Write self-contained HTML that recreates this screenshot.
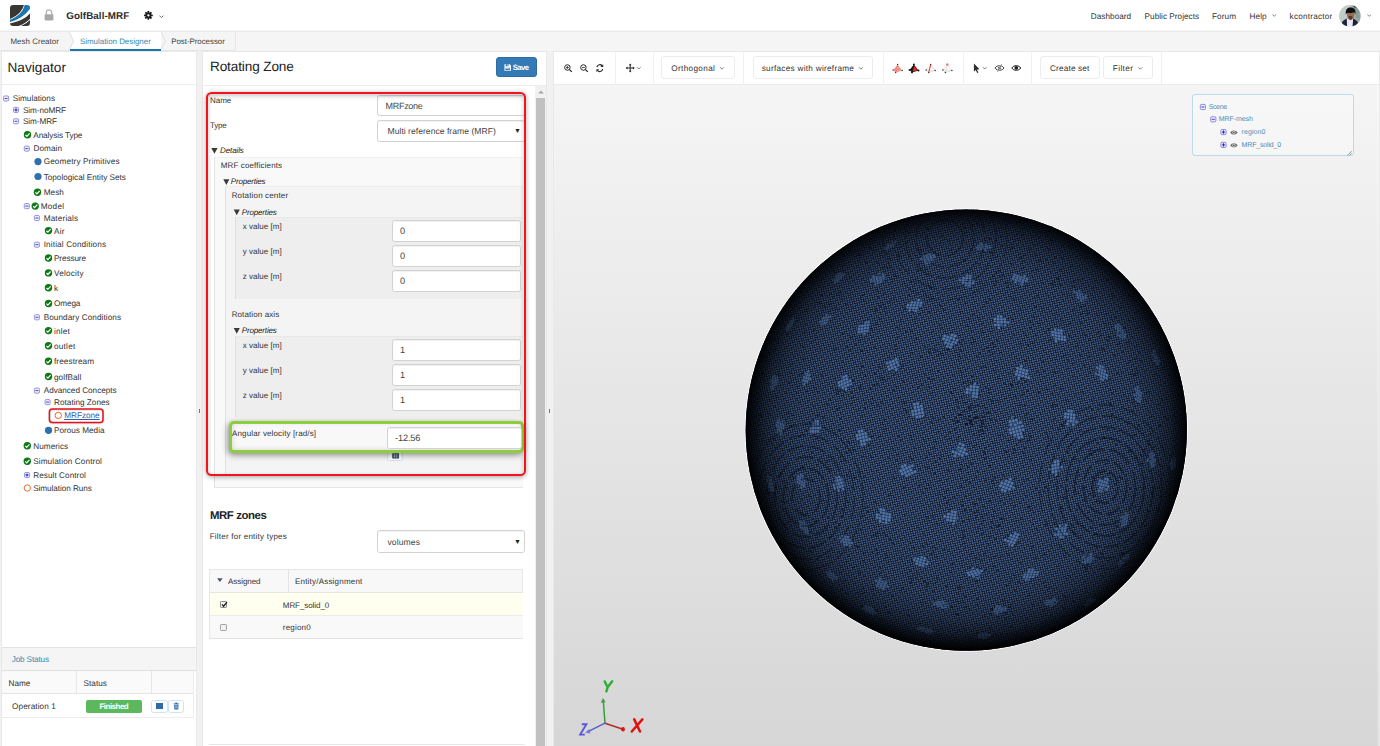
<!DOCTYPE html>
<html lang="en">
<head>
<meta charset="utf-8">
<title>GolfBall-MRF - Simulation Designer</title>
<style>
*{box-sizing:border-box;margin:0;padding:0}
html,body{width:1380px;height:746px;overflow:hidden;background:#f1f1f1;font-family:"Liberation Sans",sans-serif;color:#333}
#app{position:relative;width:1380px;height:746px;overflow:hidden}
.a{position:absolute}
.t{position:absolute;white-space:pre;line-height:1;font-size:8.2px;color:#333;text-rendering:geometricPrecision}
.gl{position:absolute;left:0;top:0;pointer-events:none}
.ic{position:absolute;overflow:visible}
/* header */
#hdr{left:0;top:0;width:1380px;height:32px;background:#fff;border-bottom:1px solid #e9e9e9;box-shadow:inset 0 -1px 0 #f6f6f6}
#tabs{left:0;top:32px;width:1380px;height:19px;background:#f5f5f5}
/* panels */
.panel{background:#fff;border:1px solid #e9e9e9}
.hr{background:#ececec;height:1px}
.inp{background:#fff;border:1px solid #d2d2d2;border-radius:2.5px;box-shadow:inset 0 1px 1px rgba(0,0,0,.06)}
.tb{background:#fff;border:1px solid #ececec;border-radius:3px}
.sep{background:#f0f0f0;width:1px;top:52px;height:33px}
</style>
</head>
<body>
<div id="app">

<!-- ================= HEADER ================= -->
<div id="hdr" class="a"></div>
<svg class="ic" style="left:10px;top:5px" width="20" height="21" viewBox="0 0 20 21">
  <defs><clipPath id="lg"><rect x="0" y="0" width="20" height="21" rx="3.2"/></clipPath></defs>
  <g clip-path="url(#lg)">
    <rect width="20" height="21" fill="#3a3633"/>
    <path d="M14.2 -1Q11.9 9.8 -1 14.4L-1 18.6Q14.6 15.8 21 7.4L21 -1Z" fill="#fff"/>
    <path d="M15 -1Q12.5 10.4 -1 15.1L-1 17.3Q14 13.6 21 2.2L21 -1Z" fill="#1b77ad"/>
    <path d="M21 12.6Q15.5 19.2 6.4 21.6L8.4 21.8Q16.2 19.8 21 13.9Z" fill="#fff"/>
  </g>
</svg>
<svg class="ic" style="left:44px;top:8.6px" width="10" height="12" viewBox="0 0 10 12">
  <path d="M2.3 5.6V3.6a2.7 2.7 0 0 1 5.4 0v2" fill="none" stroke="#b3b3b3" stroke-width="1.3"/>
  <rect x="0.6" y="5.2" width="8.8" height="6.2" rx="0.8" fill="#a9a9a9"/>
</svg>
<!-- gear -->
<svg class="ic" style="left:143.9px;top:11.2px" width="8.8" height="8.8" viewBox="0 0 16 16">
  <g fill="#1b1b1b">
    <circle cx="8" cy="8" r="5.2"/>
    <rect x="6.3" y="0" width="3.4" height="16" rx="0.8"/>
    <rect x="6.3" y="0" width="3.4" height="16" rx="0.8" transform="rotate(45 8 8)"/>
    <rect x="6.3" y="0" width="3.4" height="16" rx="0.8" transform="rotate(90 8 8)"/>
    <rect x="6.3" y="0" width="3.4" height="16" rx="0.8" transform="rotate(135 8 8)"/>
  </g>
  <circle cx="8" cy="8" r="2.1" fill="#fff"/>
</svg>
<svg class="ic" style="left:158.5px;top:14.8px" width="4.8" height="3.2" viewBox="0 0 4.8 3.2"><path d="M0.4 0.6L2.4 2.6L4.4 0.6" fill="none" stroke="#646464" stroke-width="0.95"/></svg>
<svg class="ic" style="left:1272.4px;top:14px" width="4.4" height="3" viewBox="0 0 4.4 3"><path d="M0.4 0.6L2.2 2.3L4 0.6" fill="none" stroke="#666" stroke-width="0.8"/></svg>
<svg class="ic" style="left:1366.7px;top:14px" width="4.4" height="3" viewBox="0 0 4.4 3"><path d="M0.4 0.6L2.2 2.3L4 0.6" fill="none" stroke="#666" stroke-width="0.8"/></svg>
<!-- avatar -->
<svg class="ic" style="left:1339px;top:4.6px" width="21.8" height="21.8" viewBox="0 0 22 22">
  <defs><clipPath id="av"><circle cx="11" cy="11" r="10.9"/></clipPath>
  <filter id="avb" x="-10%" y="-10%" width="120%" height="120%"><feGaussianBlur stdDeviation="0.45"/></filter></defs>
  <g clip-path="url(#av)"><g filter="url(#avb)">
    <rect x="-2" y="-2" width="26" height="26" fill="#c3cbc8"/>
    <path d="M12.5 -2H24V24H13Z" fill="#9aa9a2"/>
    <path d="M13.6 -1L16.4 -1L19.6 7.5L18 8Z" fill="#1f3a2d"/>
    <path d="M15.6 2L20 4L21 14L17.6 14Z" fill="#8b9c94"/>
    <path d="M1.2 23C1.6 17.5 4.6 15.2 8.4 13.4L11 17.4L13.8 13.4C17.4 15 20.4 17.4 20.8 23Z" fill="#1f2438"/>
    <path d="M7.9 13.8L11 12.6L14.2 13.8L13.6 23H8.2Z" fill="#e6e9f6"/>
    <path d="M7.9 8.2C7.9 6 9 5.4 11.6 5.4C14.4 5.4 15.4 6.2 15.4 8.4C15.4 12.4 13.8 15.4 11.6 15.4C9.4 15.4 7.9 12.2 7.9 8.2Z" fill="#9a6a50"/>
    <path d="M9.6 11.6C10.4 11 12.8 11 13.6 11.6C13.8 13.4 12.8 14.6 11.6 14.6C10.4 14.6 9.4 13.4 9.6 11.6Z" fill="#5a3a2c"/>
    <path d="M6.9 9.6C6.2 4.6 8.4 2.4 11.6 2.5C15.2 2.4 17.4 4.8 16.5 9.4C16 8.6 15.6 7.8 15.2 7.4C13.4 8.2 10.2 8.4 8.4 7.8C7.8 8.2 7.4 8.8 6.9 9.6Z" fill="#111012"/>
  </g></g>
</svg>

<!-- ================= TABS ================= -->
<div id="tabs" class="a"></div>
<div class="a" style="left:0;top:50px;width:235px;height:1px;background:#e6e6e6"></div>
<div class="a" style="left:67px;top:32px;width:93.7px;height:17px;background:#fff"></div>
<div class="a" style="left:70px;top:49px;width:91px;height:2px;background:#1a76ac"></div>
<div class="a" style="left:235px;top:32px;width:1px;height:19px;background:#e6e6e6"></div>
<svg class="ic" style="left:67px;top:32px" width="8" height="18" viewBox="0 0 8 19" preserveAspectRatio="none"><path d="M0 0H2.2L6.5 9.5L2.2 19H0Z" fill="#f5f5f5"/><path d="M2.2 0L6.5 9.5L2.2 19" fill="none" stroke="#dcdcdc" stroke-width="0.9"/></svg>
<svg class="ic" style="left:158.5px;top:32px" width="8" height="18" viewBox="0 0 8 19" preserveAspectRatio="none"><path d="M2.2 0L6.5 9.5L2.2 18H8V0Z" fill="#f5f5f5"/><path d="M2.2 0L6.5 9.5L2.2 18" fill="none" stroke="#dcdcdc" stroke-width="0.9"/></svg>

<!-- ================= NAVIGATOR PANEL ================= -->
<div class="a panel" style="left:1px;top:51px;width:196px;height:700px"></div>
<div class="a hr" style="left:2px;top:84px;width:194px"></div>
<!-- job status -->
<div class="a" style="left:2px;top:647px;width:194px;height:24px;background:#f5f5f5;border-top:1px solid #e2e2e2;border-bottom:1px solid #e0e0e0"></div>
<div class="a" style="left:2px;top:671px;width:192px;height:23px;background:#fafafa;border-bottom:1px solid #e4e4e4"></div>
<div class="a" style="left:76px;top:671px;width:1px;height:23px;background:#e6e6e6"></div>
<div class="a" style="left:151px;top:671px;width:1px;height:23px;background:#e6e6e6"></div>
<div class="a" style="left:193px;top:671px;width:1px;height:47px;background:#ececec"></div>
<div class="a" style="left:2px;top:717px;width:192px;height:1px;background:#ececec"></div>
<div class="a" style="left:86.3px;top:699.5px;width:55.6px;height:13px;background:#5cb85c;border-radius:2px"></div>
<div class="a" style="left:151.2px;top:699.5px;width:16.4px;height:13.4px;background:#fff;border:1px solid #cfe3f0;border-radius:2.5px"></div>
<div class="a" style="left:167.7px;top:699.5px;width:16.2px;height:13.4px;background:#fff;border:1px solid #cfe3f0;border-radius:2.5px"></div>
<div class="a" style="left:156.2px;top:702.9px;width:6.8px;height:6.6px;background:#2c6aa8"></div>
<svg class="ic" style="left:172.6px;top:702.2px" width="6.6" height="7.8" viewBox="0 0 14 16">
  <path d="M1 3H13V4.6H1ZM5 1H9V3H5Z" fill="#2c6aa8"/><path d="M2.2 5.4H11.8L11 15.4H3Z" fill="#2c6aa8"/>
  <path d="M5 7V13.4M7 7V13.4M9 7V13.4" stroke="#fff" stroke-width="0.9"/>
</svg>

<!-- tree icons -->
<svg class="gl" width="200" height="500" viewBox="0 0 200 500">
  <defs>
    <g id="mi"><rect x="-2.55" y="-2.55" width="5.1" height="5.1" rx="1.2" fill="#eeeeff" stroke="#7474d6" stroke-width="0.75"/><path d="M-1.5 0H1.5" stroke="#3030b0" stroke-width="0.85"/></g>
    <g id="pl"><rect x="-2.55" y="-2.55" width="5.1" height="5.1" rx="1.2" fill="#eeeeff" stroke="#7474d6" stroke-width="0.75"/><path d="M-1.6 0H1.6M0 -1.6V1.6" stroke="#2626c4" stroke-width="1.05"/></g>
    <g id="ck"><circle r="3.7" fill="#0b7a12"/><path d="M-2 0.1L-0.6 1.6L2.1 -1.4" fill="none" stroke="#fff" stroke-width="1.25"/></g>
    <g id="bd"><circle r="3.6" fill="#2f6fad"/></g>
    <g id="oc"><circle r="3.2" fill="#fff" stroke="#e0662a" stroke-width="0.95"/></g>
  </defs>
  <use href="#mi" x="6.1" y="98.5"/>
  <use href="#pl" x="16" y="109.9"/>
  <use href="#mi" x="16" y="121.3"/>
  <use href="#ck" x="27.5" y="134.8"/>
  <use href="#mi" x="26.8" y="148.6"/>
  <use href="#bd" x="38" y="161.6"/>
  <use href="#bd" x="38" y="176.5"/>
  <use href="#ck" x="37.5" y="192.3"/>
  <use href="#mi" x="26.8" y="206.1"/>
  <use href="#ck" x="35.2" y="206.1"/>
  <use href="#mi" x="36.9" y="218"/>
  <use href="#ck" x="48.5" y="230.6"/>
  <use href="#mi" x="36.9" y="244.7"/>
  <use href="#ck" x="48.5" y="258"/>
  <use href="#ck" x="48.5" y="272.9"/>
  <use href="#ck" x="48.5" y="287.8"/>
  <use href="#ck" x="48.5" y="303.5"/>
  <use href="#mi" x="36.9" y="317.3"/>
  <use href="#ck" x="48.5" y="330.6"/>
  <use href="#ck" x="48.5" y="345.8"/>
  <use href="#ck" x="48.5" y="361.3"/>
  <use href="#ck" x="48.5" y="376.5"/>
  <use href="#mi" x="36.9" y="390.6"/>
  <use href="#mi" x="47.6" y="402.1"/>
  <use href="#oc" x="58.3" y="415.4"/>
  <use href="#bd" x="48.5" y="430.3"/>
  <use href="#ck" x="27.3" y="445.8"/>
  <use href="#ck" x="27.3" y="461.3"/>
  <use href="#pl" x="27" y="475"/>
  <use href="#oc" x="27.3" y="488"/>
  <rect x="49.6" y="409.7" width="53.6" height="13.4" rx="3" fill="none" stroke="#000" stroke-opacity="0.13" stroke-width="2.2"/><rect x="49.4" y="409" width="53.6" height="13.4" rx="3" fill="none" stroke="#e8121a" stroke-width="1.5"/>
</svg>

<!-- gutter handles -->
<div class="a" style="left:198.5px;top:409px;width:1px;height:4px;background:#777"></div>
<div class="a" style="left:549px;top:409px;width:1px;height:4px;background:#777"></div>

<!-- ================= CENTRE PANEL ================= -->
<div class="a panel" style="left:202px;top:51px;width:345px;height:700px"></div>
<div class="a hr" style="left:203px;top:84.5px;width:343px"></div>
<div class="a" style="left:496.2px;top:57.2px;width:40.6px;height:20px;background:#337ab7;border:1px solid #2e6da4;border-radius:3px"></div>
<svg class="ic" style="left:504.1px;top:63.9px" width="7.4" height="7" viewBox="0 0 14 14">
  <path d="M0.5 0.5H10.8L13.5 3.2V13.5H0.5Z" fill="#fff"/><rect x="3" y="0.5" width="6" height="4" fill="#337ab7"/><rect x="6.6" y="1.1" width="1.6" height="2.6" fill="#fff"/><rect x="2.6" y="7.6" width="8.8" height="4.6" fill="#337ab7"/><rect x="3.6" y="8.6" width="6.8" height="1.2" fill="#fff"/>
</svg>
<!-- scrollbar -->
<div class="a" style="left:535px;top:85.5px;width:11px;height:661px;background:#f1f1f1"></div>
<div class="a" style="left:535.6px;top:98px;width:9.4px;height:650px;background:#c1c1c1"></div>
<svg class="ic" style="left:537.6px;top:89.6px" width="6" height="4" viewBox="0 0 6 4"><path d="M0.2 3.6L3 0.5L5.8 3.6Z" fill="#a3a3a3"/></svg>

<!-- nested blocks -->
<div class="a" style="left:214px;top:156.5px;width:309px;height:331px;background:#f9f9f9;border-left:1px solid #e2e2e2;border-bottom:1px solid #e4e4e4;border-top:1px solid #f0f0f0"></div>
<div class="a" style="left:224.5px;top:186.3px;width:298.5px;height:288px;background:#f4f4f4;border-left:1px solid #e0e0e0;border-top:1px solid #ededed"></div>
<div class="a" style="left:235px;top:217px;width:288px;height:81.8px;background:#eeeeee;border-left:1px solid #dedede;border-top:1px solid #e8e8e8"></div>
<div class="a" style="left:235px;top:335.8px;width:288px;height:81px;background:#eeeeee;border-left:1px solid #dedede;border-top:1px solid #e8e8e8"></div>
<!-- disclosure triangles -->
<svg class="gl" width="560" height="600" viewBox="0 0 560 600">
  <path d="M211.3 148H217.6L214.45 153.8Z" fill="#3a3a3a"/>
  <path d="M223.3 179.2H229.4L226.35 185Z" fill="#3a3a3a"/>
  <path d="M233.7 209.4H239.8L236.75 215.2Z" fill="#3a3a3a"/>
  <path d="M233.7 328H239.8L236.75 333.8Z" fill="#3a3a3a"/>
</svg>
<!-- inputs -->
<div class="a inp" style="left:377px;top:95.3px;width:148px;height:21.2px"></div>
<div class="a inp" style="left:377px;top:120.3px;width:148px;height:21.5px"></div>
<div class="a inp" style="left:392px;top:220px;width:128.6px;height:22px"></div>
<div class="a inp" style="left:392px;top:245.2px;width:128.6px;height:22px"></div>
<div class="a inp" style="left:392px;top:270.3px;width:128.6px;height:22px"></div>
<div class="a inp" style="left:392px;top:338.6px;width:128.6px;height:22px"></div>
<div class="a inp" style="left:392px;top:363.9px;width:128.6px;height:22px"></div>
<div class="a inp" style="left:392px;top:389.1px;width:128.6px;height:22px"></div>
<!-- small table button -->
<div class="a" style="left:387px;top:450px;width:16.4px;height:11px;background:#fdfdfd;border:1px solid #cfe3f0;border-radius:2.5px"></div>
<svg class="ic" style="left:391.7px;top:453.3px" width="7.2" height="5.6" viewBox="0 0 14.4 11.2"><rect x="0.4" y="0.4" width="13.6" height="10.4" rx="0.8" fill="#3d4763"/><path d="M5 1.8V9.6M9.4 1.8V9.6" stroke="#dfe3ee" stroke-width="1.3"/><path d="M1.6 4H12.8M1.6 7.2H12.8" stroke="#8790a8" stroke-width="0.8"/></svg>
<!-- green highlight -->
<div class="a" style="left:228.6px;top:421.4px;width:295.4px;height:31.6px;border:3px solid #8ccf3a;border-radius:5px;background:#f8f8f8;box-shadow:-1px 2px 6px rgba(0,0,0,.45), inset 1px -1px 4px rgba(0,0,0,.12)"></div>
<div class="a inp" style="left:387px;top:427.4px;width:134.6px;height:21.4px"></div>
<!-- red highlight -->
<div class="a" style="left:206.4px;top:92.4px;width:319.2px;height:383.6px;border:2px solid #f4131c;border-radius:5.5px;box-shadow:0 1px 5px rgba(0,0,0,.35), inset 0 2px 5px rgba(0,0,0,.22)"></div>

<!-- filter select + table -->
<div class="a inp" style="left:376.7px;top:530.3px;width:148px;height:22.3px"></div>
<div class="a" style="left:209.2px;top:568.8px;width:314px;height:24px;background:#f8f8f8;border:1px solid #e6e6e6"></div>
<div class="a" style="left:287.5px;top:569px;width:1px;height:23px;background:#e4e4e4"></div>
<div class="a" style="left:209.2px;top:592.6px;width:314px;height:23px;background:#fffff0;border-left:1px solid #e6e6e6;border-bottom:1px solid #ececec"></div>
<div class="a" style="left:209.2px;top:615.6px;width:314px;height:23px;background:#f9f9f9;border-left:1px solid #e6e6e6;border-bottom:1px solid #e2e2e2"></div>
<div class="a" style="left:219.9px;top:601.3px;width:6.8px;height:6.8px;background:#f3f3f3;border:1px solid #8a8a8a;border-radius:1.2px"></div>
<svg class="ic" style="left:220.6px;top:600.6px" width="6.6" height="6.6" viewBox="0 0 10 10"><path d="M1.6 5.4L4 7.8L9 1.6" fill="none" stroke="#1a1a1a" stroke-width="2"/></svg>
<div class="a" style="left:219.9px;top:624.1px;width:6.8px;height:6.8px;background:#f0f0f0;border:1px solid #a4a4a4;border-radius:1.2px"></div>
<svg class="ic" style="left:217px;top:578.2px" width="6" height="4.2" viewBox="0 0 6 4.2"><path d="M0.1 0.2H5.7L2.9 4Z" fill="#4b5560"/></svg>
<div class="a hr" style="left:209px;top:743.5px;width:316px;background:#e6e6e6"></div>

<!-- ================= RIGHT PANEL ================= -->
<div class="a" style="left:553px;top:51px;width:826.5px;height:700px;border:1px solid #e9e9e9;background:#f3f3f3"></div>
<div class="a" style="left:554px;top:85px;width:822.6px;height:661px;background:linear-gradient(#f5f5f5 0,#d6d6d6 100%)"></div>
<div class="a" style="left:1376.6px;top:85px;width:2px;height:661px;background:linear-gradient(#f8f8f8 0,#dedede 100%)"></div>
<div class="a" style="left:554px;top:52px;width:824.5px;height:33px;background:#fff;border-bottom:1px solid #ebebeb"></div>
<div class="a sep" style="left:614.5px"></div>
<div class="a sep" style="left:653px"></div>
<div class="a sep" style="left:743.3px"></div>
<div class="a sep" style="left:882.5px"></div>
<div class="a sep" style="left:962.5px"></div>
<div class="a sep" style="left:1031.3px"></div>
<div class="a sep" style="left:1161.3px"></div>
<div class="a tb" style="left:660.5px;top:56.3px;width:74.6px;height:22.5px"></div>
<div class="a tb" style="left:752.5px;top:56.3px;width:120.8px;height:22.5px"></div>
<div class="a tb" style="left:1039.5px;top:56.3px;width:60.8px;height:22.5px"></div>
<div class="a tb" style="left:1102.5px;top:56.3px;width:50.8px;height:22.5px"></div>
<!-- toolbar icons -->
<svg class="gl" width="1380" height="100" viewBox="0 0 1380 100">
  <g fill="none" stroke="#262626" stroke-width="1">
    <circle cx="567.4" cy="67.5" r="2.75"/><path d="M569.5 69.6L571.8 71.9" stroke-width="1.25"/><path d="M566 67.5H568.8M567.4 66.1V68.9" stroke-width="0.8"/>
    <circle cx="583.4" cy="67.5" r="2.75"/><path d="M585.5 69.6L587.8 71.9" stroke-width="1.25"/><path d="M582 67.5H584.8" stroke-width="0.8"/>
    <path d="M596.9 67A3 3 0 0 1 602.2 65.9" stroke-width="1.2"/><path d="M602.7 69.2A3 3 0 0 1 597.4 70.4" stroke-width="1.2"/>
  </g>
  <path d="M603.2 64.2V67H600.4Z M596.4 72V69.2H599.2Z" fill="#262626"/>
  <!-- move -->
  <g stroke="#262626" stroke-width="1" fill="#262626">
    <path d="M626.9 68H633.5M630.2 64.7V71.3" fill="none"/>
    <path d="M630.2 63.5L631.6 65.3H628.8Z M630.2 72.5L631.6 70.7H628.8Z M625.7 68L627.5 66.6V69.4Z M634.7 68L632.9 66.6V69.4Z" stroke="none"/>
  </g>
  <g fill="none" stroke="#5a5a5a" stroke-width="0.8">
    <path d="M637 67.2L638.8 69L640.6 67.2"/>
    <path d="M720.2 67.4L722 69.2L723.8 67.4"/>
    <path d="M859 67.4L860.8 69.2L862.6 67.4"/>
    <path d="M982.9 67.2L984.7 69L986.5 67.2"/>
    <path d="M1138.5 67.4L1140.3 69.2L1142.1 67.4"/>
  </g>
  <!-- tetra icons -->
  <g>
    <path d="M897.6 64.5L893.2 69.9L895.7 72.4L902.2 70.5Z" fill="#f1958b"/><path d="M897.6 64.5L895.7 72.4" stroke="#e9776c" stroke-width="0.5" fill="none"/><g fill="#3a3a3a"><circle cx="893.2" cy="69.9" r="0.75"/><circle cx="902.2" cy="70.5" r="0.75"/><circle cx="895.7" cy="72.4" r="0.75"/><circle cx="897.6" cy="64.5" r="0.75"/></g>
    <path d="M913.9 64.5L909.5 69.9L912.0 72.4L918.5 70.5Z" fill="#171717"/><path d="M914.2 66.1L912.6 71.5L917.3 70.3Z" fill="#ef2a1c"/><g fill="#111"><circle cx="909.5" cy="69.9" r="0.95"/><circle cx="918.5" cy="70.5" r="0.95"/><circle cx="912.0" cy="72.4" r="0.95"/><circle cx="913.9" cy="64.5" r="0.95"/></g>
    <path d="M930.6 64.5L926.2 69.9L928.7 72.4L935.2 70.5ZM926.2 69.9L935.2 70.5" fill="#fff" stroke="#c4c4c4" stroke-width="0.45"/><path d="M930.7 64.9L928.8 72.0" stroke="#f0392c" stroke-width="1.05"/><g fill="#3a3a3a"><circle cx="926.2" cy="69.9" r="0.75"/><circle cx="935.2" cy="70.5" r="0.75"/><circle cx="928.7" cy="72.4" r="0.75"/><circle cx="930.6" cy="64.5" r="0.75"/></g>
    <path d="M947.3 64.5L942.9 69.9L945.4 72.4L951.9 70.5ZM942.9 69.9L951.9 70.5M947.3 64.5L945.4 72.4" fill="#fff" stroke="#bdbdbd" stroke-width="0.45"/><g fill="#3a3a3a"><circle cx="942.9" cy="69.9" r="0.75"/><circle cx="951.9" cy="70.5" r="0.75"/><circle cx="945.4" cy="72.4" r="0.75"/></g><circle cx="947.3" cy="64.6" r="1.25" fill="#f6756a"/>
  </g>
  <!-- cursor -->
  <path d="M973.9 63.6V71.7L975.8 70L977.2 73L978.4 72.4L977 69.5L979.6 69.3Z" fill="#2e2e2e"/>
  <!-- eye-slash -->
  <path d="M995 68C997 64.9 1002 64.9 1004 68C1002 71.1 997 71.1 995 68Z" fill="none" stroke="#333" stroke-width="0.9"/><circle cx="999.5" cy="68" r="1.5" fill="#333"/><path d="M1001.9 64.2L997.3 71.8" stroke="#fff" stroke-width="1.6"/><path d="M1001.6 64.4L997.6 71.6" stroke="#333" stroke-width="0.8"/>
  <!-- eye -->
  <path d="M1011.8 68C1013.8 64.9 1018.8 64.9 1020.8 68C1018.8 71.1 1013.8 71.1 1011.8 68Z" fill="none" stroke="#222" stroke-width="1"/><circle cx="1016.3" cy="67.8" r="1.9" fill="#222"/>
</svg>

<!-- scene tree box -->
<div class="a" style="left:1192px;top:94.4px;width:161.6px;height:62px;background:rgba(255,255,255,.3);border:1px solid #bcdbea;border-radius:3px"></div>
<svg class="gl" width="1380" height="170" viewBox="0 0 1380 170">
  <defs>
    <g id="smi"><rect x="-2.6" y="-2.6" width="5.2" height="5.2" rx="1.2" fill="#ececff" stroke="#6a6ad4" stroke-width="0.75"/><path d="M-1.5 0H1.5" stroke="#2b2bb0" stroke-width="0.85"/></g>
    <g id="spl"><rect x="-2.6" y="-2.6" width="5.2" height="5.2" rx="1.2" fill="#ececff" stroke="#6a6ad4" stroke-width="0.75"/><path d="M-1.6 0H1.6M0 -1.6V1.6" stroke="#2222c8" stroke-width="1"/></g>
    <g id="sey"><path d="M-3.7 0C-2 -2.7 2 -2.7 3.7 0C2 2.7 -2 2.7 -3.7 0Z" fill="#6d6d6d"/><circle r="1.45" fill="#f4f4f4"/><circle r="0.9" fill="#555"/></g>
  </defs>
  <use href="#smi" x="1202.9" y="107"/>
  <use href="#smi" x="1213.3" y="119.3"/>
  <use href="#spl" x="1223.5" y="132.1"/>
  <use href="#sey" x="1233.9" y="132.4"/>
  <use href="#spl" x="1223.5" y="144.9"/>
  <use href="#sey" x="1233.9" y="145.2"/>
  <path d="M1351.6 151.2L1347.4 155.4M1351.6 153.4L1349.6 155.4" stroke="#555" stroke-width="0.6"/>
</svg>

<svg class="gl" width="1380" height="746" viewBox="0 0 1380 746">
<defs>
<radialGradient id="sg" cx="0.5" cy="0.5" r="0.5">
 <stop offset="0" stop-color="#4f6da0"/><stop offset="0.55" stop-color="#4b6899"/>
 <stop offset="0.8" stop-color="#425c88"/><stop offset="0.92" stop-color="#33486c"/><stop offset="1" stop-color="#18243a"/>
</radialGradient>
<radialGradient id="rim" cx="0.5" cy="0.492" r="0.5">
 <stop offset="0" stop-color="#000" stop-opacity="0"/><stop offset="0.74" stop-color="#000" stop-opacity="0"/>
 <stop offset="0.86" stop-color="#000" stop-opacity="0.13"/><stop offset="0.92" stop-color="#000" stop-opacity="0.36"/>
 <stop offset="0.96" stop-color="#000" stop-opacity="0.66"/><stop offset="0.985" stop-color="#000" stop-opacity="0.93"/>
 <stop offset="1" stop-color="#000" stop-opacity="1"/>
</radialGradient>
<pattern id="mesh" width="2.3" height="2.3" patternUnits="userSpaceOnUse" patternTransform="rotate(-12 966 430)">
 <path d="M0 0.35H2.3M0.35 0V2.3" stroke="#04080f" stroke-width="0.8" stroke-opacity="0.8" fill="none"/>
</pattern>
<pattern id="mesh2" width="2.3" height="2.3" patternUnits="userSpaceOnUse" patternTransform="rotate(28 966 430)">
 <path d="M0 0.35H2.3" stroke="#04080f" stroke-width="0.5" stroke-opacity="0.35" fill="none"/>
</pattern>
<clipPath id="sc"><circle cx="966.3" cy="430.1" r="220.6"/></clipPath>
</defs>
<circle cx="966.3" cy="430.1" r="221.6" fill="#fff" fill-opacity="0.95"/>
<circle cx="966.3" cy="430.1" r="220.6" fill="url(#sg)"/>
<g clip-path="url(#sc)">
<rect x="740" y="205" width="455" height="452" fill="url(#mesh)"/>
<rect x="740" y="205" width="455" height="452" fill="url(#mesh2)"/>
<g transform="translate(891.1 245.1) rotate(-112.1) scale(0.425 1) rotate(108.3)" opacity="0.54"><rect x="-8.55" y="1.35" width="3.9" height="3.9" fill="#22354f"/><rect x="-5.25" y="-5.25" width="3.9" height="3.9" fill="#22354f"/><rect x="-5.25" y="-1.95" width="3.9" height="3.9" fill="#22354f"/><rect x="-5.25" y="1.35" width="3.9" height="3.9" fill="#22354f"/><rect x="-5.25" y="4.65" width="3.9" height="3.9" fill="#22354f"/><rect x="-1.95" y="-8.55" width="3.9" height="3.9" fill="#22354f"/><rect x="-1.95" y="-5.25" width="3.9" height="3.9" fill="#22354f"/><rect x="-1.95" y="-1.95" width="3.9" height="3.9" fill="#22354f"/><rect x="-1.95" y="1.35" width="3.9" height="3.9" fill="#22354f"/><rect x="1.35" y="-8.55" width="3.9" height="3.9" fill="#22354f"/><rect x="1.35" y="-5.25" width="3.9" height="3.9" fill="#22354f"/><rect x="1.35" y="-1.95" width="3.9" height="3.9" fill="#22354f"/><rect x="1.35" y="1.35" width="3.9" height="3.9" fill="#22354f"/><rect x="-7.95" y="1.95" width="2.7" height="2.7" rx="0.5" fill="#5274a8"/><rect x="-4.65" y="-4.65" width="2.7" height="2.7" rx="0.5" fill="#5274a8"/><rect x="-4.65" y="-1.35" width="2.7" height="2.7" rx="0.5" fill="#5274a8"/><rect x="-4.65" y="1.95" width="2.7" height="2.7" rx="0.5" fill="#5274a8"/><rect x="-4.65" y="5.25" width="2.7" height="2.7" rx="0.5" fill="#5274a8"/><rect x="-1.35" y="-7.95" width="2.7" height="2.7" rx="0.5" fill="#5274a8"/><rect x="-1.35" y="-4.65" width="2.7" height="2.7" rx="0.5" fill="#5274a8"/><rect x="-1.35" y="-1.35" width="2.7" height="2.7" rx="0.5" fill="#5274a8"/><rect x="-1.35" y="1.95" width="2.7" height="2.7" rx="0.5" fill="#5274a8"/><rect x="1.95" y="-7.95" width="2.7" height="2.7" rx="0.5" fill="#5274a8"/><rect x="1.95" y="-4.65" width="2.7" height="2.7" rx="0.5" fill="#5274a8"/><rect x="1.95" y="-1.35" width="2.7" height="2.7" rx="0.5" fill="#5274a8"/><rect x="1.95" y="1.95" width="2.7" height="2.7" rx="0.5" fill="#5274a8"/></g>
<g transform="translate(928.1 259.0) rotate(-102.6) scale(0.607 1) rotate(83.5)" opacity="0.71"><rect x="-8.55" y="-5.25" width="3.9" height="3.9" fill="#22354f"/><rect x="-5.25" y="-8.55" width="3.9" height="3.9" fill="#22354f"/><rect x="-5.25" y="-5.25" width="3.9" height="3.9" fill="#22354f"/><rect x="-5.25" y="-1.95" width="3.9" height="3.9" fill="#22354f"/><rect x="-5.25" y="1.35" width="3.9" height="3.9" fill="#22354f"/><rect x="-5.25" y="4.65" width="3.9" height="3.9" fill="#22354f"/><rect x="-1.95" y="-8.55" width="3.9" height="3.9" fill="#22354f"/><rect x="-1.95" y="-5.25" width="3.9" height="3.9" fill="#22354f"/><rect x="-1.95" y="-1.95" width="3.9" height="3.9" fill="#22354f"/><rect x="-1.95" y="1.35" width="3.9" height="3.9" fill="#22354f"/><rect x="-1.95" y="4.65" width="3.9" height="3.9" fill="#22354f"/><rect x="1.35" y="-8.55" width="3.9" height="3.9" fill="#22354f"/><rect x="1.35" y="-5.25" width="3.9" height="3.9" fill="#22354f"/><rect x="1.35" y="-1.95" width="3.9" height="3.9" fill="#22354f"/><rect x="1.35" y="1.35" width="3.9" height="3.9" fill="#22354f"/><rect x="4.65" y="-5.25" width="3.9" height="3.9" fill="#22354f"/><rect x="4.65" y="-1.95" width="3.9" height="3.9" fill="#22354f"/><rect x="-7.95" y="-4.65" width="2.7" height="2.7" rx="0.5" fill="#5274a8"/><rect x="-4.65" y="-7.95" width="2.7" height="2.7" rx="0.5" fill="#5274a8"/><rect x="-4.65" y="-4.65" width="2.7" height="2.7" rx="0.5" fill="#5274a8"/><rect x="-4.65" y="-1.35" width="2.7" height="2.7" rx="0.5" fill="#5274a8"/><rect x="-4.65" y="1.95" width="2.7" height="2.7" rx="0.5" fill="#5274a8"/><rect x="-4.65" y="5.25" width="2.7" height="2.7" rx="0.5" fill="#5274a8"/><rect x="-1.35" y="-7.95" width="2.7" height="2.7" rx="0.5" fill="#5274a8"/><rect x="-1.35" y="-4.65" width="2.7" height="2.7" rx="0.5" fill="#5274a8"/><rect x="-1.35" y="-1.35" width="2.7" height="2.7" rx="0.5" fill="#5274a8"/><rect x="-1.35" y="1.95" width="2.7" height="2.7" rx="0.5" fill="#5274a8"/><rect x="-1.35" y="5.25" width="2.7" height="2.7" rx="0.5" fill="#5274a8"/><rect x="1.95" y="-7.95" width="2.7" height="2.7" rx="0.5" fill="#5274a8"/><rect x="1.95" y="-4.65" width="2.7" height="2.7" rx="0.5" fill="#5274a8"/><rect x="1.95" y="-1.35" width="2.7" height="2.7" rx="0.5" fill="#5274a8"/><rect x="1.95" y="1.95" width="2.7" height="2.7" rx="0.5" fill="#5274a8"/><rect x="5.25" y="-4.65" width="2.7" height="2.7" rx="0.5" fill="#5274a8"/><rect x="5.25" y="-1.35" width="2.7" height="2.7" rx="0.5" fill="#5274a8"/></g>
<g transform="translate(838.7 277.5) rotate(-129.9) scale(0.432 1) rotate(120.6)" opacity="0.55"><rect x="-8.55" y="-1.95" width="3.9" height="3.9" fill="#22354f"/><rect x="-5.25" y="-8.55" width="3.9" height="3.9" fill="#22354f"/><rect x="-5.25" y="-5.25" width="3.9" height="3.9" fill="#22354f"/><rect x="-5.25" y="-1.95" width="3.9" height="3.9" fill="#22354f"/><rect x="-5.25" y="1.35" width="3.9" height="3.9" fill="#22354f"/><rect x="-5.25" y="4.65" width="3.9" height="3.9" fill="#22354f"/><rect x="-1.95" y="-8.55" width="3.9" height="3.9" fill="#22354f"/><rect x="-1.95" y="-5.25" width="3.9" height="3.9" fill="#22354f"/><rect x="-1.95" y="-1.95" width="3.9" height="3.9" fill="#22354f"/><rect x="-1.95" y="1.35" width="3.9" height="3.9" fill="#22354f"/><rect x="-1.95" y="4.65" width="3.9" height="3.9" fill="#22354f"/><rect x="1.35" y="-5.25" width="3.9" height="3.9" fill="#22354f"/><rect x="1.35" y="-1.95" width="3.9" height="3.9" fill="#22354f"/><rect x="1.35" y="1.35" width="3.9" height="3.9" fill="#22354f"/><rect x="4.65" y="-1.95" width="3.9" height="3.9" fill="#22354f"/><rect x="-7.95" y="-1.35" width="2.7" height="2.7" rx="0.5" fill="#5274a8"/><rect x="-4.65" y="-7.95" width="2.7" height="2.7" rx="0.5" fill="#5274a8"/><rect x="-4.65" y="-4.65" width="2.7" height="2.7" rx="0.5" fill="#5274a8"/><rect x="-4.65" y="-1.35" width="2.7" height="2.7" rx="0.5" fill="#5274a8"/><rect x="-4.65" y="1.95" width="2.7" height="2.7" rx="0.5" fill="#5274a8"/><rect x="-4.65" y="5.25" width="2.7" height="2.7" rx="0.5" fill="#5274a8"/><rect x="-1.35" y="-7.95" width="2.7" height="2.7" rx="0.5" fill="#5274a8"/><rect x="-1.35" y="-4.65" width="2.7" height="2.7" rx="0.5" fill="#5274a8"/><rect x="-1.35" y="-1.35" width="2.7" height="2.7" rx="0.5" fill="#5274a8"/><rect x="-1.35" y="1.95" width="2.7" height="2.7" rx="0.5" fill="#5274a8"/><rect x="-1.35" y="5.25" width="2.7" height="2.7" rx="0.5" fill="#5274a8"/><rect x="1.95" y="-4.65" width="2.7" height="2.7" rx="0.5" fill="#5274a8"/><rect x="1.95" y="-1.35" width="2.7" height="2.7" rx="0.5" fill="#5274a8"/><rect x="1.95" y="1.95" width="2.7" height="2.7" rx="0.5" fill="#5274a8"/><rect x="5.25" y="-1.35" width="2.7" height="2.7" rx="0.5" fill="#5274a8"/></g>
<g transform="translate(877.2 279.0) rotate(-120.5) scale(0.606 1) rotate(101.4)" opacity="0.71"><rect x="-8.55" y="-5.25" width="3.9" height="3.9" fill="#22354f"/><rect x="-8.55" y="-1.95" width="3.9" height="3.9" fill="#22354f"/><rect x="-5.25" y="-8.55" width="3.9" height="3.9" fill="#22354f"/><rect x="-5.25" y="-5.25" width="3.9" height="3.9" fill="#22354f"/><rect x="-5.25" y="-1.95" width="3.9" height="3.9" fill="#22354f"/><rect x="-5.25" y="1.35" width="3.9" height="3.9" fill="#22354f"/><rect x="-5.25" y="4.65" width="3.9" height="3.9" fill="#22354f"/><rect x="-1.95" y="-5.25" width="3.9" height="3.9" fill="#22354f"/><rect x="-1.95" y="-1.95" width="3.9" height="3.9" fill="#22354f"/><rect x="-1.95" y="1.35" width="3.9" height="3.9" fill="#22354f"/><rect x="-1.95" y="4.65" width="3.9" height="3.9" fill="#22354f"/><rect x="1.35" y="-8.55" width="3.9" height="3.9" fill="#22354f"/><rect x="1.35" y="-5.25" width="3.9" height="3.9" fill="#22354f"/><rect x="1.35" y="-1.95" width="3.9" height="3.9" fill="#22354f"/><rect x="1.35" y="1.35" width="3.9" height="3.9" fill="#22354f"/><rect x="1.35" y="4.65" width="3.9" height="3.9" fill="#22354f"/><rect x="4.65" y="-5.25" width="3.9" height="3.9" fill="#22354f"/><rect x="4.65" y="-1.95" width="3.9" height="3.9" fill="#22354f"/><rect x="4.65" y="1.35" width="3.9" height="3.9" fill="#22354f"/><rect x="-7.95" y="-4.65" width="2.7" height="2.7" rx="0.5" fill="#5274a8"/><rect x="-7.95" y="-1.35" width="2.7" height="2.7" rx="0.5" fill="#5274a8"/><rect x="-4.65" y="-7.95" width="2.7" height="2.7" rx="0.5" fill="#5274a8"/><rect x="-4.65" y="-4.65" width="2.7" height="2.7" rx="0.5" fill="#5274a8"/><rect x="-4.65" y="-1.35" width="2.7" height="2.7" rx="0.5" fill="#5274a8"/><rect x="-4.65" y="1.95" width="2.7" height="2.7" rx="0.5" fill="#5274a8"/><rect x="-4.65" y="5.25" width="2.7" height="2.7" rx="0.5" fill="#5274a8"/><rect x="-1.35" y="-4.65" width="2.7" height="2.7" rx="0.5" fill="#5274a8"/><rect x="-1.35" y="-1.35" width="2.7" height="2.7" rx="0.5" fill="#5274a8"/><rect x="-1.35" y="1.95" width="2.7" height="2.7" rx="0.5" fill="#5274a8"/><rect x="-1.35" y="5.25" width="2.7" height="2.7" rx="0.5" fill="#5274a8"/><rect x="1.95" y="-7.95" width="2.7" height="2.7" rx="0.5" fill="#5274a8"/><rect x="1.95" y="-4.65" width="2.7" height="2.7" rx="0.5" fill="#5274a8"/><rect x="1.95" y="-1.35" width="2.7" height="2.7" rx="0.5" fill="#5274a8"/><rect x="1.95" y="1.95" width="2.7" height="2.7" rx="0.5" fill="#5274a8"/><rect x="1.95" y="5.25" width="2.7" height="2.7" rx="0.5" fill="#5274a8"/><rect x="5.25" y="-4.65" width="2.7" height="2.7" rx="0.5" fill="#5274a8"/><rect x="5.25" y="-1.35" width="2.7" height="2.7" rx="0.5" fill="#5274a8"/><rect x="5.25" y="1.95" width="2.7" height="2.7" rx="0.5" fill="#5274a8"/></g>
<g transform="translate(966.6 280.5) rotate(-89.9) scale(0.735 1) rotate(93.9)" opacity="0.88"><rect x="-8.55" y="-1.95" width="3.9" height="3.9" fill="#22354f"/><rect x="-5.25" y="-5.25" width="3.9" height="3.9" fill="#22354f"/><rect x="-5.25" y="-1.95" width="3.9" height="3.9" fill="#22354f"/><rect x="-5.25" y="1.35" width="3.9" height="3.9" fill="#22354f"/><rect x="-1.95" y="-8.55" width="3.9" height="3.9" fill="#22354f"/><rect x="-1.95" y="-5.25" width="3.9" height="3.9" fill="#22354f"/><rect x="-1.95" y="-1.95" width="3.9" height="3.9" fill="#22354f"/><rect x="-1.95" y="1.35" width="3.9" height="3.9" fill="#22354f"/><rect x="-1.95" y="4.65" width="3.9" height="3.9" fill="#22354f"/><rect x="1.35" y="-8.55" width="3.9" height="3.9" fill="#22354f"/><rect x="1.35" y="-5.25" width="3.9" height="3.9" fill="#22354f"/><rect x="1.35" y="-1.95" width="3.9" height="3.9" fill="#22354f"/><rect x="1.35" y="1.35" width="3.9" height="3.9" fill="#22354f"/><rect x="1.35" y="4.65" width="3.9" height="3.9" fill="#22354f"/><rect x="4.65" y="-1.95" width="3.9" height="3.9" fill="#22354f"/><rect x="4.65" y="1.35" width="3.9" height="3.9" fill="#22354f"/><rect x="-7.95" y="-1.35" width="2.7" height="2.7" rx="0.5" fill="#5274a8"/><rect x="-4.65" y="-4.65" width="2.7" height="2.7" rx="0.5" fill="#5274a8"/><rect x="-4.65" y="-1.35" width="2.7" height="2.7" rx="0.5" fill="#5274a8"/><rect x="-4.65" y="1.95" width="2.7" height="2.7" rx="0.5" fill="#5274a8"/><rect x="-1.35" y="-7.95" width="2.7" height="2.7" rx="0.5" fill="#5274a8"/><rect x="-1.35" y="-4.65" width="2.7" height="2.7" rx="0.5" fill="#5274a8"/><rect x="-1.35" y="-1.35" width="2.7" height="2.7" rx="0.5" fill="#5274a8"/><rect x="-1.35" y="1.95" width="2.7" height="2.7" rx="0.5" fill="#5274a8"/><rect x="-1.35" y="5.25" width="2.7" height="2.7" rx="0.5" fill="#5274a8"/><rect x="1.95" y="-7.95" width="2.7" height="2.7" rx="0.5" fill="#5274a8"/><rect x="1.95" y="-4.65" width="2.7" height="2.7" rx="0.5" fill="#5274a8"/><rect x="1.95" y="-1.35" width="2.7" height="2.7" rx="0.5" fill="#5274a8"/><rect x="1.95" y="1.95" width="2.7" height="2.7" rx="0.5" fill="#5274a8"/><rect x="1.95" y="5.25" width="2.7" height="2.7" rx="0.5" fill="#5274a8"/><rect x="5.25" y="-1.35" width="2.7" height="2.7" rx="0.5" fill="#5274a8"/><rect x="5.25" y="1.95" width="2.7" height="2.7" rx="0.5" fill="#5274a8"/></g>
<g transform="translate(914.2 305.2) rotate(-112.6) scale(0.790 1) rotate(121.1)" opacity="0.98"><rect x="-8.55" y="-1.95" width="3.9" height="3.9" fill="#22354f"/><rect x="-8.55" y="1.35" width="3.9" height="3.9" fill="#22354f"/><rect x="-5.25" y="-5.25" width="3.9" height="3.9" fill="#22354f"/><rect x="-5.25" y="-1.95" width="3.9" height="3.9" fill="#22354f"/><rect x="-5.25" y="1.35" width="3.9" height="3.9" fill="#22354f"/><rect x="-5.25" y="4.65" width="3.9" height="3.9" fill="#22354f"/><rect x="-1.95" y="-5.25" width="3.9" height="3.9" fill="#22354f"/><rect x="-1.95" y="-1.95" width="3.9" height="3.9" fill="#22354f"/><rect x="-1.95" y="1.35" width="3.9" height="3.9" fill="#22354f"/><rect x="-1.95" y="4.65" width="3.9" height="3.9" fill="#22354f"/><rect x="1.35" y="-8.55" width="3.9" height="3.9" fill="#22354f"/><rect x="1.35" y="-5.25" width="3.9" height="3.9" fill="#22354f"/><rect x="1.35" y="-1.95" width="3.9" height="3.9" fill="#22354f"/><rect x="1.35" y="1.35" width="3.9" height="3.9" fill="#22354f"/><rect x="1.35" y="4.65" width="3.9" height="3.9" fill="#22354f"/><rect x="4.65" y="-5.25" width="3.9" height="3.9" fill="#22354f"/><rect x="4.65" y="-1.95" width="3.9" height="3.9" fill="#22354f"/><rect x="-7.95" y="-1.35" width="2.7" height="2.7" rx="0.5" fill="#5274a8"/><rect x="-7.95" y="1.95" width="2.7" height="2.7" rx="0.5" fill="#5274a8"/><rect x="-4.65" y="-4.65" width="2.7" height="2.7" rx="0.5" fill="#5274a8"/><rect x="-4.65" y="-1.35" width="2.7" height="2.7" rx="0.5" fill="#5274a8"/><rect x="-4.65" y="1.95" width="2.7" height="2.7" rx="0.5" fill="#5274a8"/><rect x="-4.65" y="5.25" width="2.7" height="2.7" rx="0.5" fill="#5274a8"/><rect x="-1.35" y="-4.65" width="2.7" height="2.7" rx="0.5" fill="#5274a8"/><rect x="-1.35" y="-1.35" width="2.7" height="2.7" rx="0.5" fill="#5274a8"/><rect x="-1.35" y="1.95" width="2.7" height="2.7" rx="0.5" fill="#5274a8"/><rect x="-1.35" y="5.25" width="2.7" height="2.7" rx="0.5" fill="#5274a8"/><rect x="1.95" y="-7.95" width="2.7" height="2.7" rx="0.5" fill="#5274a8"/><rect x="1.95" y="-4.65" width="2.7" height="2.7" rx="0.5" fill="#5274a8"/><rect x="1.95" y="-1.35" width="2.7" height="2.7" rx="0.5" fill="#5274a8"/><rect x="1.95" y="1.95" width="2.7" height="2.7" rx="0.5" fill="#5274a8"/><rect x="1.95" y="5.25" width="2.7" height="2.7" rx="0.5" fill="#5274a8"/><rect x="5.25" y="-4.65" width="2.7" height="2.7" rx="0.5" fill="#5274a8"/><rect x="5.25" y="-1.35" width="2.7" height="2.7" rx="0.5" fill="#5274a8"/></g>
<g transform="translate(824.8 320.6) rotate(-142.3) scale(0.585 1) rotate(144.7)" opacity="0.68"><rect x="-8.55" y="-1.95" width="3.9" height="3.9" fill="#22354f"/><rect x="-5.25" y="-5.25" width="3.9" height="3.9" fill="#22354f"/><rect x="-5.25" y="-1.95" width="3.9" height="3.9" fill="#22354f"/><rect x="-5.25" y="1.35" width="3.9" height="3.9" fill="#22354f"/><rect x="-1.95" y="-8.55" width="3.9" height="3.9" fill="#22354f"/><rect x="-1.95" y="-5.25" width="3.9" height="3.9" fill="#22354f"/><rect x="-1.95" y="-1.95" width="3.9" height="3.9" fill="#22354f"/><rect x="-1.95" y="1.35" width="3.9" height="3.9" fill="#22354f"/><rect x="1.35" y="-5.25" width="3.9" height="3.9" fill="#22354f"/><rect x="1.35" y="-1.95" width="3.9" height="3.9" fill="#22354f"/><rect x="1.35" y="1.35" width="3.9" height="3.9" fill="#22354f"/><rect x="4.65" y="-5.25" width="3.9" height="3.9" fill="#22354f"/><rect x="-7.95" y="-1.35" width="2.7" height="2.7" rx="0.5" fill="#5274a8"/><rect x="-4.65" y="-4.65" width="2.7" height="2.7" rx="0.5" fill="#5274a8"/><rect x="-4.65" y="-1.35" width="2.7" height="2.7" rx="0.5" fill="#5274a8"/><rect x="-4.65" y="1.95" width="2.7" height="2.7" rx="0.5" fill="#5274a8"/><rect x="-1.35" y="-7.95" width="2.7" height="2.7" rx="0.5" fill="#5274a8"/><rect x="-1.35" y="-4.65" width="2.7" height="2.7" rx="0.5" fill="#5274a8"/><rect x="-1.35" y="-1.35" width="2.7" height="2.7" rx="0.5" fill="#5274a8"/><rect x="-1.35" y="1.95" width="2.7" height="2.7" rx="0.5" fill="#5274a8"/><rect x="1.95" y="-4.65" width="2.7" height="2.7" rx="0.5" fill="#5274a8"/><rect x="1.95" y="-1.35" width="2.7" height="2.7" rx="0.5" fill="#5274a8"/><rect x="1.95" y="1.95" width="2.7" height="2.7" rx="0.5" fill="#5274a8"/><rect x="5.25" y="-4.65" width="2.7" height="2.7" rx="0.5" fill="#5274a8"/></g>
<g transform="translate(864.9 328.3) rotate(-134.9) scale(0.759 1) rotate(134.1)" opacity="0.92"><rect x="-8.55" y="-5.25" width="3.9" height="3.9" fill="#22354f"/><rect x="-8.55" y="-1.95" width="3.9" height="3.9" fill="#22354f"/><rect x="-8.55" y="1.35" width="3.9" height="3.9" fill="#22354f"/><rect x="-5.25" y="-5.25" width="3.9" height="3.9" fill="#22354f"/><rect x="-5.25" y="-1.95" width="3.9" height="3.9" fill="#22354f"/><rect x="-5.25" y="1.35" width="3.9" height="3.9" fill="#22354f"/><rect x="-1.95" y="-8.55" width="3.9" height="3.9" fill="#22354f"/><rect x="-1.95" y="-5.25" width="3.9" height="3.9" fill="#22354f"/><rect x="-1.95" y="-1.95" width="3.9" height="3.9" fill="#22354f"/><rect x="-1.95" y="1.35" width="3.9" height="3.9" fill="#22354f"/><rect x="-1.95" y="4.65" width="3.9" height="3.9" fill="#22354f"/><rect x="1.35" y="-8.55" width="3.9" height="3.9" fill="#22354f"/><rect x="1.35" y="-5.25" width="3.9" height="3.9" fill="#22354f"/><rect x="1.35" y="-1.95" width="3.9" height="3.9" fill="#22354f"/><rect x="1.35" y="1.35" width="3.9" height="3.9" fill="#22354f"/><rect x="-7.95" y="-4.65" width="2.7" height="2.7" rx="0.5" fill="#5274a8"/><rect x="-7.95" y="-1.35" width="2.7" height="2.7" rx="0.5" fill="#5274a8"/><rect x="-7.95" y="1.95" width="2.7" height="2.7" rx="0.5" fill="#5274a8"/><rect x="-4.65" y="-4.65" width="2.7" height="2.7" rx="0.5" fill="#5274a8"/><rect x="-4.65" y="-1.35" width="2.7" height="2.7" rx="0.5" fill="#5274a8"/><rect x="-4.65" y="1.95" width="2.7" height="2.7" rx="0.5" fill="#5274a8"/><rect x="-1.35" y="-7.95" width="2.7" height="2.7" rx="0.5" fill="#5274a8"/><rect x="-1.35" y="-4.65" width="2.7" height="2.7" rx="0.5" fill="#5274a8"/><rect x="-1.35" y="-1.35" width="2.7" height="2.7" rx="0.5" fill="#5274a8"/><rect x="-1.35" y="1.95" width="2.7" height="2.7" rx="0.5" fill="#5274a8"/><rect x="-1.35" y="5.25" width="2.7" height="2.7" rx="0.5" fill="#5274a8"/><rect x="1.95" y="-7.95" width="2.7" height="2.7" rx="0.5" fill="#5274a8"/><rect x="1.95" y="-4.65" width="2.7" height="2.7" rx="0.5" fill="#5274a8"/><rect x="1.95" y="-1.35" width="2.7" height="2.7" rx="0.5" fill="#5274a8"/><rect x="1.95" y="1.95" width="2.7" height="2.7" rx="0.5" fill="#5274a8"/></g>
<g transform="translate(949.7 340.7) rotate(-100.5) scale(0.911 1) rotate(120.5)" opacity="1.00"><rect x="-8.55" y="-5.25" width="3.9" height="3.9" fill="#22354f"/><rect x="-8.55" y="-1.95" width="3.9" height="3.9" fill="#22354f"/><rect x="-5.25" y="-5.25" width="3.9" height="3.9" fill="#22354f"/><rect x="-5.25" y="-1.95" width="3.9" height="3.9" fill="#22354f"/><rect x="-5.25" y="1.35" width="3.9" height="3.9" fill="#22354f"/><rect x="-1.95" y="-8.55" width="3.9" height="3.9" fill="#22354f"/><rect x="-1.95" y="-5.25" width="3.9" height="3.9" fill="#22354f"/><rect x="-1.95" y="-1.95" width="3.9" height="3.9" fill="#22354f"/><rect x="-1.95" y="1.35" width="3.9" height="3.9" fill="#22354f"/><rect x="-1.95" y="4.65" width="3.9" height="3.9" fill="#22354f"/><rect x="1.35" y="-8.55" width="3.9" height="3.9" fill="#22354f"/><rect x="1.35" y="-5.25" width="3.9" height="3.9" fill="#22354f"/><rect x="1.35" y="-1.95" width="3.9" height="3.9" fill="#22354f"/><rect x="1.35" y="1.35" width="3.9" height="3.9" fill="#22354f"/><rect x="1.35" y="4.65" width="3.9" height="3.9" fill="#22354f"/><rect x="4.65" y="-5.25" width="3.9" height="3.9" fill="#22354f"/><rect x="4.65" y="-1.95" width="3.9" height="3.9" fill="#22354f"/><rect x="-7.95" y="-4.65" width="2.7" height="2.7" rx="0.5" fill="#5274a8"/><rect x="-7.95" y="-1.35" width="2.7" height="2.7" rx="0.5" fill="#5274a8"/><rect x="-4.65" y="-4.65" width="2.7" height="2.7" rx="0.5" fill="#5274a8"/><rect x="-4.65" y="-1.35" width="2.7" height="2.7" rx="0.5" fill="#5274a8"/><rect x="-4.65" y="1.95" width="2.7" height="2.7" rx="0.5" fill="#5274a8"/><rect x="-1.35" y="-7.95" width="2.7" height="2.7" rx="0.5" fill="#5274a8"/><rect x="-1.35" y="-4.65" width="2.7" height="2.7" rx="0.5" fill="#5274a8"/><rect x="-1.35" y="-1.35" width="2.7" height="2.7" rx="0.5" fill="#5274a8"/><rect x="-1.35" y="1.95" width="2.7" height="2.7" rx="0.5" fill="#5274a8"/><rect x="-1.35" y="5.25" width="2.7" height="2.7" rx="0.5" fill="#5274a8"/><rect x="1.95" y="-7.95" width="2.7" height="2.7" rx="0.5" fill="#5274a8"/><rect x="1.95" y="-4.65" width="2.7" height="2.7" rx="0.5" fill="#5274a8"/><rect x="1.95" y="-1.35" width="2.7" height="2.7" rx="0.5" fill="#5274a8"/><rect x="1.95" y="1.95" width="2.7" height="2.7" rx="0.5" fill="#5274a8"/><rect x="1.95" y="5.25" width="2.7" height="2.7" rx="0.5" fill="#5274a8"/><rect x="5.25" y="-4.65" width="2.7" height="2.7" rx="0.5" fill="#5274a8"/><rect x="5.25" y="-1.35" width="2.7" height="2.7" rx="0.5" fill="#5274a8"/></g>
<g transform="translate(894.2 363.8) rotate(-137.4) scale(0.896 1) rotate(115.0)" opacity="1.00"><rect x="-8.55" y="-5.25" width="3.9" height="3.9" fill="#22354f"/><rect x="-8.55" y="-1.95" width="3.9" height="3.9" fill="#22354f"/><rect x="-8.55" y="1.35" width="3.9" height="3.9" fill="#22354f"/><rect x="-5.25" y="-5.25" width="3.9" height="3.9" fill="#22354f"/><rect x="-5.25" y="-1.95" width="3.9" height="3.9" fill="#22354f"/><rect x="-5.25" y="1.35" width="3.9" height="3.9" fill="#22354f"/><rect x="-1.95" y="-5.25" width="3.9" height="3.9" fill="#22354f"/><rect x="-1.95" y="-1.95" width="3.9" height="3.9" fill="#22354f"/><rect x="-1.95" y="1.35" width="3.9" height="3.9" fill="#22354f"/><rect x="-1.95" y="4.65" width="3.9" height="3.9" fill="#22354f"/><rect x="1.35" y="-5.25" width="3.9" height="3.9" fill="#22354f"/><rect x="1.35" y="-1.95" width="3.9" height="3.9" fill="#22354f"/><rect x="1.35" y="1.35" width="3.9" height="3.9" fill="#22354f"/><rect x="-7.95" y="-4.65" width="2.7" height="2.7" rx="0.5" fill="#5274a8"/><rect x="-7.95" y="-1.35" width="2.7" height="2.7" rx="0.5" fill="#5274a8"/><rect x="-7.95" y="1.95" width="2.7" height="2.7" rx="0.5" fill="#5274a8"/><rect x="-4.65" y="-4.65" width="2.7" height="2.7" rx="0.5" fill="#5274a8"/><rect x="-4.65" y="-1.35" width="2.7" height="2.7" rx="0.5" fill="#5274a8"/><rect x="-4.65" y="1.95" width="2.7" height="2.7" rx="0.5" fill="#5274a8"/><rect x="-1.35" y="-4.65" width="2.7" height="2.7" rx="0.5" fill="#5274a8"/><rect x="-1.35" y="-1.35" width="2.7" height="2.7" rx="0.5" fill="#5274a8"/><rect x="-1.35" y="1.95" width="2.7" height="2.7" rx="0.5" fill="#5274a8"/><rect x="-1.35" y="5.25" width="2.7" height="2.7" rx="0.5" fill="#5274a8"/><rect x="1.95" y="-4.65" width="2.7" height="2.7" rx="0.5" fill="#5274a8"/><rect x="1.95" y="-1.35" width="2.7" height="2.7" rx="0.5" fill="#5274a8"/><rect x="1.95" y="1.95" width="2.7" height="2.7" rx="0.5" fill="#5274a8"/></g>
<g transform="translate(806.3 377.7) rotate(-161.9) scale(0.646 1) rotate(179.3)" opacity="0.76"><rect x="-5.25" y="-5.25" width="3.9" height="3.9" fill="#22354f"/><rect x="-5.25" y="-1.95" width="3.9" height="3.9" fill="#22354f"/><rect x="-5.25" y="1.35" width="3.9" height="3.9" fill="#22354f"/><rect x="-1.95" y="-8.55" width="3.9" height="3.9" fill="#22354f"/><rect x="-1.95" y="-5.25" width="3.9" height="3.9" fill="#22354f"/><rect x="-1.95" y="-1.95" width="3.9" height="3.9" fill="#22354f"/><rect x="-1.95" y="1.35" width="3.9" height="3.9" fill="#22354f"/><rect x="-1.95" y="4.65" width="3.9" height="3.9" fill="#22354f"/><rect x="1.35" y="-5.25" width="3.9" height="3.9" fill="#22354f"/><rect x="1.35" y="-1.95" width="3.9" height="3.9" fill="#22354f"/><rect x="1.35" y="1.35" width="3.9" height="3.9" fill="#22354f"/><rect x="4.65" y="-1.95" width="3.9" height="3.9" fill="#22354f"/><rect x="-4.65" y="-4.65" width="2.7" height="2.7" rx="0.5" fill="#5274a8"/><rect x="-4.65" y="-1.35" width="2.7" height="2.7" rx="0.5" fill="#5274a8"/><rect x="-4.65" y="1.95" width="2.7" height="2.7" rx="0.5" fill="#5274a8"/><rect x="-1.35" y="-7.95" width="2.7" height="2.7" rx="0.5" fill="#5274a8"/><rect x="-1.35" y="-4.65" width="2.7" height="2.7" rx="0.5" fill="#5274a8"/><rect x="-1.35" y="-1.35" width="2.7" height="2.7" rx="0.5" fill="#5274a8"/><rect x="-1.35" y="1.95" width="2.7" height="2.7" rx="0.5" fill="#5274a8"/><rect x="-1.35" y="5.25" width="2.7" height="2.7" rx="0.5" fill="#5274a8"/><rect x="1.95" y="-4.65" width="2.7" height="2.7" rx="0.5" fill="#5274a8"/><rect x="1.95" y="-1.35" width="2.7" height="2.7" rx="0.5" fill="#5274a8"/><rect x="1.95" y="1.95" width="2.7" height="2.7" rx="0.5" fill="#5274a8"/><rect x="5.25" y="-1.35" width="2.7" height="2.7" rx="0.5" fill="#5274a8"/></g>
<g transform="translate(844.8 383.2) rotate(-158.9) scale(0.807 1) rotate(141.2)" opacity="1.00"><rect x="-8.55" y="-5.25" width="3.9" height="3.9" fill="#22354f"/><rect x="-8.55" y="-1.95" width="3.9" height="3.9" fill="#22354f"/><rect x="-5.25" y="-5.25" width="3.9" height="3.9" fill="#22354f"/><rect x="-5.25" y="-1.95" width="3.9" height="3.9" fill="#22354f"/><rect x="-5.25" y="1.35" width="3.9" height="3.9" fill="#22354f"/><rect x="-1.95" y="-8.55" width="3.9" height="3.9" fill="#22354f"/><rect x="-1.95" y="-5.25" width="3.9" height="3.9" fill="#22354f"/><rect x="-1.95" y="-1.95" width="3.9" height="3.9" fill="#22354f"/><rect x="-1.95" y="1.35" width="3.9" height="3.9" fill="#22354f"/><rect x="-1.95" y="4.65" width="3.9" height="3.9" fill="#22354f"/><rect x="1.35" y="-8.55" width="3.9" height="3.9" fill="#22354f"/><rect x="1.35" y="-5.25" width="3.9" height="3.9" fill="#22354f"/><rect x="1.35" y="-1.95" width="3.9" height="3.9" fill="#22354f"/><rect x="1.35" y="1.35" width="3.9" height="3.9" fill="#22354f"/><rect x="4.65" y="-1.95" width="3.9" height="3.9" fill="#22354f"/><rect x="4.65" y="1.35" width="3.9" height="3.9" fill="#22354f"/><rect x="-7.95" y="-4.65" width="2.7" height="2.7" rx="0.5" fill="#5274a8"/><rect x="-7.95" y="-1.35" width="2.7" height="2.7" rx="0.5" fill="#5274a8"/><rect x="-4.65" y="-4.65" width="2.7" height="2.7" rx="0.5" fill="#5274a8"/><rect x="-4.65" y="-1.35" width="2.7" height="2.7" rx="0.5" fill="#5274a8"/><rect x="-4.65" y="1.95" width="2.7" height="2.7" rx="0.5" fill="#5274a8"/><rect x="-1.35" y="-7.95" width="2.7" height="2.7" rx="0.5" fill="#5274a8"/><rect x="-1.35" y="-4.65" width="2.7" height="2.7" rx="0.5" fill="#5274a8"/><rect x="-1.35" y="-1.35" width="2.7" height="2.7" rx="0.5" fill="#5274a8"/><rect x="-1.35" y="1.95" width="2.7" height="2.7" rx="0.5" fill="#5274a8"/><rect x="-1.35" y="5.25" width="2.7" height="2.7" rx="0.5" fill="#5274a8"/><rect x="1.95" y="-7.95" width="2.7" height="2.7" rx="0.5" fill="#5274a8"/><rect x="1.95" y="-4.65" width="2.7" height="2.7" rx="0.5" fill="#5274a8"/><rect x="1.95" y="-1.35" width="2.7" height="2.7" rx="0.5" fill="#5274a8"/><rect x="1.95" y="1.95" width="2.7" height="2.7" rx="0.5" fill="#5274a8"/><rect x="5.25" y="-1.35" width="2.7" height="2.7" rx="0.5" fill="#5274a8"/><rect x="5.25" y="1.95" width="2.7" height="2.7" rx="0.5" fill="#5274a8"/></g>
<g transform="translate(773.9 382.3) rotate(-166.0) scale(0.439 1) rotate(157.5)" opacity="0.55"><rect x="-8.55" y="-5.25" width="3.9" height="3.9" fill="#22354f"/><rect x="-8.55" y="1.35" width="3.9" height="3.9" fill="#22354f"/><rect x="-5.25" y="-8.55" width="3.9" height="3.9" fill="#22354f"/><rect x="-5.25" y="-5.25" width="3.9" height="3.9" fill="#22354f"/><rect x="-5.25" y="-1.95" width="3.9" height="3.9" fill="#22354f"/><rect x="-5.25" y="1.35" width="3.9" height="3.9" fill="#22354f"/><rect x="-5.25" y="4.65" width="3.9" height="3.9" fill="#22354f"/><rect x="-1.95" y="-8.55" width="3.9" height="3.9" fill="#22354f"/><rect x="-1.95" y="-5.25" width="3.9" height="3.9" fill="#22354f"/><rect x="-1.95" y="-1.95" width="3.9" height="3.9" fill="#22354f"/><rect x="-1.95" y="1.35" width="3.9" height="3.9" fill="#22354f"/><rect x="-1.95" y="4.65" width="3.9" height="3.9" fill="#22354f"/><rect x="1.35" y="-5.25" width="3.9" height="3.9" fill="#22354f"/><rect x="1.35" y="-1.95" width="3.9" height="3.9" fill="#22354f"/><rect x="1.35" y="1.35" width="3.9" height="3.9" fill="#22354f"/><rect x="4.65" y="-5.25" width="3.9" height="3.9" fill="#22354f"/><rect x="4.65" y="-1.95" width="3.9" height="3.9" fill="#22354f"/><rect x="4.65" y="1.35" width="3.9" height="3.9" fill="#22354f"/><rect x="-7.95" y="-4.65" width="2.7" height="2.7" rx="0.5" fill="#5274a8"/><rect x="-7.95" y="1.95" width="2.7" height="2.7" rx="0.5" fill="#5274a8"/><rect x="-4.65" y="-7.95" width="2.7" height="2.7" rx="0.5" fill="#5274a8"/><rect x="-4.65" y="-4.65" width="2.7" height="2.7" rx="0.5" fill="#5274a8"/><rect x="-4.65" y="-1.35" width="2.7" height="2.7" rx="0.5" fill="#5274a8"/><rect x="-4.65" y="1.95" width="2.7" height="2.7" rx="0.5" fill="#5274a8"/><rect x="-4.65" y="5.25" width="2.7" height="2.7" rx="0.5" fill="#5274a8"/><rect x="-1.35" y="-7.95" width="2.7" height="2.7" rx="0.5" fill="#5274a8"/><rect x="-1.35" y="-4.65" width="2.7" height="2.7" rx="0.5" fill="#5274a8"/><rect x="-1.35" y="-1.35" width="2.7" height="2.7" rx="0.5" fill="#5274a8"/><rect x="-1.35" y="1.95" width="2.7" height="2.7" rx="0.5" fill="#5274a8"/><rect x="-1.35" y="5.25" width="2.7" height="2.7" rx="0.5" fill="#5274a8"/><rect x="1.95" y="-4.65" width="2.7" height="2.7" rx="0.5" fill="#5274a8"/><rect x="1.95" y="-1.35" width="2.7" height="2.7" rx="0.5" fill="#5274a8"/><rect x="1.95" y="1.95" width="2.7" height="2.7" rx="0.5" fill="#5274a8"/><rect x="5.25" y="-4.65" width="2.7" height="2.7" rx="0.5" fill="#5274a8"/><rect x="5.25" y="-1.35" width="2.7" height="2.7" rx="0.5" fill="#5274a8"/><rect x="5.25" y="1.95" width="2.7" height="2.7" rx="0.5" fill="#5274a8"/></g>
<g transform="translate(918.8 410.0) rotate(-157.1) scale(0.972 1) rotate(146.0)" opacity="1.00"><rect x="-8.55" y="-1.95" width="3.9" height="3.9" fill="#22354f"/><rect x="-8.55" y="1.35" width="3.9" height="3.9" fill="#22354f"/><rect x="-5.25" y="-8.55" width="3.9" height="3.9" fill="#22354f"/><rect x="-5.25" y="-5.25" width="3.9" height="3.9" fill="#22354f"/><rect x="-5.25" y="-1.95" width="3.9" height="3.9" fill="#22354f"/><rect x="-5.25" y="1.35" width="3.9" height="3.9" fill="#22354f"/><rect x="-5.25" y="4.65" width="3.9" height="3.9" fill="#22354f"/><rect x="-1.95" y="-8.55" width="3.9" height="3.9" fill="#22354f"/><rect x="-1.95" y="-5.25" width="3.9" height="3.9" fill="#22354f"/><rect x="-1.95" y="-1.95" width="3.9" height="3.9" fill="#22354f"/><rect x="-1.95" y="1.35" width="3.9" height="3.9" fill="#22354f"/><rect x="-1.95" y="4.65" width="3.9" height="3.9" fill="#22354f"/><rect x="1.35" y="-5.25" width="3.9" height="3.9" fill="#22354f"/><rect x="1.35" y="-1.95" width="3.9" height="3.9" fill="#22354f"/><rect x="1.35" y="1.35" width="3.9" height="3.9" fill="#22354f"/><rect x="1.35" y="4.65" width="3.9" height="3.9" fill="#22354f"/><rect x="-7.95" y="-1.35" width="2.7" height="2.7" rx="0.5" fill="#5274a8"/><rect x="-7.95" y="1.95" width="2.7" height="2.7" rx="0.5" fill="#5274a8"/><rect x="-4.65" y="-7.95" width="2.7" height="2.7" rx="0.5" fill="#5274a8"/><rect x="-4.65" y="-4.65" width="2.7" height="2.7" rx="0.5" fill="#5274a8"/><rect x="-4.65" y="-1.35" width="2.7" height="2.7" rx="0.5" fill="#5274a8"/><rect x="-4.65" y="1.95" width="2.7" height="2.7" rx="0.5" fill="#5274a8"/><rect x="-4.65" y="5.25" width="2.7" height="2.7" rx="0.5" fill="#5274a8"/><rect x="-1.35" y="-7.95" width="2.7" height="2.7" rx="0.5" fill="#5274a8"/><rect x="-1.35" y="-4.65" width="2.7" height="2.7" rx="0.5" fill="#5274a8"/><rect x="-1.35" y="-1.35" width="2.7" height="2.7" rx="0.5" fill="#5274a8"/><rect x="-1.35" y="1.95" width="2.7" height="2.7" rx="0.5" fill="#5274a8"/><rect x="-1.35" y="5.25" width="2.7" height="2.7" rx="0.5" fill="#5274a8"/><rect x="1.95" y="-4.65" width="2.7" height="2.7" rx="0.5" fill="#5274a8"/><rect x="1.95" y="-1.35" width="2.7" height="2.7" rx="0.5" fill="#5274a8"/><rect x="1.95" y="1.95" width="2.7" height="2.7" rx="0.5" fill="#5274a8"/><rect x="1.95" y="5.25" width="2.7" height="2.7" rx="0.5" fill="#5274a8"/></g>
<g transform="translate(790.9 323.7) rotate(-148.8) scale(0.368 1) rotate(155.0)" opacity="0.51"><rect x="-8.55" y="-1.95" width="3.9" height="3.9" fill="#22354f"/><rect x="-8.55" y="1.35" width="3.9" height="3.9" fill="#22354f"/><rect x="-5.25" y="-5.25" width="3.9" height="3.9" fill="#22354f"/><rect x="-5.25" y="-1.95" width="3.9" height="3.9" fill="#22354f"/><rect x="-5.25" y="1.35" width="3.9" height="3.9" fill="#22354f"/><rect x="-5.25" y="4.65" width="3.9" height="3.9" fill="#22354f"/><rect x="-1.95" y="-8.55" width="3.9" height="3.9" fill="#22354f"/><rect x="-1.95" y="-5.25" width="3.9" height="3.9" fill="#22354f"/><rect x="-1.95" y="-1.95" width="3.9" height="3.9" fill="#22354f"/><rect x="-1.95" y="1.35" width="3.9" height="3.9" fill="#22354f"/><rect x="-1.95" y="4.65" width="3.9" height="3.9" fill="#22354f"/><rect x="1.35" y="-5.25" width="3.9" height="3.9" fill="#22354f"/><rect x="1.35" y="-1.95" width="3.9" height="3.9" fill="#22354f"/><rect x="1.35" y="1.35" width="3.9" height="3.9" fill="#22354f"/><rect x="-7.95" y="-1.35" width="2.7" height="2.7" rx="0.5" fill="#5274a8"/><rect x="-7.95" y="1.95" width="2.7" height="2.7" rx="0.5" fill="#5274a8"/><rect x="-4.65" y="-4.65" width="2.7" height="2.7" rx="0.5" fill="#5274a8"/><rect x="-4.65" y="-1.35" width="2.7" height="2.7" rx="0.5" fill="#5274a8"/><rect x="-4.65" y="1.95" width="2.7" height="2.7" rx="0.5" fill="#5274a8"/><rect x="-4.65" y="5.25" width="2.7" height="2.7" rx="0.5" fill="#5274a8"/><rect x="-1.35" y="-7.95" width="2.7" height="2.7" rx="0.5" fill="#5274a8"/><rect x="-1.35" y="-4.65" width="2.7" height="2.7" rx="0.5" fill="#5274a8"/><rect x="-1.35" y="-1.35" width="2.7" height="2.7" rx="0.5" fill="#5274a8"/><rect x="-1.35" y="1.95" width="2.7" height="2.7" rx="0.5" fill="#5274a8"/><rect x="-1.35" y="5.25" width="2.7" height="2.7" rx="0.5" fill="#5274a8"/><rect x="1.95" y="-4.65" width="2.7" height="2.7" rx="0.5" fill="#5274a8"/><rect x="1.95" y="-1.35" width="2.7" height="2.7" rx="0.5" fill="#5274a8"/><rect x="1.95" y="1.95" width="2.7" height="2.7" rx="0.5" fill="#5274a8"/></g>
<g transform="translate(780.0 427.0) rotate(-179.0) scale(0.535 1) rotate(193.5)" opacity="0.63"><rect x="-8.55" y="-5.25" width="3.9" height="3.9" fill="#22354f"/><rect x="-8.55" y="-1.95" width="3.9" height="3.9" fill="#22354f"/><rect x="-5.25" y="-8.55" width="3.9" height="3.9" fill="#22354f"/><rect x="-5.25" y="-5.25" width="3.9" height="3.9" fill="#22354f"/><rect x="-5.25" y="-1.95" width="3.9" height="3.9" fill="#22354f"/><rect x="-5.25" y="1.35" width="3.9" height="3.9" fill="#22354f"/><rect x="-5.25" y="4.65" width="3.9" height="3.9" fill="#22354f"/><rect x="-1.95" y="-5.25" width="3.9" height="3.9" fill="#22354f"/><rect x="-1.95" y="-1.95" width="3.9" height="3.9" fill="#22354f"/><rect x="-1.95" y="1.35" width="3.9" height="3.9" fill="#22354f"/><rect x="-1.95" y="4.65" width="3.9" height="3.9" fill="#22354f"/><rect x="1.35" y="-8.55" width="3.9" height="3.9" fill="#22354f"/><rect x="1.35" y="-5.25" width="3.9" height="3.9" fill="#22354f"/><rect x="1.35" y="-1.95" width="3.9" height="3.9" fill="#22354f"/><rect x="1.35" y="1.35" width="3.9" height="3.9" fill="#22354f"/><rect x="1.35" y="4.65" width="3.9" height="3.9" fill="#22354f"/><rect x="4.65" y="-5.25" width="3.9" height="3.9" fill="#22354f"/><rect x="4.65" y="-1.95" width="3.9" height="3.9" fill="#22354f"/><rect x="-7.95" y="-4.65" width="2.7" height="2.7" rx="0.5" fill="#5274a8"/><rect x="-7.95" y="-1.35" width="2.7" height="2.7" rx="0.5" fill="#5274a8"/><rect x="-4.65" y="-7.95" width="2.7" height="2.7" rx="0.5" fill="#5274a8"/><rect x="-4.65" y="-4.65" width="2.7" height="2.7" rx="0.5" fill="#5274a8"/><rect x="-4.65" y="-1.35" width="2.7" height="2.7" rx="0.5" fill="#5274a8"/><rect x="-4.65" y="1.95" width="2.7" height="2.7" rx="0.5" fill="#5274a8"/><rect x="-4.65" y="5.25" width="2.7" height="2.7" rx="0.5" fill="#5274a8"/><rect x="-1.35" y="-4.65" width="2.7" height="2.7" rx="0.5" fill="#5274a8"/><rect x="-1.35" y="-1.35" width="2.7" height="2.7" rx="0.5" fill="#5274a8"/><rect x="-1.35" y="1.95" width="2.7" height="2.7" rx="0.5" fill="#5274a8"/><rect x="-1.35" y="5.25" width="2.7" height="2.7" rx="0.5" fill="#5274a8"/><rect x="1.95" y="-7.95" width="2.7" height="2.7" rx="0.5" fill="#5274a8"/><rect x="1.95" y="-4.65" width="2.7" height="2.7" rx="0.5" fill="#5274a8"/><rect x="1.95" y="-1.35" width="2.7" height="2.7" rx="0.5" fill="#5274a8"/><rect x="1.95" y="1.95" width="2.7" height="2.7" rx="0.5" fill="#5274a8"/><rect x="1.95" y="5.25" width="2.7" height="2.7" rx="0.5" fill="#5274a8"/><rect x="5.25" y="-4.65" width="2.7" height="2.7" rx="0.5" fill="#5274a8"/><rect x="5.25" y="-1.35" width="2.7" height="2.7" rx="0.5" fill="#5274a8"/></g>
<g transform="translate(983.1 246.6) rotate(-84.8) scale(0.550 1) rotate(67.1)" opacity="0.65"><rect x="-8.55" y="-1.95" width="3.9" height="3.9" fill="#22354f"/><rect x="-8.55" y="1.35" width="3.9" height="3.9" fill="#22354f"/><rect x="-5.25" y="-5.25" width="3.9" height="3.9" fill="#22354f"/><rect x="-5.25" y="-1.95" width="3.9" height="3.9" fill="#22354f"/><rect x="-5.25" y="1.35" width="3.9" height="3.9" fill="#22354f"/><rect x="-1.95" y="-8.55" width="3.9" height="3.9" fill="#22354f"/><rect x="-1.95" y="-5.25" width="3.9" height="3.9" fill="#22354f"/><rect x="-1.95" y="-1.95" width="3.9" height="3.9" fill="#22354f"/><rect x="-1.95" y="1.35" width="3.9" height="3.9" fill="#22354f"/><rect x="-1.95" y="4.65" width="3.9" height="3.9" fill="#22354f"/><rect x="1.35" y="-5.25" width="3.9" height="3.9" fill="#22354f"/><rect x="1.35" y="-1.95" width="3.9" height="3.9" fill="#22354f"/><rect x="1.35" y="1.35" width="3.9" height="3.9" fill="#22354f"/><rect x="4.65" y="-1.95" width="3.9" height="3.9" fill="#22354f"/><rect x="4.65" y="1.35" width="3.9" height="3.9" fill="#22354f"/><rect x="-7.95" y="-1.35" width="2.7" height="2.7" rx="0.5" fill="#5274a8"/><rect x="-7.95" y="1.95" width="2.7" height="2.7" rx="0.5" fill="#5274a8"/><rect x="-4.65" y="-4.65" width="2.7" height="2.7" rx="0.5" fill="#5274a8"/><rect x="-4.65" y="-1.35" width="2.7" height="2.7" rx="0.5" fill="#5274a8"/><rect x="-4.65" y="1.95" width="2.7" height="2.7" rx="0.5" fill="#5274a8"/><rect x="-1.35" y="-7.95" width="2.7" height="2.7" rx="0.5" fill="#5274a8"/><rect x="-1.35" y="-4.65" width="2.7" height="2.7" rx="0.5" fill="#5274a8"/><rect x="-1.35" y="-1.35" width="2.7" height="2.7" rx="0.5" fill="#5274a8"/><rect x="-1.35" y="1.95" width="2.7" height="2.7" rx="0.5" fill="#5274a8"/><rect x="-1.35" y="5.25" width="2.7" height="2.7" rx="0.5" fill="#5274a8"/><rect x="1.95" y="-4.65" width="2.7" height="2.7" rx="0.5" fill="#5274a8"/><rect x="1.95" y="-1.35" width="2.7" height="2.7" rx="0.5" fill="#5274a8"/><rect x="1.95" y="1.95" width="2.7" height="2.7" rx="0.5" fill="#5274a8"/><rect x="5.25" y="-1.35" width="2.7" height="2.7" rx="0.5" fill="#5274a8"/><rect x="5.25" y="1.95" width="2.7" height="2.7" rx="0.5" fill="#5274a8"/></g>
<g transform="translate(1020.1 279.0) rotate(-70.4) scale(0.687 1) rotate(89.0)" opacity="0.81"><rect x="-8.55" y="-5.25" width="3.9" height="3.9" fill="#22354f"/><rect x="-8.55" y="-1.95" width="3.9" height="3.9" fill="#22354f"/><rect x="-8.55" y="1.35" width="3.9" height="3.9" fill="#22354f"/><rect x="-5.25" y="-5.25" width="3.9" height="3.9" fill="#22354f"/><rect x="-5.25" y="-1.95" width="3.9" height="3.9" fill="#22354f"/><rect x="-5.25" y="1.35" width="3.9" height="3.9" fill="#22354f"/><rect x="-5.25" y="4.65" width="3.9" height="3.9" fill="#22354f"/><rect x="-1.95" y="-5.25" width="3.9" height="3.9" fill="#22354f"/><rect x="-1.95" y="-1.95" width="3.9" height="3.9" fill="#22354f"/><rect x="-1.95" y="1.35" width="3.9" height="3.9" fill="#22354f"/><rect x="1.35" y="-8.55" width="3.9" height="3.9" fill="#22354f"/><rect x="1.35" y="-5.25" width="3.9" height="3.9" fill="#22354f"/><rect x="1.35" y="-1.95" width="3.9" height="3.9" fill="#22354f"/><rect x="1.35" y="1.35" width="3.9" height="3.9" fill="#22354f"/><rect x="1.35" y="4.65" width="3.9" height="3.9" fill="#22354f"/><rect x="4.65" y="-5.25" width="3.9" height="3.9" fill="#22354f"/><rect x="4.65" y="-1.95" width="3.9" height="3.9" fill="#22354f"/><rect x="-7.95" y="-4.65" width="2.7" height="2.7" rx="0.5" fill="#5274a8"/><rect x="-7.95" y="-1.35" width="2.7" height="2.7" rx="0.5" fill="#5274a8"/><rect x="-7.95" y="1.95" width="2.7" height="2.7" rx="0.5" fill="#5274a8"/><rect x="-4.65" y="-4.65" width="2.7" height="2.7" rx="0.5" fill="#5274a8"/><rect x="-4.65" y="-1.35" width="2.7" height="2.7" rx="0.5" fill="#5274a8"/><rect x="-4.65" y="1.95" width="2.7" height="2.7" rx="0.5" fill="#5274a8"/><rect x="-4.65" y="5.25" width="2.7" height="2.7" rx="0.5" fill="#5274a8"/><rect x="-1.35" y="-4.65" width="2.7" height="2.7" rx="0.5" fill="#5274a8"/><rect x="-1.35" y="-1.35" width="2.7" height="2.7" rx="0.5" fill="#5274a8"/><rect x="-1.35" y="1.95" width="2.7" height="2.7" rx="0.5" fill="#5274a8"/><rect x="1.95" y="-7.95" width="2.7" height="2.7" rx="0.5" fill="#5274a8"/><rect x="1.95" y="-4.65" width="2.7" height="2.7" rx="0.5" fill="#5274a8"/><rect x="1.95" y="-1.35" width="2.7" height="2.7" rx="0.5" fill="#5274a8"/><rect x="1.95" y="1.95" width="2.7" height="2.7" rx="0.5" fill="#5274a8"/><rect x="1.95" y="5.25" width="2.7" height="2.7" rx="0.5" fill="#5274a8"/><rect x="5.25" y="-4.65" width="2.7" height="2.7" rx="0.5" fill="#5274a8"/><rect x="5.25" y="-1.35" width="2.7" height="2.7" rx="0.5" fill="#5274a8"/></g>
<g transform="translate(1080.3 296.0) rotate(-49.6) scale(0.603 1) rotate(53.8)" opacity="0.70"><rect x="-8.55" y="-5.25" width="3.9" height="3.9" fill="#22354f"/><rect x="-5.25" y="-5.25" width="3.9" height="3.9" fill="#22354f"/><rect x="-5.25" y="-1.95" width="3.9" height="3.9" fill="#22354f"/><rect x="-5.25" y="1.35" width="3.9" height="3.9" fill="#22354f"/><rect x="-1.95" y="-8.55" width="3.9" height="3.9" fill="#22354f"/><rect x="-1.95" y="-5.25" width="3.9" height="3.9" fill="#22354f"/><rect x="-1.95" y="-1.95" width="3.9" height="3.9" fill="#22354f"/><rect x="-1.95" y="1.35" width="3.9" height="3.9" fill="#22354f"/><rect x="-1.95" y="4.65" width="3.9" height="3.9" fill="#22354f"/><rect x="1.35" y="-5.25" width="3.9" height="3.9" fill="#22354f"/><rect x="1.35" y="-1.95" width="3.9" height="3.9" fill="#22354f"/><rect x="1.35" y="1.35" width="3.9" height="3.9" fill="#22354f"/><rect x="4.65" y="-5.25" width="3.9" height="3.9" fill="#22354f"/><rect x="4.65" y="-1.95" width="3.9" height="3.9" fill="#22354f"/><rect x="-7.95" y="-4.65" width="2.7" height="2.7" rx="0.5" fill="#5274a8"/><rect x="-4.65" y="-4.65" width="2.7" height="2.7" rx="0.5" fill="#5274a8"/><rect x="-4.65" y="-1.35" width="2.7" height="2.7" rx="0.5" fill="#5274a8"/><rect x="-4.65" y="1.95" width="2.7" height="2.7" rx="0.5" fill="#5274a8"/><rect x="-1.35" y="-7.95" width="2.7" height="2.7" rx="0.5" fill="#5274a8"/><rect x="-1.35" y="-4.65" width="2.7" height="2.7" rx="0.5" fill="#5274a8"/><rect x="-1.35" y="-1.35" width="2.7" height="2.7" rx="0.5" fill="#5274a8"/><rect x="-1.35" y="1.95" width="2.7" height="2.7" rx="0.5" fill="#5274a8"/><rect x="-1.35" y="5.25" width="2.7" height="2.7" rx="0.5" fill="#5274a8"/><rect x="1.95" y="-4.65" width="2.7" height="2.7" rx="0.5" fill="#5274a8"/><rect x="1.95" y="-1.35" width="2.7" height="2.7" rx="0.5" fill="#5274a8"/><rect x="1.95" y="1.95" width="2.7" height="2.7" rx="0.5" fill="#5274a8"/><rect x="5.25" y="-4.65" width="2.7" height="2.7" rx="0.5" fill="#5274a8"/><rect x="5.25" y="-1.35" width="2.7" height="2.7" rx="0.5" fill="#5274a8"/></g>
<g transform="translate(1001.6 322.2) rotate(-71.9) scale(0.857 1) rotate(70.6)" opacity="1.00"><rect x="-8.55" y="-5.25" width="3.9" height="3.9" fill="#22354f"/><rect x="-8.55" y="-1.95" width="3.9" height="3.9" fill="#22354f"/><rect x="-8.55" y="1.35" width="3.9" height="3.9" fill="#22354f"/><rect x="-5.25" y="-8.55" width="3.9" height="3.9" fill="#22354f"/><rect x="-5.25" y="-5.25" width="3.9" height="3.9" fill="#22354f"/><rect x="-5.25" y="-1.95" width="3.9" height="3.9" fill="#22354f"/><rect x="-5.25" y="1.35" width="3.9" height="3.9" fill="#22354f"/><rect x="-5.25" y="4.65" width="3.9" height="3.9" fill="#22354f"/><rect x="-1.95" y="-8.55" width="3.9" height="3.9" fill="#22354f"/><rect x="-1.95" y="-5.25" width="3.9" height="3.9" fill="#22354f"/><rect x="-1.95" y="-1.95" width="3.9" height="3.9" fill="#22354f"/><rect x="-1.95" y="1.35" width="3.9" height="3.9" fill="#22354f"/><rect x="1.35" y="-5.25" width="3.9" height="3.9" fill="#22354f"/><rect x="1.35" y="-1.95" width="3.9" height="3.9" fill="#22354f"/><rect x="1.35" y="1.35" width="3.9" height="3.9" fill="#22354f"/><rect x="4.65" y="-1.95" width="3.9" height="3.9" fill="#22354f"/><rect x="-7.95" y="-4.65" width="2.7" height="2.7" rx="0.5" fill="#5274a8"/><rect x="-7.95" y="-1.35" width="2.7" height="2.7" rx="0.5" fill="#5274a8"/><rect x="-7.95" y="1.95" width="2.7" height="2.7" rx="0.5" fill="#5274a8"/><rect x="-4.65" y="-7.95" width="2.7" height="2.7" rx="0.5" fill="#5274a8"/><rect x="-4.65" y="-4.65" width="2.7" height="2.7" rx="0.5" fill="#5274a8"/><rect x="-4.65" y="-1.35" width="2.7" height="2.7" rx="0.5" fill="#5274a8"/><rect x="-4.65" y="1.95" width="2.7" height="2.7" rx="0.5" fill="#5274a8"/><rect x="-4.65" y="5.25" width="2.7" height="2.7" rx="0.5" fill="#5274a8"/><rect x="-1.35" y="-7.95" width="2.7" height="2.7" rx="0.5" fill="#5274a8"/><rect x="-1.35" y="-4.65" width="2.7" height="2.7" rx="0.5" fill="#5274a8"/><rect x="-1.35" y="-1.35" width="2.7" height="2.7" rx="0.5" fill="#5274a8"/><rect x="-1.35" y="1.95" width="2.7" height="2.7" rx="0.5" fill="#5274a8"/><rect x="1.95" y="-4.65" width="2.7" height="2.7" rx="0.5" fill="#5274a8"/><rect x="1.95" y="-1.35" width="2.7" height="2.7" rx="0.5" fill="#5274a8"/><rect x="1.95" y="1.95" width="2.7" height="2.7" rx="0.5" fill="#5274a8"/><rect x="5.25" y="-1.35" width="2.7" height="2.7" rx="0.5" fill="#5274a8"/></g>
<g transform="translate(1058.7 336.0) rotate(-45.5) scale(0.802 1) rotate(48.6)" opacity="1.00"><rect x="-8.55" y="-5.25" width="3.9" height="3.9" fill="#22354f"/><rect x="-8.55" y="-1.95" width="3.9" height="3.9" fill="#22354f"/><rect x="-5.25" y="-8.55" width="3.9" height="3.9" fill="#22354f"/><rect x="-5.25" y="-5.25" width="3.9" height="3.9" fill="#22354f"/><rect x="-5.25" y="-1.95" width="3.9" height="3.9" fill="#22354f"/><rect x="-5.25" y="1.35" width="3.9" height="3.9" fill="#22354f"/><rect x="-5.25" y="4.65" width="3.9" height="3.9" fill="#22354f"/><rect x="-1.95" y="-8.55" width="3.9" height="3.9" fill="#22354f"/><rect x="-1.95" y="-5.25" width="3.9" height="3.9" fill="#22354f"/><rect x="-1.95" y="-1.95" width="3.9" height="3.9" fill="#22354f"/><rect x="-1.95" y="1.35" width="3.9" height="3.9" fill="#22354f"/><rect x="1.35" y="-8.55" width="3.9" height="3.9" fill="#22354f"/><rect x="1.35" y="-5.25" width="3.9" height="3.9" fill="#22354f"/><rect x="1.35" y="-1.95" width="3.9" height="3.9" fill="#22354f"/><rect x="1.35" y="1.35" width="3.9" height="3.9" fill="#22354f"/><rect x="4.65" y="-1.95" width="3.9" height="3.9" fill="#22354f"/><rect x="4.65" y="1.35" width="3.9" height="3.9" fill="#22354f"/><rect x="-7.95" y="-4.65" width="2.7" height="2.7" rx="0.5" fill="#5274a8"/><rect x="-7.95" y="-1.35" width="2.7" height="2.7" rx="0.5" fill="#5274a8"/><rect x="-4.65" y="-7.95" width="2.7" height="2.7" rx="0.5" fill="#5274a8"/><rect x="-4.65" y="-4.65" width="2.7" height="2.7" rx="0.5" fill="#5274a8"/><rect x="-4.65" y="-1.35" width="2.7" height="2.7" rx="0.5" fill="#5274a8"/><rect x="-4.65" y="1.95" width="2.7" height="2.7" rx="0.5" fill="#5274a8"/><rect x="-4.65" y="5.25" width="2.7" height="2.7" rx="0.5" fill="#5274a8"/><rect x="-1.35" y="-7.95" width="2.7" height="2.7" rx="0.5" fill="#5274a8"/><rect x="-1.35" y="-4.65" width="2.7" height="2.7" rx="0.5" fill="#5274a8"/><rect x="-1.35" y="-1.35" width="2.7" height="2.7" rx="0.5" fill="#5274a8"/><rect x="-1.35" y="1.95" width="2.7" height="2.7" rx="0.5" fill="#5274a8"/><rect x="1.95" y="-7.95" width="2.7" height="2.7" rx="0.5" fill="#5274a8"/><rect x="1.95" y="-4.65" width="2.7" height="2.7" rx="0.5" fill="#5274a8"/><rect x="1.95" y="-1.35" width="2.7" height="2.7" rx="0.5" fill="#5274a8"/><rect x="1.95" y="1.95" width="2.7" height="2.7" rx="0.5" fill="#5274a8"/><rect x="5.25" y="-1.35" width="2.7" height="2.7" rx="0.5" fill="#5274a8"/><rect x="5.25" y="1.95" width="2.7" height="2.7" rx="0.5" fill="#5274a8"/></g>
<g transform="translate(1120.3 331.4) rotate(-32.7) scale(0.559 1) rotate(51.5)" opacity="0.66"><rect x="-8.55" y="-5.25" width="3.9" height="3.9" fill="#22354f"/><rect x="-8.55" y="-1.95" width="3.9" height="3.9" fill="#22354f"/><rect x="-5.25" y="-8.55" width="3.9" height="3.9" fill="#22354f"/><rect x="-5.25" y="-5.25" width="3.9" height="3.9" fill="#22354f"/><rect x="-5.25" y="-1.95" width="3.9" height="3.9" fill="#22354f"/><rect x="-5.25" y="1.35" width="3.9" height="3.9" fill="#22354f"/><rect x="-5.25" y="4.65" width="3.9" height="3.9" fill="#22354f"/><rect x="-1.95" y="-8.55" width="3.9" height="3.9" fill="#22354f"/><rect x="-1.95" y="-5.25" width="3.9" height="3.9" fill="#22354f"/><rect x="-1.95" y="-1.95" width="3.9" height="3.9" fill="#22354f"/><rect x="-1.95" y="1.35" width="3.9" height="3.9" fill="#22354f"/><rect x="-1.95" y="4.65" width="3.9" height="3.9" fill="#22354f"/><rect x="1.35" y="-5.25" width="3.9" height="3.9" fill="#22354f"/><rect x="1.35" y="-1.95" width="3.9" height="3.9" fill="#22354f"/><rect x="1.35" y="1.35" width="3.9" height="3.9" fill="#22354f"/><rect x="1.35" y="4.65" width="3.9" height="3.9" fill="#22354f"/><rect x="4.65" y="-1.95" width="3.9" height="3.9" fill="#22354f"/><rect x="4.65" y="1.35" width="3.9" height="3.9" fill="#22354f"/><rect x="-7.95" y="-4.65" width="2.7" height="2.7" rx="0.5" fill="#5274a8"/><rect x="-7.95" y="-1.35" width="2.7" height="2.7" rx="0.5" fill="#5274a8"/><rect x="-4.65" y="-7.95" width="2.7" height="2.7" rx="0.5" fill="#5274a8"/><rect x="-4.65" y="-4.65" width="2.7" height="2.7" rx="0.5" fill="#5274a8"/><rect x="-4.65" y="-1.35" width="2.7" height="2.7" rx="0.5" fill="#5274a8"/><rect x="-4.65" y="1.95" width="2.7" height="2.7" rx="0.5" fill="#5274a8"/><rect x="-4.65" y="5.25" width="2.7" height="2.7" rx="0.5" fill="#5274a8"/><rect x="-1.35" y="-7.95" width="2.7" height="2.7" rx="0.5" fill="#5274a8"/><rect x="-1.35" y="-4.65" width="2.7" height="2.7" rx="0.5" fill="#5274a8"/><rect x="-1.35" y="-1.35" width="2.7" height="2.7" rx="0.5" fill="#5274a8"/><rect x="-1.35" y="1.95" width="2.7" height="2.7" rx="0.5" fill="#5274a8"/><rect x="-1.35" y="5.25" width="2.7" height="2.7" rx="0.5" fill="#5274a8"/><rect x="1.95" y="-4.65" width="2.7" height="2.7" rx="0.5" fill="#5274a8"/><rect x="1.95" y="-1.35" width="2.7" height="2.7" rx="0.5" fill="#5274a8"/><rect x="1.95" y="1.95" width="2.7" height="2.7" rx="0.5" fill="#5274a8"/><rect x="1.95" y="5.25" width="2.7" height="2.7" rx="0.5" fill="#5274a8"/><rect x="5.25" y="-1.35" width="2.7" height="2.7" rx="0.5" fill="#5274a8"/><rect x="5.25" y="1.95" width="2.7" height="2.7" rx="0.5" fill="#5274a8"/></g>
<g transform="translate(1023.2 373.0) rotate(-45.1) scale(0.931 1) rotate(59.3)" opacity="1.00"><rect x="-8.55" y="-5.25" width="3.9" height="3.9" fill="#22354f"/><rect x="-8.55" y="-1.95" width="3.9" height="3.9" fill="#22354f"/><rect x="-8.55" y="1.35" width="3.9" height="3.9" fill="#22354f"/><rect x="-5.25" y="-8.55" width="3.9" height="3.9" fill="#22354f"/><rect x="-5.25" y="-5.25" width="3.9" height="3.9" fill="#22354f"/><rect x="-5.25" y="-1.95" width="3.9" height="3.9" fill="#22354f"/><rect x="-5.25" y="1.35" width="3.9" height="3.9" fill="#22354f"/><rect x="-5.25" y="4.65" width="3.9" height="3.9" fill="#22354f"/><rect x="-1.95" y="-5.25" width="3.9" height="3.9" fill="#22354f"/><rect x="-1.95" y="-1.95" width="3.9" height="3.9" fill="#22354f"/><rect x="-1.95" y="1.35" width="3.9" height="3.9" fill="#22354f"/><rect x="1.35" y="-5.25" width="3.9" height="3.9" fill="#22354f"/><rect x="1.35" y="-1.95" width="3.9" height="3.9" fill="#22354f"/><rect x="1.35" y="1.35" width="3.9" height="3.9" fill="#22354f"/><rect x="4.65" y="1.35" width="3.9" height="3.9" fill="#22354f"/><rect x="-7.95" y="-4.65" width="2.7" height="2.7" rx="0.5" fill="#5274a8"/><rect x="-7.95" y="-1.35" width="2.7" height="2.7" rx="0.5" fill="#5274a8"/><rect x="-7.95" y="1.95" width="2.7" height="2.7" rx="0.5" fill="#5274a8"/><rect x="-4.65" y="-7.95" width="2.7" height="2.7" rx="0.5" fill="#5274a8"/><rect x="-4.65" y="-4.65" width="2.7" height="2.7" rx="0.5" fill="#5274a8"/><rect x="-4.65" y="-1.35" width="2.7" height="2.7" rx="0.5" fill="#5274a8"/><rect x="-4.65" y="1.95" width="2.7" height="2.7" rx="0.5" fill="#5274a8"/><rect x="-4.65" y="5.25" width="2.7" height="2.7" rx="0.5" fill="#5274a8"/><rect x="-1.35" y="-4.65" width="2.7" height="2.7" rx="0.5" fill="#5274a8"/><rect x="-1.35" y="-1.35" width="2.7" height="2.7" rx="0.5" fill="#5274a8"/><rect x="-1.35" y="1.95" width="2.7" height="2.7" rx="0.5" fill="#5274a8"/><rect x="1.95" y="-4.65" width="2.7" height="2.7" rx="0.5" fill="#5274a8"/><rect x="1.95" y="-1.35" width="2.7" height="2.7" rx="0.5" fill="#5274a8"/><rect x="1.95" y="1.95" width="2.7" height="2.7" rx="0.5" fill="#5274a8"/><rect x="5.25" y="1.95" width="2.7" height="2.7" rx="0.5" fill="#5274a8"/></g>
<g transform="translate(1101.8 373.0) rotate(-22.9) scale(0.745 1) rotate(39.5)" opacity="0.90"><rect x="-8.55" y="-5.25" width="3.9" height="3.9" fill="#22354f"/><rect x="-8.55" y="1.35" width="3.9" height="3.9" fill="#22354f"/><rect x="-5.25" y="-8.55" width="3.9" height="3.9" fill="#22354f"/><rect x="-5.25" y="-5.25" width="3.9" height="3.9" fill="#22354f"/><rect x="-5.25" y="-1.95" width="3.9" height="3.9" fill="#22354f"/><rect x="-5.25" y="1.35" width="3.9" height="3.9" fill="#22354f"/><rect x="-1.95" y="-8.55" width="3.9" height="3.9" fill="#22354f"/><rect x="-1.95" y="-5.25" width="3.9" height="3.9" fill="#22354f"/><rect x="-1.95" y="-1.95" width="3.9" height="3.9" fill="#22354f"/><rect x="-1.95" y="1.35" width="3.9" height="3.9" fill="#22354f"/><rect x="-1.95" y="4.65" width="3.9" height="3.9" fill="#22354f"/><rect x="1.35" y="-5.25" width="3.9" height="3.9" fill="#22354f"/><rect x="1.35" y="-1.95" width="3.9" height="3.9" fill="#22354f"/><rect x="1.35" y="1.35" width="3.9" height="3.9" fill="#22354f"/><rect x="1.35" y="4.65" width="3.9" height="3.9" fill="#22354f"/><rect x="4.65" y="-1.95" width="3.9" height="3.9" fill="#22354f"/><rect x="4.65" y="1.35" width="3.9" height="3.9" fill="#22354f"/><rect x="-7.95" y="-4.65" width="2.7" height="2.7" rx="0.5" fill="#5274a8"/><rect x="-7.95" y="1.95" width="2.7" height="2.7" rx="0.5" fill="#5274a8"/><rect x="-4.65" y="-7.95" width="2.7" height="2.7" rx="0.5" fill="#5274a8"/><rect x="-4.65" y="-4.65" width="2.7" height="2.7" rx="0.5" fill="#5274a8"/><rect x="-4.65" y="-1.35" width="2.7" height="2.7" rx="0.5" fill="#5274a8"/><rect x="-4.65" y="1.95" width="2.7" height="2.7" rx="0.5" fill="#5274a8"/><rect x="-1.35" y="-7.95" width="2.7" height="2.7" rx="0.5" fill="#5274a8"/><rect x="-1.35" y="-4.65" width="2.7" height="2.7" rx="0.5" fill="#5274a8"/><rect x="-1.35" y="-1.35" width="2.7" height="2.7" rx="0.5" fill="#5274a8"/><rect x="-1.35" y="1.95" width="2.7" height="2.7" rx="0.5" fill="#5274a8"/><rect x="-1.35" y="5.25" width="2.7" height="2.7" rx="0.5" fill="#5274a8"/><rect x="1.95" y="-4.65" width="2.7" height="2.7" rx="0.5" fill="#5274a8"/><rect x="1.95" y="-1.35" width="2.7" height="2.7" rx="0.5" fill="#5274a8"/><rect x="1.95" y="1.95" width="2.7" height="2.7" rx="0.5" fill="#5274a8"/><rect x="1.95" y="5.25" width="2.7" height="2.7" rx="0.5" fill="#5274a8"/><rect x="5.25" y="-1.35" width="2.7" height="2.7" rx="0.5" fill="#5274a8"/><rect x="5.25" y="1.95" width="2.7" height="2.7" rx="0.5" fill="#5274a8"/></g>
<g transform="translate(973.9 390.0) rotate(-79.3) scale(0.983 1) rotate(85.5)" opacity="1.00"><rect x="-8.55" y="-1.95" width="3.9" height="3.9" fill="#22354f"/><rect x="-8.55" y="1.35" width="3.9" height="3.9" fill="#22354f"/><rect x="-5.25" y="-5.25" width="3.9" height="3.9" fill="#22354f"/><rect x="-5.25" y="-1.95" width="3.9" height="3.9" fill="#22354f"/><rect x="-5.25" y="1.35" width="3.9" height="3.9" fill="#22354f"/><rect x="-1.95" y="-8.55" width="3.9" height="3.9" fill="#22354f"/><rect x="-1.95" y="-5.25" width="3.9" height="3.9" fill="#22354f"/><rect x="-1.95" y="-1.95" width="3.9" height="3.9" fill="#22354f"/><rect x="-1.95" y="1.35" width="3.9" height="3.9" fill="#22354f"/><rect x="-1.95" y="4.65" width="3.9" height="3.9" fill="#22354f"/><rect x="1.35" y="-5.25" width="3.9" height="3.9" fill="#22354f"/><rect x="1.35" y="-1.95" width="3.9" height="3.9" fill="#22354f"/><rect x="1.35" y="1.35" width="3.9" height="3.9" fill="#22354f"/><rect x="1.35" y="4.65" width="3.9" height="3.9" fill="#22354f"/><rect x="-7.95" y="-1.35" width="2.7" height="2.7" rx="0.5" fill="#5274a8"/><rect x="-7.95" y="1.95" width="2.7" height="2.7" rx="0.5" fill="#5274a8"/><rect x="-4.65" y="-4.65" width="2.7" height="2.7" rx="0.5" fill="#5274a8"/><rect x="-4.65" y="-1.35" width="2.7" height="2.7" rx="0.5" fill="#5274a8"/><rect x="-4.65" y="1.95" width="2.7" height="2.7" rx="0.5" fill="#5274a8"/><rect x="-1.35" y="-7.95" width="2.7" height="2.7" rx="0.5" fill="#5274a8"/><rect x="-1.35" y="-4.65" width="2.7" height="2.7" rx="0.5" fill="#5274a8"/><rect x="-1.35" y="-1.35" width="2.7" height="2.7" rx="0.5" fill="#5274a8"/><rect x="-1.35" y="1.95" width="2.7" height="2.7" rx="0.5" fill="#5274a8"/><rect x="-1.35" y="5.25" width="2.7" height="2.7" rx="0.5" fill="#5274a8"/><rect x="1.95" y="-4.65" width="2.7" height="2.7" rx="0.5" fill="#5274a8"/><rect x="1.95" y="-1.35" width="2.7" height="2.7" rx="0.5" fill="#5274a8"/><rect x="1.95" y="1.95" width="2.7" height="2.7" rx="0.5" fill="#5274a8"/><rect x="1.95" y="5.25" width="2.7" height="2.7" rx="0.5" fill="#5274a8"/></g>
<g transform="translate(1138.8 394.6) rotate(-11.6) scale(0.602 1) rotate(32.2)" opacity="0.70"><rect x="-8.55" y="-5.25" width="3.9" height="3.9" fill="#22354f"/><rect x="-8.55" y="1.35" width="3.9" height="3.9" fill="#22354f"/><rect x="-5.25" y="-8.55" width="3.9" height="3.9" fill="#22354f"/><rect x="-5.25" y="-5.25" width="3.9" height="3.9" fill="#22354f"/><rect x="-5.25" y="-1.95" width="3.9" height="3.9" fill="#22354f"/><rect x="-5.25" y="1.35" width="3.9" height="3.9" fill="#22354f"/><rect x="-5.25" y="4.65" width="3.9" height="3.9" fill="#22354f"/><rect x="-1.95" y="-5.25" width="3.9" height="3.9" fill="#22354f"/><rect x="-1.95" y="-1.95" width="3.9" height="3.9" fill="#22354f"/><rect x="-1.95" y="1.35" width="3.9" height="3.9" fill="#22354f"/><rect x="-1.95" y="4.65" width="3.9" height="3.9" fill="#22354f"/><rect x="1.35" y="-5.25" width="3.9" height="3.9" fill="#22354f"/><rect x="1.35" y="-1.95" width="3.9" height="3.9" fill="#22354f"/><rect x="1.35" y="1.35" width="3.9" height="3.9" fill="#22354f"/><rect x="1.35" y="4.65" width="3.9" height="3.9" fill="#22354f"/><rect x="-7.95" y="-4.65" width="2.7" height="2.7" rx="0.5" fill="#5274a8"/><rect x="-7.95" y="1.95" width="2.7" height="2.7" rx="0.5" fill="#5274a8"/><rect x="-4.65" y="-7.95" width="2.7" height="2.7" rx="0.5" fill="#5274a8"/><rect x="-4.65" y="-4.65" width="2.7" height="2.7" rx="0.5" fill="#5274a8"/><rect x="-4.65" y="-1.35" width="2.7" height="2.7" rx="0.5" fill="#5274a8"/><rect x="-4.65" y="1.95" width="2.7" height="2.7" rx="0.5" fill="#5274a8"/><rect x="-4.65" y="5.25" width="2.7" height="2.7" rx="0.5" fill="#5274a8"/><rect x="-1.35" y="-4.65" width="2.7" height="2.7" rx="0.5" fill="#5274a8"/><rect x="-1.35" y="-1.35" width="2.7" height="2.7" rx="0.5" fill="#5274a8"/><rect x="-1.35" y="1.95" width="2.7" height="2.7" rx="0.5" fill="#5274a8"/><rect x="-1.35" y="5.25" width="2.7" height="2.7" rx="0.5" fill="#5274a8"/><rect x="1.95" y="-4.65" width="2.7" height="2.7" rx="0.5" fill="#5274a8"/><rect x="1.95" y="-1.35" width="2.7" height="2.7" rx="0.5" fill="#5274a8"/><rect x="1.95" y="1.95" width="2.7" height="2.7" rx="0.5" fill="#5274a8"/><rect x="1.95" y="5.25" width="2.7" height="2.7" rx="0.5" fill="#5274a8"/></g>
<g transform="translate(1071.0 417.8) rotate(-6.7) scale(0.878 1) rotate(13.4)" opacity="1.00"><rect x="-8.55" y="-5.25" width="3.9" height="3.9" fill="#22354f"/><rect x="-8.55" y="-1.95" width="3.9" height="3.9" fill="#22354f"/><rect x="-5.25" y="-8.55" width="3.9" height="3.9" fill="#22354f"/><rect x="-5.25" y="-5.25" width="3.9" height="3.9" fill="#22354f"/><rect x="-5.25" y="-1.95" width="3.9" height="3.9" fill="#22354f"/><rect x="-5.25" y="1.35" width="3.9" height="3.9" fill="#22354f"/><rect x="-5.25" y="4.65" width="3.9" height="3.9" fill="#22354f"/><rect x="-1.95" y="-8.55" width="3.9" height="3.9" fill="#22354f"/><rect x="-1.95" y="-5.25" width="3.9" height="3.9" fill="#22354f"/><rect x="-1.95" y="-1.95" width="3.9" height="3.9" fill="#22354f"/><rect x="-1.95" y="1.35" width="3.9" height="3.9" fill="#22354f"/><rect x="1.35" y="-5.25" width="3.9" height="3.9" fill="#22354f"/><rect x="1.35" y="-1.95" width="3.9" height="3.9" fill="#22354f"/><rect x="1.35" y="1.35" width="3.9" height="3.9" fill="#22354f"/><rect x="1.35" y="4.65" width="3.9" height="3.9" fill="#22354f"/><rect x="4.65" y="1.35" width="3.9" height="3.9" fill="#22354f"/><rect x="-7.95" y="-4.65" width="2.7" height="2.7" rx="0.5" fill="#5274a8"/><rect x="-7.95" y="-1.35" width="2.7" height="2.7" rx="0.5" fill="#5274a8"/><rect x="-4.65" y="-7.95" width="2.7" height="2.7" rx="0.5" fill="#5274a8"/><rect x="-4.65" y="-4.65" width="2.7" height="2.7" rx="0.5" fill="#5274a8"/><rect x="-4.65" y="-1.35" width="2.7" height="2.7" rx="0.5" fill="#5274a8"/><rect x="-4.65" y="1.95" width="2.7" height="2.7" rx="0.5" fill="#5274a8"/><rect x="-4.65" y="5.25" width="2.7" height="2.7" rx="0.5" fill="#5274a8"/><rect x="-1.35" y="-7.95" width="2.7" height="2.7" rx="0.5" fill="#5274a8"/><rect x="-1.35" y="-4.65" width="2.7" height="2.7" rx="0.5" fill="#5274a8"/><rect x="-1.35" y="-1.35" width="2.7" height="2.7" rx="0.5" fill="#5274a8"/><rect x="-1.35" y="1.95" width="2.7" height="2.7" rx="0.5" fill="#5274a8"/><rect x="1.95" y="-4.65" width="2.7" height="2.7" rx="0.5" fill="#5274a8"/><rect x="1.95" y="-1.35" width="2.7" height="2.7" rx="0.5" fill="#5274a8"/><rect x="1.95" y="1.95" width="2.7" height="2.7" rx="0.5" fill="#5274a8"/><rect x="1.95" y="5.25" width="2.7" height="2.7" rx="0.5" fill="#5274a8"/><rect x="5.25" y="1.95" width="2.7" height="2.7" rx="0.5" fill="#5274a8"/></g>
<g transform="translate(1155.8 357.6) rotate(-20.9) scale(0.393 1) rotate(7.9)" opacity="0.52"><rect x="-8.55" y="-5.25" width="3.9" height="3.9" fill="#22354f"/><rect x="-8.55" y="1.35" width="3.9" height="3.9" fill="#22354f"/><rect x="-5.25" y="-5.25" width="3.9" height="3.9" fill="#22354f"/><rect x="-5.25" y="-1.95" width="3.9" height="3.9" fill="#22354f"/><rect x="-5.25" y="1.35" width="3.9" height="3.9" fill="#22354f"/><rect x="-5.25" y="4.65" width="3.9" height="3.9" fill="#22354f"/><rect x="-1.95" y="-8.55" width="3.9" height="3.9" fill="#22354f"/><rect x="-1.95" y="-5.25" width="3.9" height="3.9" fill="#22354f"/><rect x="-1.95" y="-1.95" width="3.9" height="3.9" fill="#22354f"/><rect x="-1.95" y="1.35" width="3.9" height="3.9" fill="#22354f"/><rect x="-1.95" y="4.65" width="3.9" height="3.9" fill="#22354f"/><rect x="1.35" y="-8.55" width="3.9" height="3.9" fill="#22354f"/><rect x="1.35" y="-5.25" width="3.9" height="3.9" fill="#22354f"/><rect x="1.35" y="-1.95" width="3.9" height="3.9" fill="#22354f"/><rect x="1.35" y="1.35" width="3.9" height="3.9" fill="#22354f"/><rect x="1.35" y="4.65" width="3.9" height="3.9" fill="#22354f"/><rect x="4.65" y="1.35" width="3.9" height="3.9" fill="#22354f"/><rect x="-7.95" y="-4.65" width="2.7" height="2.7" rx="0.5" fill="#5274a8"/><rect x="-7.95" y="1.95" width="2.7" height="2.7" rx="0.5" fill="#5274a8"/><rect x="-4.65" y="-4.65" width="2.7" height="2.7" rx="0.5" fill="#5274a8"/><rect x="-4.65" y="-1.35" width="2.7" height="2.7" rx="0.5" fill="#5274a8"/><rect x="-4.65" y="1.95" width="2.7" height="2.7" rx="0.5" fill="#5274a8"/><rect x="-4.65" y="5.25" width="2.7" height="2.7" rx="0.5" fill="#5274a8"/><rect x="-1.35" y="-7.95" width="2.7" height="2.7" rx="0.5" fill="#5274a8"/><rect x="-1.35" y="-4.65" width="2.7" height="2.7" rx="0.5" fill="#5274a8"/><rect x="-1.35" y="-1.35" width="2.7" height="2.7" rx="0.5" fill="#5274a8"/><rect x="-1.35" y="1.95" width="2.7" height="2.7" rx="0.5" fill="#5274a8"/><rect x="-1.35" y="5.25" width="2.7" height="2.7" rx="0.5" fill="#5274a8"/><rect x="1.95" y="-7.95" width="2.7" height="2.7" rx="0.5" fill="#5274a8"/><rect x="1.95" y="-4.65" width="2.7" height="2.7" rx="0.5" fill="#5274a8"/><rect x="1.95" y="-1.35" width="2.7" height="2.7" rx="0.5" fill="#5274a8"/><rect x="1.95" y="1.95" width="2.7" height="2.7" rx="0.5" fill="#5274a8"/><rect x="1.95" y="5.25" width="2.7" height="2.7" rx="0.5" fill="#5274a8"/><rect x="5.25" y="1.95" width="2.7" height="2.7" rx="0.5" fill="#5274a8"/></g>
<g transform="translate(1014.0 424.0) rotate(-7.3) scale(0.976 1) rotate(-5.2)" opacity="1.00"><rect x="-5.25" y="-5.25" width="3.9" height="3.9" fill="#22354f"/><rect x="-5.25" y="-1.95" width="3.9" height="3.9" fill="#22354f"/><rect x="-5.25" y="1.35" width="3.9" height="3.9" fill="#22354f"/><rect x="-1.95" y="-8.55" width="3.9" height="3.9" fill="#22354f"/><rect x="-1.95" y="-5.25" width="3.9" height="3.9" fill="#22354f"/><rect x="-1.95" y="-1.95" width="3.9" height="3.9" fill="#22354f"/><rect x="-1.95" y="1.35" width="3.9" height="3.9" fill="#22354f"/><rect x="-1.95" y="4.65" width="3.9" height="3.9" fill="#22354f"/><rect x="1.35" y="-5.25" width="3.9" height="3.9" fill="#22354f"/><rect x="1.35" y="-1.95" width="3.9" height="3.9" fill="#22354f"/><rect x="1.35" y="1.35" width="3.9" height="3.9" fill="#22354f"/><rect x="1.35" y="4.65" width="3.9" height="3.9" fill="#22354f"/><rect x="4.65" y="-1.95" width="3.9" height="3.9" fill="#22354f"/><rect x="-4.65" y="-4.65" width="2.7" height="2.7" rx="0.5" fill="#5274a8"/><rect x="-4.65" y="-1.35" width="2.7" height="2.7" rx="0.5" fill="#5274a8"/><rect x="-4.65" y="1.95" width="2.7" height="2.7" rx="0.5" fill="#5274a8"/><rect x="-1.35" y="-7.95" width="2.7" height="2.7" rx="0.5" fill="#5274a8"/><rect x="-1.35" y="-4.65" width="2.7" height="2.7" rx="0.5" fill="#5274a8"/><rect x="-1.35" y="-1.35" width="2.7" height="2.7" rx="0.5" fill="#5274a8"/><rect x="-1.35" y="1.95" width="2.7" height="2.7" rx="0.5" fill="#5274a8"/><rect x="-1.35" y="5.25" width="2.7" height="2.7" rx="0.5" fill="#5274a8"/><rect x="1.95" y="-4.65" width="2.7" height="2.7" rx="0.5" fill="#5274a8"/><rect x="1.95" y="-1.35" width="2.7" height="2.7" rx="0.5" fill="#5274a8"/><rect x="1.95" y="1.95" width="2.7" height="2.7" rx="0.5" fill="#5274a8"/><rect x="1.95" y="5.25" width="2.7" height="2.7" rx="0.5" fill="#5274a8"/><rect x="5.25" y="-1.35" width="2.7" height="2.7" rx="0.5" fill="#5274a8"/></g>
<g transform="translate(815.5 428.0) rotate(-179.2) scale(0.730 1) rotate(179.5)" opacity="0.87"><rect x="-8.55" y="-1.95" width="3.9" height="3.9" fill="#22354f"/><rect x="-8.55" y="1.35" width="3.9" height="3.9" fill="#22354f"/><rect x="-5.25" y="-5.25" width="3.9" height="3.9" fill="#22354f"/><rect x="-5.25" y="-1.95" width="3.9" height="3.9" fill="#22354f"/><rect x="-5.25" y="1.35" width="3.9" height="3.9" fill="#22354f"/><rect x="-1.95" y="-8.55" width="3.9" height="3.9" fill="#22354f"/><rect x="-1.95" y="-5.25" width="3.9" height="3.9" fill="#22354f"/><rect x="-1.95" y="-1.95" width="3.9" height="3.9" fill="#22354f"/><rect x="-1.95" y="1.35" width="3.9" height="3.9" fill="#22354f"/><rect x="1.35" y="-8.55" width="3.9" height="3.9" fill="#22354f"/><rect x="1.35" y="-5.25" width="3.9" height="3.9" fill="#22354f"/><rect x="1.35" y="-1.95" width="3.9" height="3.9" fill="#22354f"/><rect x="1.35" y="1.35" width="3.9" height="3.9" fill="#22354f"/><rect x="4.65" y="-1.95" width="3.9" height="3.9" fill="#22354f"/><rect x="-7.95" y="-1.35" width="2.7" height="2.7" rx="0.5" fill="#5274a8"/><rect x="-7.95" y="1.95" width="2.7" height="2.7" rx="0.5" fill="#5274a8"/><rect x="-4.65" y="-4.65" width="2.7" height="2.7" rx="0.5" fill="#5274a8"/><rect x="-4.65" y="-1.35" width="2.7" height="2.7" rx="0.5" fill="#5274a8"/><rect x="-4.65" y="1.95" width="2.7" height="2.7" rx="0.5" fill="#5274a8"/><rect x="-1.35" y="-7.95" width="2.7" height="2.7" rx="0.5" fill="#5274a8"/><rect x="-1.35" y="-4.65" width="2.7" height="2.7" rx="0.5" fill="#5274a8"/><rect x="-1.35" y="-1.35" width="2.7" height="2.7" rx="0.5" fill="#5274a8"/><rect x="-1.35" y="1.95" width="2.7" height="2.7" rx="0.5" fill="#5274a8"/><rect x="1.95" y="-7.95" width="2.7" height="2.7" rx="0.5" fill="#5274a8"/><rect x="1.95" y="-4.65" width="2.7" height="2.7" rx="0.5" fill="#5274a8"/><rect x="1.95" y="-1.35" width="2.7" height="2.7" rx="0.5" fill="#5274a8"/><rect x="1.95" y="1.95" width="2.7" height="2.7" rx="0.5" fill="#5274a8"/><rect x="5.25" y="-1.35" width="2.7" height="2.7" rx="0.5" fill="#5274a8"/></g>
<g transform="translate(863.3 437.3) rotate(176.0) scale(0.884 1) rotate(-188.2)" opacity="1.00"><rect x="-8.55" y="-5.25" width="3.9" height="3.9" fill="#22354f"/><rect x="-8.55" y="-1.95" width="3.9" height="3.9" fill="#22354f"/><rect x="-5.25" y="-8.55" width="3.9" height="3.9" fill="#22354f"/><rect x="-5.25" y="-5.25" width="3.9" height="3.9" fill="#22354f"/><rect x="-5.25" y="-1.95" width="3.9" height="3.9" fill="#22354f"/><rect x="-5.25" y="1.35" width="3.9" height="3.9" fill="#22354f"/><rect x="-5.25" y="4.65" width="3.9" height="3.9" fill="#22354f"/><rect x="-1.95" y="-8.55" width="3.9" height="3.9" fill="#22354f"/><rect x="-1.95" y="-5.25" width="3.9" height="3.9" fill="#22354f"/><rect x="-1.95" y="-1.95" width="3.9" height="3.9" fill="#22354f"/><rect x="-1.95" y="1.35" width="3.9" height="3.9" fill="#22354f"/><rect x="-1.95" y="4.65" width="3.9" height="3.9" fill="#22354f"/><rect x="1.35" y="-5.25" width="3.9" height="3.9" fill="#22354f"/><rect x="1.35" y="-1.95" width="3.9" height="3.9" fill="#22354f"/><rect x="1.35" y="1.35" width="3.9" height="3.9" fill="#22354f"/><rect x="4.65" y="1.35" width="3.9" height="3.9" fill="#22354f"/><rect x="-7.95" y="-4.65" width="2.7" height="2.7" rx="0.5" fill="#5274a8"/><rect x="-7.95" y="-1.35" width="2.7" height="2.7" rx="0.5" fill="#5274a8"/><rect x="-4.65" y="-7.95" width="2.7" height="2.7" rx="0.5" fill="#5274a8"/><rect x="-4.65" y="-4.65" width="2.7" height="2.7" rx="0.5" fill="#5274a8"/><rect x="-4.65" y="-1.35" width="2.7" height="2.7" rx="0.5" fill="#5274a8"/><rect x="-4.65" y="1.95" width="2.7" height="2.7" rx="0.5" fill="#5274a8"/><rect x="-4.65" y="5.25" width="2.7" height="2.7" rx="0.5" fill="#5274a8"/><rect x="-1.35" y="-7.95" width="2.7" height="2.7" rx="0.5" fill="#5274a8"/><rect x="-1.35" y="-4.65" width="2.7" height="2.7" rx="0.5" fill="#5274a8"/><rect x="-1.35" y="-1.35" width="2.7" height="2.7" rx="0.5" fill="#5274a8"/><rect x="-1.35" y="1.95" width="2.7" height="2.7" rx="0.5" fill="#5274a8"/><rect x="-1.35" y="5.25" width="2.7" height="2.7" rx="0.5" fill="#5274a8"/><rect x="1.95" y="-4.65" width="2.7" height="2.7" rx="0.5" fill="#5274a8"/><rect x="1.95" y="-1.35" width="2.7" height="2.7" rx="0.5" fill="#5274a8"/><rect x="1.95" y="1.95" width="2.7" height="2.7" rx="0.5" fill="#5274a8"/><rect x="5.25" y="1.95" width="2.7" height="2.7" rx="0.5" fill="#5274a8"/></g>
<g transform="translate(960.5 451.2) rotate(105.4) scale(0.995 1) rotate(-82.3)" opacity="1.00"><rect x="-8.55" y="1.35" width="3.9" height="3.9" fill="#22354f"/><rect x="-5.25" y="-8.55" width="3.9" height="3.9" fill="#22354f"/><rect x="-5.25" y="-5.25" width="3.9" height="3.9" fill="#22354f"/><rect x="-5.25" y="-1.95" width="3.9" height="3.9" fill="#22354f"/><rect x="-5.25" y="1.35" width="3.9" height="3.9" fill="#22354f"/><rect x="-5.25" y="4.65" width="3.9" height="3.9" fill="#22354f"/><rect x="-1.95" y="-8.55" width="3.9" height="3.9" fill="#22354f"/><rect x="-1.95" y="-5.25" width="3.9" height="3.9" fill="#22354f"/><rect x="-1.95" y="-1.95" width="3.9" height="3.9" fill="#22354f"/><rect x="-1.95" y="1.35" width="3.9" height="3.9" fill="#22354f"/><rect x="1.35" y="-5.25" width="3.9" height="3.9" fill="#22354f"/><rect x="1.35" y="-1.95" width="3.9" height="3.9" fill="#22354f"/><rect x="1.35" y="1.35" width="3.9" height="3.9" fill="#22354f"/><rect x="4.65" y="-1.95" width="3.9" height="3.9" fill="#22354f"/><rect x="-7.95" y="1.95" width="2.7" height="2.7" rx="0.5" fill="#5274a8"/><rect x="-4.65" y="-7.95" width="2.7" height="2.7" rx="0.5" fill="#5274a8"/><rect x="-4.65" y="-4.65" width="2.7" height="2.7" rx="0.5" fill="#5274a8"/><rect x="-4.65" y="-1.35" width="2.7" height="2.7" rx="0.5" fill="#5274a8"/><rect x="-4.65" y="1.95" width="2.7" height="2.7" rx="0.5" fill="#5274a8"/><rect x="-4.65" y="5.25" width="2.7" height="2.7" rx="0.5" fill="#5274a8"/><rect x="-1.35" y="-7.95" width="2.7" height="2.7" rx="0.5" fill="#5274a8"/><rect x="-1.35" y="-4.65" width="2.7" height="2.7" rx="0.5" fill="#5274a8"/><rect x="-1.35" y="-1.35" width="2.7" height="2.7" rx="0.5" fill="#5274a8"/><rect x="-1.35" y="1.95" width="2.7" height="2.7" rx="0.5" fill="#5274a8"/><rect x="1.95" y="-4.65" width="2.7" height="2.7" rx="0.5" fill="#5274a8"/><rect x="1.95" y="-1.35" width="2.7" height="2.7" rx="0.5" fill="#5274a8"/><rect x="1.95" y="1.95" width="2.7" height="2.7" rx="0.5" fill="#5274a8"/><rect x="5.25" y="-1.35" width="2.7" height="2.7" rx="0.5" fill="#5274a8"/></g>
<g transform="translate(908.0 471.3) rotate(144.8) scale(0.946 1) rotate(-169.5)" opacity="1.00"><rect x="-8.55" y="-5.25" width="3.9" height="3.9" fill="#22354f"/><rect x="-8.55" y="-1.95" width="3.9" height="3.9" fill="#22354f"/><rect x="-5.25" y="-8.55" width="3.9" height="3.9" fill="#22354f"/><rect x="-5.25" y="-5.25" width="3.9" height="3.9" fill="#22354f"/><rect x="-5.25" y="-1.95" width="3.9" height="3.9" fill="#22354f"/><rect x="-5.25" y="1.35" width="3.9" height="3.9" fill="#22354f"/><rect x="-1.95" y="-8.55" width="3.9" height="3.9" fill="#22354f"/><rect x="-1.95" y="-5.25" width="3.9" height="3.9" fill="#22354f"/><rect x="-1.95" y="-1.95" width="3.9" height="3.9" fill="#22354f"/><rect x="-1.95" y="1.35" width="3.9" height="3.9" fill="#22354f"/><rect x="1.35" y="-5.25" width="3.9" height="3.9" fill="#22354f"/><rect x="1.35" y="-1.95" width="3.9" height="3.9" fill="#22354f"/><rect x="1.35" y="1.35" width="3.9" height="3.9" fill="#22354f"/><rect x="4.65" y="-5.25" width="3.9" height="3.9" fill="#22354f"/><rect x="4.65" y="1.35" width="3.9" height="3.9" fill="#22354f"/><rect x="-7.95" y="-4.65" width="2.7" height="2.7" rx="0.5" fill="#5274a8"/><rect x="-7.95" y="-1.35" width="2.7" height="2.7" rx="0.5" fill="#5274a8"/><rect x="-4.65" y="-7.95" width="2.7" height="2.7" rx="0.5" fill="#5274a8"/><rect x="-4.65" y="-4.65" width="2.7" height="2.7" rx="0.5" fill="#5274a8"/><rect x="-4.65" y="-1.35" width="2.7" height="2.7" rx="0.5" fill="#5274a8"/><rect x="-4.65" y="1.95" width="2.7" height="2.7" rx="0.5" fill="#5274a8"/><rect x="-1.35" y="-7.95" width="2.7" height="2.7" rx="0.5" fill="#5274a8"/><rect x="-1.35" y="-4.65" width="2.7" height="2.7" rx="0.5" fill="#5274a8"/><rect x="-1.35" y="-1.35" width="2.7" height="2.7" rx="0.5" fill="#5274a8"/><rect x="-1.35" y="1.95" width="2.7" height="2.7" rx="0.5" fill="#5274a8"/><rect x="1.95" y="-4.65" width="2.7" height="2.7" rx="0.5" fill="#5274a8"/><rect x="1.95" y="-1.35" width="2.7" height="2.7" rx="0.5" fill="#5274a8"/><rect x="1.95" y="1.95" width="2.7" height="2.7" rx="0.5" fill="#5274a8"/><rect x="5.25" y="-4.65" width="2.7" height="2.7" rx="0.5" fill="#5274a8"/><rect x="5.25" y="1.95" width="2.7" height="2.7" rx="0.5" fill="#5274a8"/></g>
<g transform="translate(800.0 480.5) rotate(163.1) scale(0.616 1) rotate(-144.2)" opacity="0.72"><rect x="-5.25" y="-5.25" width="3.9" height="3.9" fill="#22354f"/><rect x="-5.25" y="-1.95" width="3.9" height="3.9" fill="#22354f"/><rect x="-5.25" y="1.35" width="3.9" height="3.9" fill="#22354f"/><rect x="-1.95" y="-8.55" width="3.9" height="3.9" fill="#22354f"/><rect x="-1.95" y="-5.25" width="3.9" height="3.9" fill="#22354f"/><rect x="-1.95" y="-1.95" width="3.9" height="3.9" fill="#22354f"/><rect x="-1.95" y="1.35" width="3.9" height="3.9" fill="#22354f"/><rect x="1.35" y="-8.55" width="3.9" height="3.9" fill="#22354f"/><rect x="1.35" y="-5.25" width="3.9" height="3.9" fill="#22354f"/><rect x="1.35" y="-1.95" width="3.9" height="3.9" fill="#22354f"/><rect x="1.35" y="1.35" width="3.9" height="3.9" fill="#22354f"/><rect x="1.35" y="4.65" width="3.9" height="3.9" fill="#22354f"/><rect x="4.65" y="-5.25" width="3.9" height="3.9" fill="#22354f"/><rect x="4.65" y="-1.95" width="3.9" height="3.9" fill="#22354f"/><rect x="4.65" y="1.35" width="3.9" height="3.9" fill="#22354f"/><rect x="-4.65" y="-4.65" width="2.7" height="2.7" rx="0.5" fill="#5274a8"/><rect x="-4.65" y="-1.35" width="2.7" height="2.7" rx="0.5" fill="#5274a8"/><rect x="-4.65" y="1.95" width="2.7" height="2.7" rx="0.5" fill="#5274a8"/><rect x="-1.35" y="-7.95" width="2.7" height="2.7" rx="0.5" fill="#5274a8"/><rect x="-1.35" y="-4.65" width="2.7" height="2.7" rx="0.5" fill="#5274a8"/><rect x="-1.35" y="-1.35" width="2.7" height="2.7" rx="0.5" fill="#5274a8"/><rect x="-1.35" y="1.95" width="2.7" height="2.7" rx="0.5" fill="#5274a8"/><rect x="1.95" y="-7.95" width="2.7" height="2.7" rx="0.5" fill="#5274a8"/><rect x="1.95" y="-4.65" width="2.7" height="2.7" rx="0.5" fill="#5274a8"/><rect x="1.95" y="-1.35" width="2.7" height="2.7" rx="0.5" fill="#5274a8"/><rect x="1.95" y="1.95" width="2.7" height="2.7" rx="0.5" fill="#5274a8"/><rect x="1.95" y="5.25" width="2.7" height="2.7" rx="0.5" fill="#5274a8"/><rect x="5.25" y="-4.65" width="2.7" height="2.7" rx="0.5" fill="#5274a8"/><rect x="5.25" y="-1.35" width="2.7" height="2.7" rx="0.5" fill="#5274a8"/><rect x="5.25" y="1.95" width="2.7" height="2.7" rx="0.5" fill="#5274a8"/></g>
<g transform="translate(838.7 483.6) rotate(157.3) scale(0.779 1) rotate(-175.3)" opacity="0.96"><rect x="-8.55" y="-1.95" width="3.9" height="3.9" fill="#22354f"/><rect x="-8.55" y="1.35" width="3.9" height="3.9" fill="#22354f"/><rect x="-5.25" y="-5.25" width="3.9" height="3.9" fill="#22354f"/><rect x="-5.25" y="-1.95" width="3.9" height="3.9" fill="#22354f"/><rect x="-5.25" y="1.35" width="3.9" height="3.9" fill="#22354f"/><rect x="-5.25" y="4.65" width="3.9" height="3.9" fill="#22354f"/><rect x="-1.95" y="-8.55" width="3.9" height="3.9" fill="#22354f"/><rect x="-1.95" y="-5.25" width="3.9" height="3.9" fill="#22354f"/><rect x="-1.95" y="-1.95" width="3.9" height="3.9" fill="#22354f"/><rect x="-1.95" y="1.35" width="3.9" height="3.9" fill="#22354f"/><rect x="1.35" y="-8.55" width="3.9" height="3.9" fill="#22354f"/><rect x="1.35" y="-5.25" width="3.9" height="3.9" fill="#22354f"/><rect x="1.35" y="-1.95" width="3.9" height="3.9" fill="#22354f"/><rect x="1.35" y="1.35" width="3.9" height="3.9" fill="#22354f"/><rect x="1.35" y="4.65" width="3.9" height="3.9" fill="#22354f"/><rect x="4.65" y="-5.25" width="3.9" height="3.9" fill="#22354f"/><rect x="4.65" y="-1.95" width="3.9" height="3.9" fill="#22354f"/><rect x="4.65" y="1.35" width="3.9" height="3.9" fill="#22354f"/><rect x="-7.95" y="-1.35" width="2.7" height="2.7" rx="0.5" fill="#5274a8"/><rect x="-7.95" y="1.95" width="2.7" height="2.7" rx="0.5" fill="#5274a8"/><rect x="-4.65" y="-4.65" width="2.7" height="2.7" rx="0.5" fill="#5274a8"/><rect x="-4.65" y="-1.35" width="2.7" height="2.7" rx="0.5" fill="#5274a8"/><rect x="-4.65" y="1.95" width="2.7" height="2.7" rx="0.5" fill="#5274a8"/><rect x="-4.65" y="5.25" width="2.7" height="2.7" rx="0.5" fill="#5274a8"/><rect x="-1.35" y="-7.95" width="2.7" height="2.7" rx="0.5" fill="#5274a8"/><rect x="-1.35" y="-4.65" width="2.7" height="2.7" rx="0.5" fill="#5274a8"/><rect x="-1.35" y="-1.35" width="2.7" height="2.7" rx="0.5" fill="#5274a8"/><rect x="-1.35" y="1.95" width="2.7" height="2.7" rx="0.5" fill="#5274a8"/><rect x="1.95" y="-7.95" width="2.7" height="2.7" rx="0.5" fill="#5274a8"/><rect x="1.95" y="-4.65" width="2.7" height="2.7" rx="0.5" fill="#5274a8"/><rect x="1.95" y="-1.35" width="2.7" height="2.7" rx="0.5" fill="#5274a8"/><rect x="1.95" y="1.95" width="2.7" height="2.7" rx="0.5" fill="#5274a8"/><rect x="1.95" y="5.25" width="2.7" height="2.7" rx="0.5" fill="#5274a8"/><rect x="5.25" y="-4.65" width="2.7" height="2.7" rx="0.5" fill="#5274a8"/><rect x="5.25" y="-1.35" width="2.7" height="2.7" rx="0.5" fill="#5274a8"/><rect x="5.25" y="1.95" width="2.7" height="2.7" rx="0.5" fill="#5274a8"/></g>
<g transform="translate(770.8 483.6) rotate(164.7) scale(0.395 1) rotate(-171.7)" opacity="0.52"><rect x="-8.55" y="-5.25" width="3.9" height="3.9" fill="#22354f"/><rect x="-8.55" y="-1.95" width="3.9" height="3.9" fill="#22354f"/><rect x="-8.55" y="1.35" width="3.9" height="3.9" fill="#22354f"/><rect x="-5.25" y="-8.55" width="3.9" height="3.9" fill="#22354f"/><rect x="-5.25" y="-5.25" width="3.9" height="3.9" fill="#22354f"/><rect x="-5.25" y="-1.95" width="3.9" height="3.9" fill="#22354f"/><rect x="-5.25" y="1.35" width="3.9" height="3.9" fill="#22354f"/><rect x="-5.25" y="4.65" width="3.9" height="3.9" fill="#22354f"/><rect x="-1.95" y="-8.55" width="3.9" height="3.9" fill="#22354f"/><rect x="-1.95" y="-5.25" width="3.9" height="3.9" fill="#22354f"/><rect x="-1.95" y="-1.95" width="3.9" height="3.9" fill="#22354f"/><rect x="-1.95" y="1.35" width="3.9" height="3.9" fill="#22354f"/><rect x="-1.95" y="4.65" width="3.9" height="3.9" fill="#22354f"/><rect x="1.35" y="-8.55" width="3.9" height="3.9" fill="#22354f"/><rect x="1.35" y="-5.25" width="3.9" height="3.9" fill="#22354f"/><rect x="1.35" y="-1.95" width="3.9" height="3.9" fill="#22354f"/><rect x="1.35" y="1.35" width="3.9" height="3.9" fill="#22354f"/><rect x="1.35" y="4.65" width="3.9" height="3.9" fill="#22354f"/><rect x="-7.95" y="-4.65" width="2.7" height="2.7" rx="0.5" fill="#5274a8"/><rect x="-7.95" y="-1.35" width="2.7" height="2.7" rx="0.5" fill="#5274a8"/><rect x="-7.95" y="1.95" width="2.7" height="2.7" rx="0.5" fill="#5274a8"/><rect x="-4.65" y="-7.95" width="2.7" height="2.7" rx="0.5" fill="#5274a8"/><rect x="-4.65" y="-4.65" width="2.7" height="2.7" rx="0.5" fill="#5274a8"/><rect x="-4.65" y="-1.35" width="2.7" height="2.7" rx="0.5" fill="#5274a8"/><rect x="-4.65" y="1.95" width="2.7" height="2.7" rx="0.5" fill="#5274a8"/><rect x="-4.65" y="5.25" width="2.7" height="2.7" rx="0.5" fill="#5274a8"/><rect x="-1.35" y="-7.95" width="2.7" height="2.7" rx="0.5" fill="#5274a8"/><rect x="-1.35" y="-4.65" width="2.7" height="2.7" rx="0.5" fill="#5274a8"/><rect x="-1.35" y="-1.35" width="2.7" height="2.7" rx="0.5" fill="#5274a8"/><rect x="-1.35" y="1.95" width="2.7" height="2.7" rx="0.5" fill="#5274a8"/><rect x="-1.35" y="5.25" width="2.7" height="2.7" rx="0.5" fill="#5274a8"/><rect x="1.95" y="-7.95" width="2.7" height="2.7" rx="0.5" fill="#5274a8"/><rect x="1.95" y="-4.65" width="2.7" height="2.7" rx="0.5" fill="#5274a8"/><rect x="1.95" y="-1.35" width="2.7" height="2.7" rx="0.5" fill="#5274a8"/><rect x="1.95" y="1.95" width="2.7" height="2.7" rx="0.5" fill="#5274a8"/><rect x="1.95" y="5.25" width="2.7" height="2.7" rx="0.5" fill="#5274a8"/></g>
<g transform="translate(883.4 516.0) rotate(134.0) scale(0.841 1) rotate(-126.0)" opacity="1.00"><rect x="-8.55" y="-1.95" width="3.9" height="3.9" fill="#22354f"/><rect x="-8.55" y="1.35" width="3.9" height="3.9" fill="#22354f"/><rect x="-5.25" y="-8.55" width="3.9" height="3.9" fill="#22354f"/><rect x="-5.25" y="-5.25" width="3.9" height="3.9" fill="#22354f"/><rect x="-5.25" y="-1.95" width="3.9" height="3.9" fill="#22354f"/><rect x="-5.25" y="1.35" width="3.9" height="3.9" fill="#22354f"/><rect x="-5.25" y="4.65" width="3.9" height="3.9" fill="#22354f"/><rect x="-1.95" y="-8.55" width="3.9" height="3.9" fill="#22354f"/><rect x="-1.95" y="-5.25" width="3.9" height="3.9" fill="#22354f"/><rect x="-1.95" y="-1.95" width="3.9" height="3.9" fill="#22354f"/><rect x="-1.95" y="1.35" width="3.9" height="3.9" fill="#22354f"/><rect x="-1.95" y="4.65" width="3.9" height="3.9" fill="#22354f"/><rect x="1.35" y="-5.25" width="3.9" height="3.9" fill="#22354f"/><rect x="1.35" y="-1.95" width="3.9" height="3.9" fill="#22354f"/><rect x="1.35" y="1.35" width="3.9" height="3.9" fill="#22354f"/><rect x="1.35" y="4.65" width="3.9" height="3.9" fill="#22354f"/><rect x="4.65" y="-5.25" width="3.9" height="3.9" fill="#22354f"/><rect x="4.65" y="-1.95" width="3.9" height="3.9" fill="#22354f"/><rect x="4.65" y="1.35" width="3.9" height="3.9" fill="#22354f"/><rect x="-7.95" y="-1.35" width="2.7" height="2.7" rx="0.5" fill="#5274a8"/><rect x="-7.95" y="1.95" width="2.7" height="2.7" rx="0.5" fill="#5274a8"/><rect x="-4.65" y="-7.95" width="2.7" height="2.7" rx="0.5" fill="#5274a8"/><rect x="-4.65" y="-4.65" width="2.7" height="2.7" rx="0.5" fill="#5274a8"/><rect x="-4.65" y="-1.35" width="2.7" height="2.7" rx="0.5" fill="#5274a8"/><rect x="-4.65" y="1.95" width="2.7" height="2.7" rx="0.5" fill="#5274a8"/><rect x="-4.65" y="5.25" width="2.7" height="2.7" rx="0.5" fill="#5274a8"/><rect x="-1.35" y="-7.95" width="2.7" height="2.7" rx="0.5" fill="#5274a8"/><rect x="-1.35" y="-4.65" width="2.7" height="2.7" rx="0.5" fill="#5274a8"/><rect x="-1.35" y="-1.35" width="2.7" height="2.7" rx="0.5" fill="#5274a8"/><rect x="-1.35" y="1.95" width="2.7" height="2.7" rx="0.5" fill="#5274a8"/><rect x="-1.35" y="5.25" width="2.7" height="2.7" rx="0.5" fill="#5274a8"/><rect x="1.95" y="-4.65" width="2.7" height="2.7" rx="0.5" fill="#5274a8"/><rect x="1.95" y="-1.35" width="2.7" height="2.7" rx="0.5" fill="#5274a8"/><rect x="1.95" y="1.95" width="2.7" height="2.7" rx="0.5" fill="#5274a8"/><rect x="1.95" y="5.25" width="2.7" height="2.7" rx="0.5" fill="#5274a8"/><rect x="5.25" y="-4.65" width="2.7" height="2.7" rx="0.5" fill="#5274a8"/><rect x="5.25" y="-1.35" width="2.7" height="2.7" rx="0.5" fill="#5274a8"/><rect x="5.25" y="1.95" width="2.7" height="2.7" rx="0.5" fill="#5274a8"/></g>
<g transform="translate(951.2 517.5) rotate(99.8) scale(0.916 1) rotate(-90.6)" opacity="1.00"><rect x="-8.55" y="-1.95" width="3.9" height="3.9" fill="#22354f"/><rect x="-5.25" y="-5.25" width="3.9" height="3.9" fill="#22354f"/><rect x="-5.25" y="-1.95" width="3.9" height="3.9" fill="#22354f"/><rect x="-5.25" y="1.35" width="3.9" height="3.9" fill="#22354f"/><rect x="-1.95" y="-8.55" width="3.9" height="3.9" fill="#22354f"/><rect x="-1.95" y="-5.25" width="3.9" height="3.9" fill="#22354f"/><rect x="-1.95" y="-1.95" width="3.9" height="3.9" fill="#22354f"/><rect x="-1.95" y="1.35" width="3.9" height="3.9" fill="#22354f"/><rect x="1.35" y="-8.55" width="3.9" height="3.9" fill="#22354f"/><rect x="1.35" y="-5.25" width="3.9" height="3.9" fill="#22354f"/><rect x="1.35" y="-1.95" width="3.9" height="3.9" fill="#22354f"/><rect x="1.35" y="1.35" width="3.9" height="3.9" fill="#22354f"/><rect x="1.35" y="4.65" width="3.9" height="3.9" fill="#22354f"/><rect x="4.65" y="-1.95" width="3.9" height="3.9" fill="#22354f"/><rect x="-7.95" y="-1.35" width="2.7" height="2.7" rx="0.5" fill="#5274a8"/><rect x="-4.65" y="-4.65" width="2.7" height="2.7" rx="0.5" fill="#5274a8"/><rect x="-4.65" y="-1.35" width="2.7" height="2.7" rx="0.5" fill="#5274a8"/><rect x="-4.65" y="1.95" width="2.7" height="2.7" rx="0.5" fill="#5274a8"/><rect x="-1.35" y="-7.95" width="2.7" height="2.7" rx="0.5" fill="#5274a8"/><rect x="-1.35" y="-4.65" width="2.7" height="2.7" rx="0.5" fill="#5274a8"/><rect x="-1.35" y="-1.35" width="2.7" height="2.7" rx="0.5" fill="#5274a8"/><rect x="-1.35" y="1.95" width="2.7" height="2.7" rx="0.5" fill="#5274a8"/><rect x="1.95" y="-7.95" width="2.7" height="2.7" rx="0.5" fill="#5274a8"/><rect x="1.95" y="-4.65" width="2.7" height="2.7" rx="0.5" fill="#5274a8"/><rect x="1.95" y="-1.35" width="2.7" height="2.7" rx="0.5" fill="#5274a8"/><rect x="1.95" y="1.95" width="2.7" height="2.7" rx="0.5" fill="#5274a8"/><rect x="1.95" y="5.25" width="2.7" height="2.7" rx="0.5" fill="#5274a8"/><rect x="5.25" y="-1.35" width="2.7" height="2.7" rx="0.5" fill="#5274a8"/></g>
<g transform="translate(804.8 526.8) rotate(149.1) scale(0.521 1) rotate(-140.5)" opacity="0.62"><rect x="-8.55" y="-5.25" width="3.9" height="3.9" fill="#22354f"/><rect x="-8.55" y="-1.95" width="3.9" height="3.9" fill="#22354f"/><rect x="-8.55" y="1.35" width="3.9" height="3.9" fill="#22354f"/><rect x="-5.25" y="-5.25" width="3.9" height="3.9" fill="#22354f"/><rect x="-5.25" y="-1.95" width="3.9" height="3.9" fill="#22354f"/><rect x="-5.25" y="1.35" width="3.9" height="3.9" fill="#22354f"/><rect x="-1.95" y="-8.55" width="3.9" height="3.9" fill="#22354f"/><rect x="-1.95" y="-5.25" width="3.9" height="3.9" fill="#22354f"/><rect x="-1.95" y="-1.95" width="3.9" height="3.9" fill="#22354f"/><rect x="-1.95" y="1.35" width="3.9" height="3.9" fill="#22354f"/><rect x="-1.95" y="4.65" width="3.9" height="3.9" fill="#22354f"/><rect x="1.35" y="-5.25" width="3.9" height="3.9" fill="#22354f"/><rect x="1.35" y="-1.95" width="3.9" height="3.9" fill="#22354f"/><rect x="1.35" y="1.35" width="3.9" height="3.9" fill="#22354f"/><rect x="1.35" y="4.65" width="3.9" height="3.9" fill="#22354f"/><rect x="-7.95" y="-4.65" width="2.7" height="2.7" rx="0.5" fill="#5274a8"/><rect x="-7.95" y="-1.35" width="2.7" height="2.7" rx="0.5" fill="#5274a8"/><rect x="-7.95" y="1.95" width="2.7" height="2.7" rx="0.5" fill="#5274a8"/><rect x="-4.65" y="-4.65" width="2.7" height="2.7" rx="0.5" fill="#5274a8"/><rect x="-4.65" y="-1.35" width="2.7" height="2.7" rx="0.5" fill="#5274a8"/><rect x="-4.65" y="1.95" width="2.7" height="2.7" rx="0.5" fill="#5274a8"/><rect x="-1.35" y="-7.95" width="2.7" height="2.7" rx="0.5" fill="#5274a8"/><rect x="-1.35" y="-4.65" width="2.7" height="2.7" rx="0.5" fill="#5274a8"/><rect x="-1.35" y="-1.35" width="2.7" height="2.7" rx="0.5" fill="#5274a8"/><rect x="-1.35" y="1.95" width="2.7" height="2.7" rx="0.5" fill="#5274a8"/><rect x="-1.35" y="5.25" width="2.7" height="2.7" rx="0.5" fill="#5274a8"/><rect x="1.95" y="-4.65" width="2.7" height="2.7" rx="0.5" fill="#5274a8"/><rect x="1.95" y="-1.35" width="2.7" height="2.7" rx="0.5" fill="#5274a8"/><rect x="1.95" y="1.95" width="2.7" height="2.7" rx="0.5" fill="#5274a8"/><rect x="1.95" y="5.25" width="2.7" height="2.7" rx="0.5" fill="#5274a8"/></g>
<g transform="translate(846.4 542.2) rotate(136.9) scale(0.668 1) rotate(-139.0)" opacity="0.78"><rect x="-8.55" y="-5.25" width="3.9" height="3.9" fill="#22354f"/><rect x="-8.55" y="-1.95" width="3.9" height="3.9" fill="#22354f"/><rect x="-5.25" y="-8.55" width="3.9" height="3.9" fill="#22354f"/><rect x="-5.25" y="-5.25" width="3.9" height="3.9" fill="#22354f"/><rect x="-5.25" y="-1.95" width="3.9" height="3.9" fill="#22354f"/><rect x="-5.25" y="1.35" width="3.9" height="3.9" fill="#22354f"/><rect x="-1.95" y="-8.55" width="3.9" height="3.9" fill="#22354f"/><rect x="-1.95" y="-5.25" width="3.9" height="3.9" fill="#22354f"/><rect x="-1.95" y="-1.95" width="3.9" height="3.9" fill="#22354f"/><rect x="-1.95" y="1.35" width="3.9" height="3.9" fill="#22354f"/><rect x="1.35" y="-8.55" width="3.9" height="3.9" fill="#22354f"/><rect x="1.35" y="-5.25" width="3.9" height="3.9" fill="#22354f"/><rect x="1.35" y="-1.95" width="3.9" height="3.9" fill="#22354f"/><rect x="1.35" y="1.35" width="3.9" height="3.9" fill="#22354f"/><rect x="4.65" y="-5.25" width="3.9" height="3.9" fill="#22354f"/><rect x="4.65" y="-1.95" width="3.9" height="3.9" fill="#22354f"/><rect x="-7.95" y="-4.65" width="2.7" height="2.7" rx="0.5" fill="#5274a8"/><rect x="-7.95" y="-1.35" width="2.7" height="2.7" rx="0.5" fill="#5274a8"/><rect x="-4.65" y="-7.95" width="2.7" height="2.7" rx="0.5" fill="#5274a8"/><rect x="-4.65" y="-4.65" width="2.7" height="2.7" rx="0.5" fill="#5274a8"/><rect x="-4.65" y="-1.35" width="2.7" height="2.7" rx="0.5" fill="#5274a8"/><rect x="-4.65" y="1.95" width="2.7" height="2.7" rx="0.5" fill="#5274a8"/><rect x="-1.35" y="-7.95" width="2.7" height="2.7" rx="0.5" fill="#5274a8"/><rect x="-1.35" y="-4.65" width="2.7" height="2.7" rx="0.5" fill="#5274a8"/><rect x="-1.35" y="-1.35" width="2.7" height="2.7" rx="0.5" fill="#5274a8"/><rect x="-1.35" y="1.95" width="2.7" height="2.7" rx="0.5" fill="#5274a8"/><rect x="1.95" y="-7.95" width="2.7" height="2.7" rx="0.5" fill="#5274a8"/><rect x="1.95" y="-4.65" width="2.7" height="2.7" rx="0.5" fill="#5274a8"/><rect x="1.95" y="-1.35" width="2.7" height="2.7" rx="0.5" fill="#5274a8"/><rect x="1.95" y="1.95" width="2.7" height="2.7" rx="0.5" fill="#5274a8"/><rect x="5.25" y="-4.65" width="2.7" height="2.7" rx="0.5" fill="#5274a8"/><rect x="5.25" y="-1.35" width="2.7" height="2.7" rx="0.5" fill="#5274a8"/></g>
<g transform="translate(920.4 562.2) rotate(109.2) scale(0.773 1) rotate(-93.1)" opacity="0.95"><rect x="-8.55" y="-5.25" width="3.9" height="3.9" fill="#22354f"/><rect x="-8.55" y="-1.95" width="3.9" height="3.9" fill="#22354f"/><rect x="-5.25" y="-5.25" width="3.9" height="3.9" fill="#22354f"/><rect x="-5.25" y="-1.95" width="3.9" height="3.9" fill="#22354f"/><rect x="-5.25" y="1.35" width="3.9" height="3.9" fill="#22354f"/><rect x="-1.95" y="-8.55" width="3.9" height="3.9" fill="#22354f"/><rect x="-1.95" y="-5.25" width="3.9" height="3.9" fill="#22354f"/><rect x="-1.95" y="-1.95" width="3.9" height="3.9" fill="#22354f"/><rect x="-1.95" y="1.35" width="3.9" height="3.9" fill="#22354f"/><rect x="1.35" y="-8.55" width="3.9" height="3.9" fill="#22354f"/><rect x="1.35" y="-5.25" width="3.9" height="3.9" fill="#22354f"/><rect x="1.35" y="-1.95" width="3.9" height="3.9" fill="#22354f"/><rect x="1.35" y="1.35" width="3.9" height="3.9" fill="#22354f"/><rect x="4.65" y="-5.25" width="3.9" height="3.9" fill="#22354f"/><rect x="4.65" y="-1.95" width="3.9" height="3.9" fill="#22354f"/><rect x="-7.95" y="-4.65" width="2.7" height="2.7" rx="0.5" fill="#5274a8"/><rect x="-7.95" y="-1.35" width="2.7" height="2.7" rx="0.5" fill="#5274a8"/><rect x="-4.65" y="-4.65" width="2.7" height="2.7" rx="0.5" fill="#5274a8"/><rect x="-4.65" y="-1.35" width="2.7" height="2.7" rx="0.5" fill="#5274a8"/><rect x="-4.65" y="1.95" width="2.7" height="2.7" rx="0.5" fill="#5274a8"/><rect x="-1.35" y="-7.95" width="2.7" height="2.7" rx="0.5" fill="#5274a8"/><rect x="-1.35" y="-4.65" width="2.7" height="2.7" rx="0.5" fill="#5274a8"/><rect x="-1.35" y="-1.35" width="2.7" height="2.7" rx="0.5" fill="#5274a8"/><rect x="-1.35" y="1.95" width="2.7" height="2.7" rx="0.5" fill="#5274a8"/><rect x="1.95" y="-7.95" width="2.7" height="2.7" rx="0.5" fill="#5274a8"/><rect x="1.95" y="-4.65" width="2.7" height="2.7" rx="0.5" fill="#5274a8"/><rect x="1.95" y="-1.35" width="2.7" height="2.7" rx="0.5" fill="#5274a8"/><rect x="1.95" y="1.95" width="2.7" height="2.7" rx="0.5" fill="#5274a8"/><rect x="5.25" y="-4.65" width="2.7" height="2.7" rx="0.5" fill="#5274a8"/><rect x="5.25" y="-1.35" width="2.7" height="2.7" rx="0.5" fill="#5274a8"/></g>
<g transform="translate(832.5 576.0) rotate(132.5) scale(0.441 1) rotate(-140.3)" opacity="0.55"><rect x="-8.55" y="-5.25" width="3.9" height="3.9" fill="#22354f"/><rect x="-8.55" y="-1.95" width="3.9" height="3.9" fill="#22354f"/><rect x="-8.55" y="1.35" width="3.9" height="3.9" fill="#22354f"/><rect x="-5.25" y="-5.25" width="3.9" height="3.9" fill="#22354f"/><rect x="-5.25" y="-1.95" width="3.9" height="3.9" fill="#22354f"/><rect x="-5.25" y="1.35" width="3.9" height="3.9" fill="#22354f"/><rect x="-5.25" y="4.65" width="3.9" height="3.9" fill="#22354f"/><rect x="-1.95" y="-8.55" width="3.9" height="3.9" fill="#22354f"/><rect x="-1.95" y="-5.25" width="3.9" height="3.9" fill="#22354f"/><rect x="-1.95" y="-1.95" width="3.9" height="3.9" fill="#22354f"/><rect x="-1.95" y="1.35" width="3.9" height="3.9" fill="#22354f"/><rect x="1.35" y="-5.25" width="3.9" height="3.9" fill="#22354f"/><rect x="1.35" y="-1.95" width="3.9" height="3.9" fill="#22354f"/><rect x="1.35" y="1.35" width="3.9" height="3.9" fill="#22354f"/><rect x="4.65" y="-1.95" width="3.9" height="3.9" fill="#22354f"/><rect x="-7.95" y="-4.65" width="2.7" height="2.7" rx="0.5" fill="#5274a8"/><rect x="-7.95" y="-1.35" width="2.7" height="2.7" rx="0.5" fill="#5274a8"/><rect x="-7.95" y="1.95" width="2.7" height="2.7" rx="0.5" fill="#5274a8"/><rect x="-4.65" y="-4.65" width="2.7" height="2.7" rx="0.5" fill="#5274a8"/><rect x="-4.65" y="-1.35" width="2.7" height="2.7" rx="0.5" fill="#5274a8"/><rect x="-4.65" y="1.95" width="2.7" height="2.7" rx="0.5" fill="#5274a8"/><rect x="-4.65" y="5.25" width="2.7" height="2.7" rx="0.5" fill="#5274a8"/><rect x="-1.35" y="-7.95" width="2.7" height="2.7" rx="0.5" fill="#5274a8"/><rect x="-1.35" y="-4.65" width="2.7" height="2.7" rx="0.5" fill="#5274a8"/><rect x="-1.35" y="-1.35" width="2.7" height="2.7" rx="0.5" fill="#5274a8"/><rect x="-1.35" y="1.95" width="2.7" height="2.7" rx="0.5" fill="#5274a8"/><rect x="1.95" y="-4.65" width="2.7" height="2.7" rx="0.5" fill="#5274a8"/><rect x="1.95" y="-1.35" width="2.7" height="2.7" rx="0.5" fill="#5274a8"/><rect x="1.95" y="1.95" width="2.7" height="2.7" rx="0.5" fill="#5274a8"/><rect x="5.25" y="-1.35" width="2.7" height="2.7" rx="0.5" fill="#5274a8"/></g>
<g transform="translate(881.8 583.8) rotate(118.8) scale(0.606 1) rotate(-93.9)" opacity="0.71"><rect x="-8.55" y="-1.95" width="3.9" height="3.9" fill="#22354f"/><rect x="-5.25" y="-8.55" width="3.9" height="3.9" fill="#22354f"/><rect x="-5.25" y="-5.25" width="3.9" height="3.9" fill="#22354f"/><rect x="-5.25" y="-1.95" width="3.9" height="3.9" fill="#22354f"/><rect x="-5.25" y="1.35" width="3.9" height="3.9" fill="#22354f"/><rect x="-5.25" y="4.65" width="3.9" height="3.9" fill="#22354f"/><rect x="-1.95" y="-5.25" width="3.9" height="3.9" fill="#22354f"/><rect x="-1.95" y="-1.95" width="3.9" height="3.9" fill="#22354f"/><rect x="-1.95" y="1.35" width="3.9" height="3.9" fill="#22354f"/><rect x="-1.95" y="4.65" width="3.9" height="3.9" fill="#22354f"/><rect x="1.35" y="-8.55" width="3.9" height="3.9" fill="#22354f"/><rect x="1.35" y="-5.25" width="3.9" height="3.9" fill="#22354f"/><rect x="1.35" y="-1.95" width="3.9" height="3.9" fill="#22354f"/><rect x="1.35" y="1.35" width="3.9" height="3.9" fill="#22354f"/><rect x="1.35" y="4.65" width="3.9" height="3.9" fill="#22354f"/><rect x="4.65" y="-1.95" width="3.9" height="3.9" fill="#22354f"/><rect x="-7.95" y="-1.35" width="2.7" height="2.7" rx="0.5" fill="#5274a8"/><rect x="-4.65" y="-7.95" width="2.7" height="2.7" rx="0.5" fill="#5274a8"/><rect x="-4.65" y="-4.65" width="2.7" height="2.7" rx="0.5" fill="#5274a8"/><rect x="-4.65" y="-1.35" width="2.7" height="2.7" rx="0.5" fill="#5274a8"/><rect x="-4.65" y="1.95" width="2.7" height="2.7" rx="0.5" fill="#5274a8"/><rect x="-4.65" y="5.25" width="2.7" height="2.7" rx="0.5" fill="#5274a8"/><rect x="-1.35" y="-4.65" width="2.7" height="2.7" rx="0.5" fill="#5274a8"/><rect x="-1.35" y="-1.35" width="2.7" height="2.7" rx="0.5" fill="#5274a8"/><rect x="-1.35" y="1.95" width="2.7" height="2.7" rx="0.5" fill="#5274a8"/><rect x="-1.35" y="5.25" width="2.7" height="2.7" rx="0.5" fill="#5274a8"/><rect x="1.95" y="-7.95" width="2.7" height="2.7" rx="0.5" fill="#5274a8"/><rect x="1.95" y="-4.65" width="2.7" height="2.7" rx="0.5" fill="#5274a8"/><rect x="1.95" y="-1.35" width="2.7" height="2.7" rx="0.5" fill="#5274a8"/><rect x="1.95" y="1.95" width="2.7" height="2.7" rx="0.5" fill="#5274a8"/><rect x="1.95" y="5.25" width="2.7" height="2.7" rx="0.5" fill="#5274a8"/><rect x="5.25" y="-1.35" width="2.7" height="2.7" rx="0.5" fill="#5274a8"/></g>
<g transform="translate(940.4 603.8) rotate(98.5) scale(0.605 1) rotate(-114.0)" opacity="0.71"><rect x="-8.55" y="-5.25" width="3.9" height="3.9" fill="#22354f"/><rect x="-8.55" y="-1.95" width="3.9" height="3.9" fill="#22354f"/><rect x="-5.25" y="-5.25" width="3.9" height="3.9" fill="#22354f"/><rect x="-5.25" y="-1.95" width="3.9" height="3.9" fill="#22354f"/><rect x="-5.25" y="1.35" width="3.9" height="3.9" fill="#22354f"/><rect x="-1.95" y="-5.25" width="3.9" height="3.9" fill="#22354f"/><rect x="-1.95" y="-1.95" width="3.9" height="3.9" fill="#22354f"/><rect x="-1.95" y="1.35" width="3.9" height="3.9" fill="#22354f"/><rect x="-1.95" y="4.65" width="3.9" height="3.9" fill="#22354f"/><rect x="1.35" y="-5.25" width="3.9" height="3.9" fill="#22354f"/><rect x="1.35" y="-1.95" width="3.9" height="3.9" fill="#22354f"/><rect x="1.35" y="1.35" width="3.9" height="3.9" fill="#22354f"/><rect x="1.35" y="4.65" width="3.9" height="3.9" fill="#22354f"/><rect x="4.65" y="-1.95" width="3.9" height="3.9" fill="#22354f"/><rect x="4.65" y="1.35" width="3.9" height="3.9" fill="#22354f"/><rect x="-7.95" y="-4.65" width="2.7" height="2.7" rx="0.5" fill="#5274a8"/><rect x="-7.95" y="-1.35" width="2.7" height="2.7" rx="0.5" fill="#5274a8"/><rect x="-4.65" y="-4.65" width="2.7" height="2.7" rx="0.5" fill="#5274a8"/><rect x="-4.65" y="-1.35" width="2.7" height="2.7" rx="0.5" fill="#5274a8"/><rect x="-4.65" y="1.95" width="2.7" height="2.7" rx="0.5" fill="#5274a8"/><rect x="-1.35" y="-4.65" width="2.7" height="2.7" rx="0.5" fill="#5274a8"/><rect x="-1.35" y="-1.35" width="2.7" height="2.7" rx="0.5" fill="#5274a8"/><rect x="-1.35" y="1.95" width="2.7" height="2.7" rx="0.5" fill="#5274a8"/><rect x="-1.35" y="5.25" width="2.7" height="2.7" rx="0.5" fill="#5274a8"/><rect x="1.95" y="-4.65" width="2.7" height="2.7" rx="0.5" fill="#5274a8"/><rect x="1.95" y="-1.35" width="2.7" height="2.7" rx="0.5" fill="#5274a8"/><rect x="1.95" y="1.95" width="2.7" height="2.7" rx="0.5" fill="#5274a8"/><rect x="1.95" y="5.25" width="2.7" height="2.7" rx="0.5" fill="#5274a8"/><rect x="5.25" y="-1.35" width="2.7" height="2.7" rx="0.5" fill="#5274a8"/><rect x="5.25" y="1.95" width="2.7" height="2.7" rx="0.5" fill="#5274a8"/></g>
<g transform="translate(869.5 610.0) rotate(118.3) scale(0.377 1) rotate(-105.7)" opacity="0.51"><rect x="-8.55" y="-1.95" width="3.9" height="3.9" fill="#22354f"/><rect x="-8.55" y="1.35" width="3.9" height="3.9" fill="#22354f"/><rect x="-5.25" y="-8.55" width="3.9" height="3.9" fill="#22354f"/><rect x="-5.25" y="-5.25" width="3.9" height="3.9" fill="#22354f"/><rect x="-5.25" y="-1.95" width="3.9" height="3.9" fill="#22354f"/><rect x="-5.25" y="1.35" width="3.9" height="3.9" fill="#22354f"/><rect x="-5.25" y="4.65" width="3.9" height="3.9" fill="#22354f"/><rect x="-1.95" y="-8.55" width="3.9" height="3.9" fill="#22354f"/><rect x="-1.95" y="-5.25" width="3.9" height="3.9" fill="#22354f"/><rect x="-1.95" y="-1.95" width="3.9" height="3.9" fill="#22354f"/><rect x="-1.95" y="1.35" width="3.9" height="3.9" fill="#22354f"/><rect x="-1.95" y="4.65" width="3.9" height="3.9" fill="#22354f"/><rect x="1.35" y="-8.55" width="3.9" height="3.9" fill="#22354f"/><rect x="1.35" y="-5.25" width="3.9" height="3.9" fill="#22354f"/><rect x="1.35" y="-1.95" width="3.9" height="3.9" fill="#22354f"/><rect x="1.35" y="1.35" width="3.9" height="3.9" fill="#22354f"/><rect x="1.35" y="4.65" width="3.9" height="3.9" fill="#22354f"/><rect x="4.65" y="-1.95" width="3.9" height="3.9" fill="#22354f"/><rect x="-7.95" y="-1.35" width="2.7" height="2.7" rx="0.5" fill="#5274a8"/><rect x="-7.95" y="1.95" width="2.7" height="2.7" rx="0.5" fill="#5274a8"/><rect x="-4.65" y="-7.95" width="2.7" height="2.7" rx="0.5" fill="#5274a8"/><rect x="-4.65" y="-4.65" width="2.7" height="2.7" rx="0.5" fill="#5274a8"/><rect x="-4.65" y="-1.35" width="2.7" height="2.7" rx="0.5" fill="#5274a8"/><rect x="-4.65" y="1.95" width="2.7" height="2.7" rx="0.5" fill="#5274a8"/><rect x="-4.65" y="5.25" width="2.7" height="2.7" rx="0.5" fill="#5274a8"/><rect x="-1.35" y="-7.95" width="2.7" height="2.7" rx="0.5" fill="#5274a8"/><rect x="-1.35" y="-4.65" width="2.7" height="2.7" rx="0.5" fill="#5274a8"/><rect x="-1.35" y="-1.35" width="2.7" height="2.7" rx="0.5" fill="#5274a8"/><rect x="-1.35" y="1.95" width="2.7" height="2.7" rx="0.5" fill="#5274a8"/><rect x="-1.35" y="5.25" width="2.7" height="2.7" rx="0.5" fill="#5274a8"/><rect x="1.95" y="-7.95" width="2.7" height="2.7" rx="0.5" fill="#5274a8"/><rect x="1.95" y="-4.65" width="2.7" height="2.7" rx="0.5" fill="#5274a8"/><rect x="1.95" y="-1.35" width="2.7" height="2.7" rx="0.5" fill="#5274a8"/><rect x="1.95" y="1.95" width="2.7" height="2.7" rx="0.5" fill="#5274a8"/><rect x="1.95" y="5.25" width="2.7" height="2.7" rx="0.5" fill="#5274a8"/><rect x="5.25" y="-1.35" width="2.7" height="2.7" rx="0.5" fill="#5274a8"/></g>
<g transform="translate(925.0 630.0) rotate(101.7) scale(0.379 1) rotate(-111.6)" opacity="0.51"><rect x="-8.55" y="-5.25" width="3.9" height="3.9" fill="#22354f"/><rect x="-8.55" y="-1.95" width="3.9" height="3.9" fill="#22354f"/><rect x="-5.25" y="-8.55" width="3.9" height="3.9" fill="#22354f"/><rect x="-5.25" y="-5.25" width="3.9" height="3.9" fill="#22354f"/><rect x="-5.25" y="-1.95" width="3.9" height="3.9" fill="#22354f"/><rect x="-5.25" y="1.35" width="3.9" height="3.9" fill="#22354f"/><rect x="-1.95" y="-8.55" width="3.9" height="3.9" fill="#22354f"/><rect x="-1.95" y="-5.25" width="3.9" height="3.9" fill="#22354f"/><rect x="-1.95" y="-1.95" width="3.9" height="3.9" fill="#22354f"/><rect x="-1.95" y="1.35" width="3.9" height="3.9" fill="#22354f"/><rect x="-1.95" y="4.65" width="3.9" height="3.9" fill="#22354f"/><rect x="1.35" y="-5.25" width="3.9" height="3.9" fill="#22354f"/><rect x="1.35" y="-1.95" width="3.9" height="3.9" fill="#22354f"/><rect x="1.35" y="1.35" width="3.9" height="3.9" fill="#22354f"/><rect x="1.35" y="4.65" width="3.9" height="3.9" fill="#22354f"/><rect x="4.65" y="-5.25" width="3.9" height="3.9" fill="#22354f"/><rect x="4.65" y="-1.95" width="3.9" height="3.9" fill="#22354f"/><rect x="4.65" y="1.35" width="3.9" height="3.9" fill="#22354f"/><rect x="-7.95" y="-4.65" width="2.7" height="2.7" rx="0.5" fill="#5274a8"/><rect x="-7.95" y="-1.35" width="2.7" height="2.7" rx="0.5" fill="#5274a8"/><rect x="-4.65" y="-7.95" width="2.7" height="2.7" rx="0.5" fill="#5274a8"/><rect x="-4.65" y="-4.65" width="2.7" height="2.7" rx="0.5" fill="#5274a8"/><rect x="-4.65" y="-1.35" width="2.7" height="2.7" rx="0.5" fill="#5274a8"/><rect x="-4.65" y="1.95" width="2.7" height="2.7" rx="0.5" fill="#5274a8"/><rect x="-1.35" y="-7.95" width="2.7" height="2.7" rx="0.5" fill="#5274a8"/><rect x="-1.35" y="-4.65" width="2.7" height="2.7" rx="0.5" fill="#5274a8"/><rect x="-1.35" y="-1.35" width="2.7" height="2.7" rx="0.5" fill="#5274a8"/><rect x="-1.35" y="1.95" width="2.7" height="2.7" rx="0.5" fill="#5274a8"/><rect x="-1.35" y="5.25" width="2.7" height="2.7" rx="0.5" fill="#5274a8"/><rect x="1.95" y="-4.65" width="2.7" height="2.7" rx="0.5" fill="#5274a8"/><rect x="1.95" y="-1.35" width="2.7" height="2.7" rx="0.5" fill="#5274a8"/><rect x="1.95" y="1.95" width="2.7" height="2.7" rx="0.5" fill="#5274a8"/><rect x="1.95" y="5.25" width="2.7" height="2.7" rx="0.5" fill="#5274a8"/><rect x="5.25" y="-4.65" width="2.7" height="2.7" rx="0.5" fill="#5274a8"/><rect x="5.25" y="-1.35" width="2.7" height="2.7" rx="0.5" fill="#5274a8"/><rect x="5.25" y="1.95" width="2.7" height="2.7" rx="0.5" fill="#5274a8"/></g>
<g transform="translate(1017.0 431.2) rotate(1.2) scale(0.973 1) rotate(-16.6)" opacity="1.00"><rect x="-8.55" y="-5.25" width="3.9" height="3.9" fill="#22354f"/><rect x="-8.55" y="-1.95" width="3.9" height="3.9" fill="#22354f"/><rect x="-5.25" y="-5.25" width="3.9" height="3.9" fill="#22354f"/><rect x="-5.25" y="-1.95" width="3.9" height="3.9" fill="#22354f"/><rect x="-5.25" y="1.35" width="3.9" height="3.9" fill="#22354f"/><rect x="-1.95" y="-8.55" width="3.9" height="3.9" fill="#22354f"/><rect x="-1.95" y="-5.25" width="3.9" height="3.9" fill="#22354f"/><rect x="-1.95" y="-1.95" width="3.9" height="3.9" fill="#22354f"/><rect x="-1.95" y="1.35" width="3.9" height="3.9" fill="#22354f"/><rect x="-1.95" y="4.65" width="3.9" height="3.9" fill="#22354f"/><rect x="1.35" y="-5.25" width="3.9" height="3.9" fill="#22354f"/><rect x="1.35" y="-1.95" width="3.9" height="3.9" fill="#22354f"/><rect x="1.35" y="1.35" width="3.9" height="3.9" fill="#22354f"/><rect x="1.35" y="4.65" width="3.9" height="3.9" fill="#22354f"/><rect x="4.65" y="-5.25" width="3.9" height="3.9" fill="#22354f"/><rect x="4.65" y="-1.95" width="3.9" height="3.9" fill="#22354f"/><rect x="-7.95" y="-4.65" width="2.7" height="2.7" rx="0.5" fill="#5274a8"/><rect x="-7.95" y="-1.35" width="2.7" height="2.7" rx="0.5" fill="#5274a8"/><rect x="-4.65" y="-4.65" width="2.7" height="2.7" rx="0.5" fill="#5274a8"/><rect x="-4.65" y="-1.35" width="2.7" height="2.7" rx="0.5" fill="#5274a8"/><rect x="-4.65" y="1.95" width="2.7" height="2.7" rx="0.5" fill="#5274a8"/><rect x="-1.35" y="-7.95" width="2.7" height="2.7" rx="0.5" fill="#5274a8"/><rect x="-1.35" y="-4.65" width="2.7" height="2.7" rx="0.5" fill="#5274a8"/><rect x="-1.35" y="-1.35" width="2.7" height="2.7" rx="0.5" fill="#5274a8"/><rect x="-1.35" y="1.95" width="2.7" height="2.7" rx="0.5" fill="#5274a8"/><rect x="-1.35" y="5.25" width="2.7" height="2.7" rx="0.5" fill="#5274a8"/><rect x="1.95" y="-4.65" width="2.7" height="2.7" rx="0.5" fill="#5274a8"/><rect x="1.95" y="-1.35" width="2.7" height="2.7" rx="0.5" fill="#5274a8"/><rect x="1.95" y="1.95" width="2.7" height="2.7" rx="0.5" fill="#5274a8"/><rect x="1.95" y="5.25" width="2.7" height="2.7" rx="0.5" fill="#5274a8"/><rect x="5.25" y="-4.65" width="2.7" height="2.7" rx="0.5" fill="#5274a8"/><rect x="5.25" y="-1.35" width="2.7" height="2.7" rx="0.5" fill="#5274a8"/></g>
<g transform="translate(1055.6 468.2) rotate(23.1) scale(0.898 1) rotate(-31.2)" opacity="1.00"><rect x="-8.55" y="-1.95" width="3.9" height="3.9" fill="#22354f"/><rect x="-5.25" y="-5.25" width="3.9" height="3.9" fill="#22354f"/><rect x="-5.25" y="-1.95" width="3.9" height="3.9" fill="#22354f"/><rect x="-5.25" y="1.35" width="3.9" height="3.9" fill="#22354f"/><rect x="-1.95" y="-8.55" width="3.9" height="3.9" fill="#22354f"/><rect x="-1.95" y="-5.25" width="3.9" height="3.9" fill="#22354f"/><rect x="-1.95" y="-1.95" width="3.9" height="3.9" fill="#22354f"/><rect x="-1.95" y="1.35" width="3.9" height="3.9" fill="#22354f"/><rect x="-1.95" y="4.65" width="3.9" height="3.9" fill="#22354f"/><rect x="1.35" y="-8.55" width="3.9" height="3.9" fill="#22354f"/><rect x="1.35" y="-5.25" width="3.9" height="3.9" fill="#22354f"/><rect x="1.35" y="-1.95" width="3.9" height="3.9" fill="#22354f"/><rect x="1.35" y="1.35" width="3.9" height="3.9" fill="#22354f"/><rect x="4.65" y="-1.95" width="3.9" height="3.9" fill="#22354f"/><rect x="-7.95" y="-1.35" width="2.7" height="2.7" rx="0.5" fill="#5274a8"/><rect x="-4.65" y="-4.65" width="2.7" height="2.7" rx="0.5" fill="#5274a8"/><rect x="-4.65" y="-1.35" width="2.7" height="2.7" rx="0.5" fill="#5274a8"/><rect x="-4.65" y="1.95" width="2.7" height="2.7" rx="0.5" fill="#5274a8"/><rect x="-1.35" y="-7.95" width="2.7" height="2.7" rx="0.5" fill="#5274a8"/><rect x="-1.35" y="-4.65" width="2.7" height="2.7" rx="0.5" fill="#5274a8"/><rect x="-1.35" y="-1.35" width="2.7" height="2.7" rx="0.5" fill="#5274a8"/><rect x="-1.35" y="1.95" width="2.7" height="2.7" rx="0.5" fill="#5274a8"/><rect x="-1.35" y="5.25" width="2.7" height="2.7" rx="0.5" fill="#5274a8"/><rect x="1.95" y="-7.95" width="2.7" height="2.7" rx="0.5" fill="#5274a8"/><rect x="1.95" y="-4.65" width="2.7" height="2.7" rx="0.5" fill="#5274a8"/><rect x="1.95" y="-1.35" width="2.7" height="2.7" rx="0.5" fill="#5274a8"/><rect x="1.95" y="1.95" width="2.7" height="2.7" rx="0.5" fill="#5274a8"/><rect x="5.25" y="-1.35" width="2.7" height="2.7" rx="0.5" fill="#5274a8"/></g>
<g transform="translate(1007.8 485.1) rotate(53.0) scale(0.950 1) rotate(-30.3)" opacity="1.00"><rect x="-8.55" y="-1.95" width="3.9" height="3.9" fill="#22354f"/><rect x="-8.55" y="1.35" width="3.9" height="3.9" fill="#22354f"/><rect x="-5.25" y="-5.25" width="3.9" height="3.9" fill="#22354f"/><rect x="-5.25" y="-1.95" width="3.9" height="3.9" fill="#22354f"/><rect x="-5.25" y="1.35" width="3.9" height="3.9" fill="#22354f"/><rect x="-5.25" y="4.65" width="3.9" height="3.9" fill="#22354f"/><rect x="-1.95" y="-8.55" width="3.9" height="3.9" fill="#22354f"/><rect x="-1.95" y="-5.25" width="3.9" height="3.9" fill="#22354f"/><rect x="-1.95" y="-1.95" width="3.9" height="3.9" fill="#22354f"/><rect x="-1.95" y="1.35" width="3.9" height="3.9" fill="#22354f"/><rect x="-1.95" y="4.65" width="3.9" height="3.9" fill="#22354f"/><rect x="1.35" y="-5.25" width="3.9" height="3.9" fill="#22354f"/><rect x="1.35" y="-1.95" width="3.9" height="3.9" fill="#22354f"/><rect x="1.35" y="1.35" width="3.9" height="3.9" fill="#22354f"/><rect x="4.65" y="-1.95" width="3.9" height="3.9" fill="#22354f"/><rect x="-7.95" y="-1.35" width="2.7" height="2.7" rx="0.5" fill="#5274a8"/><rect x="-7.95" y="1.95" width="2.7" height="2.7" rx="0.5" fill="#5274a8"/><rect x="-4.65" y="-4.65" width="2.7" height="2.7" rx="0.5" fill="#5274a8"/><rect x="-4.65" y="-1.35" width="2.7" height="2.7" rx="0.5" fill="#5274a8"/><rect x="-4.65" y="1.95" width="2.7" height="2.7" rx="0.5" fill="#5274a8"/><rect x="-4.65" y="5.25" width="2.7" height="2.7" rx="0.5" fill="#5274a8"/><rect x="-1.35" y="-7.95" width="2.7" height="2.7" rx="0.5" fill="#5274a8"/><rect x="-1.35" y="-4.65" width="2.7" height="2.7" rx="0.5" fill="#5274a8"/><rect x="-1.35" y="-1.35" width="2.7" height="2.7" rx="0.5" fill="#5274a8"/><rect x="-1.35" y="1.95" width="2.7" height="2.7" rx="0.5" fill="#5274a8"/><rect x="-1.35" y="5.25" width="2.7" height="2.7" rx="0.5" fill="#5274a8"/><rect x="1.95" y="-4.65" width="2.7" height="2.7" rx="0.5" fill="#5274a8"/><rect x="1.95" y="-1.35" width="2.7" height="2.7" rx="0.5" fill="#5274a8"/><rect x="1.95" y="1.95" width="2.7" height="2.7" rx="0.5" fill="#5274a8"/><rect x="5.25" y="-1.35" width="2.7" height="2.7" rx="0.5" fill="#5274a8"/></g>
<g transform="translate(1103.4 485.1) rotate(21.9) scale(0.743 1) rotate(-4.1)" opacity="0.90"><rect x="-8.55" y="-5.25" width="3.9" height="3.9" fill="#22354f"/><rect x="-8.55" y="-1.95" width="3.9" height="3.9" fill="#22354f"/><rect x="-5.25" y="-5.25" width="3.9" height="3.9" fill="#22354f"/><rect x="-5.25" y="-1.95" width="3.9" height="3.9" fill="#22354f"/><rect x="-5.25" y="1.35" width="3.9" height="3.9" fill="#22354f"/><rect x="-5.25" y="4.65" width="3.9" height="3.9" fill="#22354f"/><rect x="-1.95" y="-8.55" width="3.9" height="3.9" fill="#22354f"/><rect x="-1.95" y="-5.25" width="3.9" height="3.9" fill="#22354f"/><rect x="-1.95" y="-1.95" width="3.9" height="3.9" fill="#22354f"/><rect x="-1.95" y="1.35" width="3.9" height="3.9" fill="#22354f"/><rect x="-1.95" y="4.65" width="3.9" height="3.9" fill="#22354f"/><rect x="1.35" y="-8.55" width="3.9" height="3.9" fill="#22354f"/><rect x="1.35" y="-5.25" width="3.9" height="3.9" fill="#22354f"/><rect x="1.35" y="-1.95" width="3.9" height="3.9" fill="#22354f"/><rect x="1.35" y="1.35" width="3.9" height="3.9" fill="#22354f"/><rect x="4.65" y="-1.95" width="3.9" height="3.9" fill="#22354f"/><rect x="4.65" y="1.35" width="3.9" height="3.9" fill="#22354f"/><rect x="-7.95" y="-4.65" width="2.7" height="2.7" rx="0.5" fill="#5274a8"/><rect x="-7.95" y="-1.35" width="2.7" height="2.7" rx="0.5" fill="#5274a8"/><rect x="-4.65" y="-4.65" width="2.7" height="2.7" rx="0.5" fill="#5274a8"/><rect x="-4.65" y="-1.35" width="2.7" height="2.7" rx="0.5" fill="#5274a8"/><rect x="-4.65" y="1.95" width="2.7" height="2.7" rx="0.5" fill="#5274a8"/><rect x="-4.65" y="5.25" width="2.7" height="2.7" rx="0.5" fill="#5274a8"/><rect x="-1.35" y="-7.95" width="2.7" height="2.7" rx="0.5" fill="#5274a8"/><rect x="-1.35" y="-4.65" width="2.7" height="2.7" rx="0.5" fill="#5274a8"/><rect x="-1.35" y="-1.35" width="2.7" height="2.7" rx="0.5" fill="#5274a8"/><rect x="-1.35" y="1.95" width="2.7" height="2.7" rx="0.5" fill="#5274a8"/><rect x="-1.35" y="5.25" width="2.7" height="2.7" rx="0.5" fill="#5274a8"/><rect x="1.95" y="-7.95" width="2.7" height="2.7" rx="0.5" fill="#5274a8"/><rect x="1.95" y="-4.65" width="2.7" height="2.7" rx="0.5" fill="#5274a8"/><rect x="1.95" y="-1.35" width="2.7" height="2.7" rx="0.5" fill="#5274a8"/><rect x="1.95" y="1.95" width="2.7" height="2.7" rx="0.5" fill="#5274a8"/><rect x="5.25" y="-1.35" width="2.7" height="2.7" rx="0.5" fill="#5274a8"/><rect x="5.25" y="1.95" width="2.7" height="2.7" rx="0.5" fill="#5274a8"/></g>
<g transform="translate(1151.2 460.5) rotate(9.3) scale(0.528 1) rotate(-32.4)" opacity="0.63"><rect x="-8.55" y="-5.25" width="3.9" height="3.9" fill="#22354f"/><rect x="-5.25" y="-5.25" width="3.9" height="3.9" fill="#22354f"/><rect x="-5.25" y="-1.95" width="3.9" height="3.9" fill="#22354f"/><rect x="-5.25" y="1.35" width="3.9" height="3.9" fill="#22354f"/><rect x="-5.25" y="4.65" width="3.9" height="3.9" fill="#22354f"/><rect x="-1.95" y="-8.55" width="3.9" height="3.9" fill="#22354f"/><rect x="-1.95" y="-5.25" width="3.9" height="3.9" fill="#22354f"/><rect x="-1.95" y="-1.95" width="3.9" height="3.9" fill="#22354f"/><rect x="-1.95" y="1.35" width="3.9" height="3.9" fill="#22354f"/><rect x="-1.95" y="4.65" width="3.9" height="3.9" fill="#22354f"/><rect x="1.35" y="-8.55" width="3.9" height="3.9" fill="#22354f"/><rect x="1.35" y="-5.25" width="3.9" height="3.9" fill="#22354f"/><rect x="1.35" y="-1.95" width="3.9" height="3.9" fill="#22354f"/><rect x="1.35" y="1.35" width="3.9" height="3.9" fill="#22354f"/><rect x="1.35" y="4.65" width="3.9" height="3.9" fill="#22354f"/><rect x="4.65" y="-5.25" width="3.9" height="3.9" fill="#22354f"/><rect x="4.65" y="-1.95" width="3.9" height="3.9" fill="#22354f"/><rect x="4.65" y="1.35" width="3.9" height="3.9" fill="#22354f"/><rect x="-7.95" y="-4.65" width="2.7" height="2.7" rx="0.5" fill="#5274a8"/><rect x="-4.65" y="-4.65" width="2.7" height="2.7" rx="0.5" fill="#5274a8"/><rect x="-4.65" y="-1.35" width="2.7" height="2.7" rx="0.5" fill="#5274a8"/><rect x="-4.65" y="1.95" width="2.7" height="2.7" rx="0.5" fill="#5274a8"/><rect x="-4.65" y="5.25" width="2.7" height="2.7" rx="0.5" fill="#5274a8"/><rect x="-1.35" y="-7.95" width="2.7" height="2.7" rx="0.5" fill="#5274a8"/><rect x="-1.35" y="-4.65" width="2.7" height="2.7" rx="0.5" fill="#5274a8"/><rect x="-1.35" y="-1.35" width="2.7" height="2.7" rx="0.5" fill="#5274a8"/><rect x="-1.35" y="1.95" width="2.7" height="2.7" rx="0.5" fill="#5274a8"/><rect x="-1.35" y="5.25" width="2.7" height="2.7" rx="0.5" fill="#5274a8"/><rect x="1.95" y="-7.95" width="2.7" height="2.7" rx="0.5" fill="#5274a8"/><rect x="1.95" y="-4.65" width="2.7" height="2.7" rx="0.5" fill="#5274a8"/><rect x="1.95" y="-1.35" width="2.7" height="2.7" rx="0.5" fill="#5274a8"/><rect x="1.95" y="1.95" width="2.7" height="2.7" rx="0.5" fill="#5274a8"/><rect x="1.95" y="5.25" width="2.7" height="2.7" rx="0.5" fill="#5274a8"/><rect x="5.25" y="-4.65" width="2.7" height="2.7" rx="0.5" fill="#5274a8"/><rect x="5.25" y="-1.35" width="2.7" height="2.7" rx="0.5" fill="#5274a8"/><rect x="5.25" y="1.95" width="2.7" height="2.7" rx="0.5" fill="#5274a8"/></g>
<g transform="translate(1061.8 531.4) rotate(46.7) scale(0.776 1) rotate(-42.5)" opacity="0.95"><rect x="-8.55" y="-5.25" width="3.9" height="3.9" fill="#22354f"/><rect x="-8.55" y="1.35" width="3.9" height="3.9" fill="#22354f"/><rect x="-5.25" y="-8.55" width="3.9" height="3.9" fill="#22354f"/><rect x="-5.25" y="-5.25" width="3.9" height="3.9" fill="#22354f"/><rect x="-5.25" y="-1.95" width="3.9" height="3.9" fill="#22354f"/><rect x="-5.25" y="1.35" width="3.9" height="3.9" fill="#22354f"/><rect x="-1.95" y="-5.25" width="3.9" height="3.9" fill="#22354f"/><rect x="-1.95" y="-1.95" width="3.9" height="3.9" fill="#22354f"/><rect x="-1.95" y="1.35" width="3.9" height="3.9" fill="#22354f"/><rect x="-1.95" y="4.65" width="3.9" height="3.9" fill="#22354f"/><rect x="1.35" y="-8.55" width="3.9" height="3.9" fill="#22354f"/><rect x="1.35" y="-5.25" width="3.9" height="3.9" fill="#22354f"/><rect x="1.35" y="-1.95" width="3.9" height="3.9" fill="#22354f"/><rect x="1.35" y="1.35" width="3.9" height="3.9" fill="#22354f"/><rect x="1.35" y="4.65" width="3.9" height="3.9" fill="#22354f"/><rect x="4.65" y="1.35" width="3.9" height="3.9" fill="#22354f"/><rect x="-7.95" y="-4.65" width="2.7" height="2.7" rx="0.5" fill="#5274a8"/><rect x="-7.95" y="1.95" width="2.7" height="2.7" rx="0.5" fill="#5274a8"/><rect x="-4.65" y="-7.95" width="2.7" height="2.7" rx="0.5" fill="#5274a8"/><rect x="-4.65" y="-4.65" width="2.7" height="2.7" rx="0.5" fill="#5274a8"/><rect x="-4.65" y="-1.35" width="2.7" height="2.7" rx="0.5" fill="#5274a8"/><rect x="-4.65" y="1.95" width="2.7" height="2.7" rx="0.5" fill="#5274a8"/><rect x="-1.35" y="-4.65" width="2.7" height="2.7" rx="0.5" fill="#5274a8"/><rect x="-1.35" y="-1.35" width="2.7" height="2.7" rx="0.5" fill="#5274a8"/><rect x="-1.35" y="1.95" width="2.7" height="2.7" rx="0.5" fill="#5274a8"/><rect x="-1.35" y="5.25" width="2.7" height="2.7" rx="0.5" fill="#5274a8"/><rect x="1.95" y="-7.95" width="2.7" height="2.7" rx="0.5" fill="#5274a8"/><rect x="1.95" y="-4.65" width="2.7" height="2.7" rx="0.5" fill="#5274a8"/><rect x="1.95" y="-1.35" width="2.7" height="2.7" rx="0.5" fill="#5274a8"/><rect x="1.95" y="1.95" width="2.7" height="2.7" rx="0.5" fill="#5274a8"/><rect x="1.95" y="5.25" width="2.7" height="2.7" rx="0.5" fill="#5274a8"/><rect x="5.25" y="1.95" width="2.7" height="2.7" rx="0.5" fill="#5274a8"/></g>
<g transform="translate(1012.4 539.1) rotate(67.1) scale(0.844 1) rotate(-44.0)" opacity="1.00"><rect x="-8.55" y="1.35" width="3.9" height="3.9" fill="#22354f"/><rect x="-5.25" y="-5.25" width="3.9" height="3.9" fill="#22354f"/><rect x="-5.25" y="-1.95" width="3.9" height="3.9" fill="#22354f"/><rect x="-5.25" y="1.35" width="3.9" height="3.9" fill="#22354f"/><rect x="-1.95" y="-8.55" width="3.9" height="3.9" fill="#22354f"/><rect x="-1.95" y="-5.25" width="3.9" height="3.9" fill="#22354f"/><rect x="-1.95" y="-1.95" width="3.9" height="3.9" fill="#22354f"/><rect x="-1.95" y="1.35" width="3.9" height="3.9" fill="#22354f"/><rect x="-1.95" y="4.65" width="3.9" height="3.9" fill="#22354f"/><rect x="1.35" y="-8.55" width="3.9" height="3.9" fill="#22354f"/><rect x="1.35" y="-5.25" width="3.9" height="3.9" fill="#22354f"/><rect x="1.35" y="-1.95" width="3.9" height="3.9" fill="#22354f"/><rect x="1.35" y="1.35" width="3.9" height="3.9" fill="#22354f"/><rect x="1.35" y="4.65" width="3.9" height="3.9" fill="#22354f"/><rect x="-7.95" y="1.95" width="2.7" height="2.7" rx="0.5" fill="#5274a8"/><rect x="-4.65" y="-4.65" width="2.7" height="2.7" rx="0.5" fill="#5274a8"/><rect x="-4.65" y="-1.35" width="2.7" height="2.7" rx="0.5" fill="#5274a8"/><rect x="-4.65" y="1.95" width="2.7" height="2.7" rx="0.5" fill="#5274a8"/><rect x="-1.35" y="-7.95" width="2.7" height="2.7" rx="0.5" fill="#5274a8"/><rect x="-1.35" y="-4.65" width="2.7" height="2.7" rx="0.5" fill="#5274a8"/><rect x="-1.35" y="-1.35" width="2.7" height="2.7" rx="0.5" fill="#5274a8"/><rect x="-1.35" y="1.95" width="2.7" height="2.7" rx="0.5" fill="#5274a8"/><rect x="-1.35" y="5.25" width="2.7" height="2.7" rx="0.5" fill="#5274a8"/><rect x="1.95" y="-7.95" width="2.7" height="2.7" rx="0.5" fill="#5274a8"/><rect x="1.95" y="-4.65" width="2.7" height="2.7" rx="0.5" fill="#5274a8"/><rect x="1.95" y="-1.35" width="2.7" height="2.7" rx="0.5" fill="#5274a8"/><rect x="1.95" y="1.95" width="2.7" height="2.7" rx="0.5" fill="#5274a8"/><rect x="1.95" y="5.25" width="2.7" height="2.7" rx="0.5" fill="#5274a8"/></g>
<g transform="translate(1125.0 519.0) rotate(29.3) scale(0.566 1) rotate(-33.2)" opacity="0.66"><rect x="-8.55" y="-5.25" width="3.9" height="3.9" fill="#22354f"/><rect x="-8.55" y="-1.95" width="3.9" height="3.9" fill="#22354f"/><rect x="-5.25" y="-5.25" width="3.9" height="3.9" fill="#22354f"/><rect x="-5.25" y="-1.95" width="3.9" height="3.9" fill="#22354f"/><rect x="-5.25" y="1.35" width="3.9" height="3.9" fill="#22354f"/><rect x="-5.25" y="4.65" width="3.9" height="3.9" fill="#22354f"/><rect x="-1.95" y="-8.55" width="3.9" height="3.9" fill="#22354f"/><rect x="-1.95" y="-5.25" width="3.9" height="3.9" fill="#22354f"/><rect x="-1.95" y="-1.95" width="3.9" height="3.9" fill="#22354f"/><rect x="-1.95" y="1.35" width="3.9" height="3.9" fill="#22354f"/><rect x="-1.95" y="4.65" width="3.9" height="3.9" fill="#22354f"/><rect x="1.35" y="-8.55" width="3.9" height="3.9" fill="#22354f"/><rect x="1.35" y="-5.25" width="3.9" height="3.9" fill="#22354f"/><rect x="1.35" y="-1.95" width="3.9" height="3.9" fill="#22354f"/><rect x="1.35" y="1.35" width="3.9" height="3.9" fill="#22354f"/><rect x="1.35" y="4.65" width="3.9" height="3.9" fill="#22354f"/><rect x="-7.95" y="-4.65" width="2.7" height="2.7" rx="0.5" fill="#5274a8"/><rect x="-7.95" y="-1.35" width="2.7" height="2.7" rx="0.5" fill="#5274a8"/><rect x="-4.65" y="-4.65" width="2.7" height="2.7" rx="0.5" fill="#5274a8"/><rect x="-4.65" y="-1.35" width="2.7" height="2.7" rx="0.5" fill="#5274a8"/><rect x="-4.65" y="1.95" width="2.7" height="2.7" rx="0.5" fill="#5274a8"/><rect x="-4.65" y="5.25" width="2.7" height="2.7" rx="0.5" fill="#5274a8"/><rect x="-1.35" y="-7.95" width="2.7" height="2.7" rx="0.5" fill="#5274a8"/><rect x="-1.35" y="-4.65" width="2.7" height="2.7" rx="0.5" fill="#5274a8"/><rect x="-1.35" y="-1.35" width="2.7" height="2.7" rx="0.5" fill="#5274a8"/><rect x="-1.35" y="1.95" width="2.7" height="2.7" rx="0.5" fill="#5274a8"/><rect x="-1.35" y="5.25" width="2.7" height="2.7" rx="0.5" fill="#5274a8"/><rect x="1.95" y="-7.95" width="2.7" height="2.7" rx="0.5" fill="#5274a8"/><rect x="1.95" y="-4.65" width="2.7" height="2.7" rx="0.5" fill="#5274a8"/><rect x="1.95" y="-1.35" width="2.7" height="2.7" rx="0.5" fill="#5274a8"/><rect x="1.95" y="1.95" width="2.7" height="2.7" rx="0.5" fill="#5274a8"/><rect x="1.95" y="5.25" width="2.7" height="2.7" rx="0.5" fill="#5274a8"/></g>
<g transform="translate(1088.0 557.6) rotate(46.3) scale(0.601 1) rotate(-56.6)" opacity="0.70"><rect x="-8.55" y="-5.25" width="3.9" height="3.9" fill="#22354f"/><rect x="-8.55" y="1.35" width="3.9" height="3.9" fill="#22354f"/><rect x="-5.25" y="-8.55" width="3.9" height="3.9" fill="#22354f"/><rect x="-5.25" y="-5.25" width="3.9" height="3.9" fill="#22354f"/><rect x="-5.25" y="-1.95" width="3.9" height="3.9" fill="#22354f"/><rect x="-5.25" y="1.35" width="3.9" height="3.9" fill="#22354f"/><rect x="-5.25" y="4.65" width="3.9" height="3.9" fill="#22354f"/><rect x="-1.95" y="-5.25" width="3.9" height="3.9" fill="#22354f"/><rect x="-1.95" y="-1.95" width="3.9" height="3.9" fill="#22354f"/><rect x="-1.95" y="1.35" width="3.9" height="3.9" fill="#22354f"/><rect x="-1.95" y="4.65" width="3.9" height="3.9" fill="#22354f"/><rect x="1.35" y="-5.25" width="3.9" height="3.9" fill="#22354f"/><rect x="1.35" y="-1.95" width="3.9" height="3.9" fill="#22354f"/><rect x="1.35" y="1.35" width="3.9" height="3.9" fill="#22354f"/><rect x="1.35" y="4.65" width="3.9" height="3.9" fill="#22354f"/><rect x="4.65" y="1.35" width="3.9" height="3.9" fill="#22354f"/><rect x="-7.95" y="-4.65" width="2.7" height="2.7" rx="0.5" fill="#5274a8"/><rect x="-7.95" y="1.95" width="2.7" height="2.7" rx="0.5" fill="#5274a8"/><rect x="-4.65" y="-7.95" width="2.7" height="2.7" rx="0.5" fill="#5274a8"/><rect x="-4.65" y="-4.65" width="2.7" height="2.7" rx="0.5" fill="#5274a8"/><rect x="-4.65" y="-1.35" width="2.7" height="2.7" rx="0.5" fill="#5274a8"/><rect x="-4.65" y="1.95" width="2.7" height="2.7" rx="0.5" fill="#5274a8"/><rect x="-4.65" y="5.25" width="2.7" height="2.7" rx="0.5" fill="#5274a8"/><rect x="-1.35" y="-4.65" width="2.7" height="2.7" rx="0.5" fill="#5274a8"/><rect x="-1.35" y="-1.35" width="2.7" height="2.7" rx="0.5" fill="#5274a8"/><rect x="-1.35" y="1.95" width="2.7" height="2.7" rx="0.5" fill="#5274a8"/><rect x="-1.35" y="5.25" width="2.7" height="2.7" rx="0.5" fill="#5274a8"/><rect x="1.95" y="-4.65" width="2.7" height="2.7" rx="0.5" fill="#5274a8"/><rect x="1.95" y="-1.35" width="2.7" height="2.7" rx="0.5" fill="#5274a8"/><rect x="1.95" y="1.95" width="2.7" height="2.7" rx="0.5" fill="#5274a8"/><rect x="1.95" y="5.25" width="2.7" height="2.7" rx="0.5" fill="#5274a8"/><rect x="5.25" y="1.95" width="2.7" height="2.7" rx="0.5" fill="#5274a8"/></g>
<g transform="translate(975.4 573.0) rotate(86.4) scale(0.761 1) rotate(-108.8)" opacity="0.93"><rect x="-8.55" y="-5.25" width="3.9" height="3.9" fill="#22354f"/><rect x="-8.55" y="-1.95" width="3.9" height="3.9" fill="#22354f"/><rect x="-5.25" y="-5.25" width="3.9" height="3.9" fill="#22354f"/><rect x="-5.25" y="-1.95" width="3.9" height="3.9" fill="#22354f"/><rect x="-5.25" y="1.35" width="3.9" height="3.9" fill="#22354f"/><rect x="-1.95" y="-8.55" width="3.9" height="3.9" fill="#22354f"/><rect x="-1.95" y="-5.25" width="3.9" height="3.9" fill="#22354f"/><rect x="-1.95" y="-1.95" width="3.9" height="3.9" fill="#22354f"/><rect x="-1.95" y="1.35" width="3.9" height="3.9" fill="#22354f"/><rect x="-1.95" y="4.65" width="3.9" height="3.9" fill="#22354f"/><rect x="1.35" y="-5.25" width="3.9" height="3.9" fill="#22354f"/><rect x="1.35" y="-1.95" width="3.9" height="3.9" fill="#22354f"/><rect x="1.35" y="1.35" width="3.9" height="3.9" fill="#22354f"/><rect x="4.65" y="-1.95" width="3.9" height="3.9" fill="#22354f"/><rect x="-7.95" y="-4.65" width="2.7" height="2.7" rx="0.5" fill="#5274a8"/><rect x="-7.95" y="-1.35" width="2.7" height="2.7" rx="0.5" fill="#5274a8"/><rect x="-4.65" y="-4.65" width="2.7" height="2.7" rx="0.5" fill="#5274a8"/><rect x="-4.65" y="-1.35" width="2.7" height="2.7" rx="0.5" fill="#5274a8"/><rect x="-4.65" y="1.95" width="2.7" height="2.7" rx="0.5" fill="#5274a8"/><rect x="-1.35" y="-7.95" width="2.7" height="2.7" rx="0.5" fill="#5274a8"/><rect x="-1.35" y="-4.65" width="2.7" height="2.7" rx="0.5" fill="#5274a8"/><rect x="-1.35" y="-1.35" width="2.7" height="2.7" rx="0.5" fill="#5274a8"/><rect x="-1.35" y="1.95" width="2.7" height="2.7" rx="0.5" fill="#5274a8"/><rect x="-1.35" y="5.25" width="2.7" height="2.7" rx="0.5" fill="#5274a8"/><rect x="1.95" y="-4.65" width="2.7" height="2.7" rx="0.5" fill="#5274a8"/><rect x="1.95" y="-1.35" width="2.7" height="2.7" rx="0.5" fill="#5274a8"/><rect x="1.95" y="1.95" width="2.7" height="2.7" rx="0.5" fill="#5274a8"/><rect x="5.25" y="-1.35" width="2.7" height="2.7" rx="0.5" fill="#5274a8"/></g>
<g transform="translate(1030.9 574.6) rotate(65.9) scale(0.697 1) rotate(-57.7)" opacity="0.82"><rect x="-8.55" y="-1.95" width="3.9" height="3.9" fill="#22354f"/><rect x="-8.55" y="1.35" width="3.9" height="3.9" fill="#22354f"/><rect x="-5.25" y="-8.55" width="3.9" height="3.9" fill="#22354f"/><rect x="-5.25" y="-5.25" width="3.9" height="3.9" fill="#22354f"/><rect x="-5.25" y="-1.95" width="3.9" height="3.9" fill="#22354f"/><rect x="-5.25" y="1.35" width="3.9" height="3.9" fill="#22354f"/><rect x="-5.25" y="4.65" width="3.9" height="3.9" fill="#22354f"/><rect x="-1.95" y="-8.55" width="3.9" height="3.9" fill="#22354f"/><rect x="-1.95" y="-5.25" width="3.9" height="3.9" fill="#22354f"/><rect x="-1.95" y="-1.95" width="3.9" height="3.9" fill="#22354f"/><rect x="-1.95" y="1.35" width="3.9" height="3.9" fill="#22354f"/><rect x="-1.95" y="4.65" width="3.9" height="3.9" fill="#22354f"/><rect x="1.35" y="-5.25" width="3.9" height="3.9" fill="#22354f"/><rect x="1.35" y="-1.95" width="3.9" height="3.9" fill="#22354f"/><rect x="1.35" y="1.35" width="3.9" height="3.9" fill="#22354f"/><rect x="4.65" y="-5.25" width="3.9" height="3.9" fill="#22354f"/><rect x="4.65" y="-1.95" width="3.9" height="3.9" fill="#22354f"/><rect x="-7.95" y="-1.35" width="2.7" height="2.7" rx="0.5" fill="#5274a8"/><rect x="-7.95" y="1.95" width="2.7" height="2.7" rx="0.5" fill="#5274a8"/><rect x="-4.65" y="-7.95" width="2.7" height="2.7" rx="0.5" fill="#5274a8"/><rect x="-4.65" y="-4.65" width="2.7" height="2.7" rx="0.5" fill="#5274a8"/><rect x="-4.65" y="-1.35" width="2.7" height="2.7" rx="0.5" fill="#5274a8"/><rect x="-4.65" y="1.95" width="2.7" height="2.7" rx="0.5" fill="#5274a8"/><rect x="-4.65" y="5.25" width="2.7" height="2.7" rx="0.5" fill="#5274a8"/><rect x="-1.35" y="-7.95" width="2.7" height="2.7" rx="0.5" fill="#5274a8"/><rect x="-1.35" y="-4.65" width="2.7" height="2.7" rx="0.5" fill="#5274a8"/><rect x="-1.35" y="-1.35" width="2.7" height="2.7" rx="0.5" fill="#5274a8"/><rect x="-1.35" y="1.95" width="2.7" height="2.7" rx="0.5" fill="#5274a8"/><rect x="-1.35" y="5.25" width="2.7" height="2.7" rx="0.5" fill="#5274a8"/><rect x="1.95" y="-4.65" width="2.7" height="2.7" rx="0.5" fill="#5274a8"/><rect x="1.95" y="-1.35" width="2.7" height="2.7" rx="0.5" fill="#5274a8"/><rect x="1.95" y="1.95" width="2.7" height="2.7" rx="0.5" fill="#5274a8"/><rect x="5.25" y="-4.65" width="2.7" height="2.7" rx="0.5" fill="#5274a8"/><rect x="5.25" y="-1.35" width="2.7" height="2.7" rx="0.5" fill="#5274a8"/></g>
<g transform="translate(1123.4 560.7) rotate(39.7) scale(0.377 1) rotate(-23.7)" opacity="0.51"><rect x="-8.55" y="-1.95" width="3.9" height="3.9" fill="#22354f"/><rect x="-5.25" y="-5.25" width="3.9" height="3.9" fill="#22354f"/><rect x="-5.25" y="-1.95" width="3.9" height="3.9" fill="#22354f"/><rect x="-5.25" y="1.35" width="3.9" height="3.9" fill="#22354f"/><rect x="-1.95" y="-8.55" width="3.9" height="3.9" fill="#22354f"/><rect x="-1.95" y="-5.25" width="3.9" height="3.9" fill="#22354f"/><rect x="-1.95" y="-1.95" width="3.9" height="3.9" fill="#22354f"/><rect x="-1.95" y="1.35" width="3.9" height="3.9" fill="#22354f"/><rect x="-1.95" y="4.65" width="3.9" height="3.9" fill="#22354f"/><rect x="1.35" y="-8.55" width="3.9" height="3.9" fill="#22354f"/><rect x="1.35" y="-5.25" width="3.9" height="3.9" fill="#22354f"/><rect x="1.35" y="-1.95" width="3.9" height="3.9" fill="#22354f"/><rect x="1.35" y="1.35" width="3.9" height="3.9" fill="#22354f"/><rect x="4.65" y="-5.25" width="3.9" height="3.9" fill="#22354f"/><rect x="-7.95" y="-1.35" width="2.7" height="2.7" rx="0.5" fill="#5274a8"/><rect x="-4.65" y="-4.65" width="2.7" height="2.7" rx="0.5" fill="#5274a8"/><rect x="-4.65" y="-1.35" width="2.7" height="2.7" rx="0.5" fill="#5274a8"/><rect x="-4.65" y="1.95" width="2.7" height="2.7" rx="0.5" fill="#5274a8"/><rect x="-1.35" y="-7.95" width="2.7" height="2.7" rx="0.5" fill="#5274a8"/><rect x="-1.35" y="-4.65" width="2.7" height="2.7" rx="0.5" fill="#5274a8"/><rect x="-1.35" y="-1.35" width="2.7" height="2.7" rx="0.5" fill="#5274a8"/><rect x="-1.35" y="1.95" width="2.7" height="2.7" rx="0.5" fill="#5274a8"/><rect x="-1.35" y="5.25" width="2.7" height="2.7" rx="0.5" fill="#5274a8"/><rect x="1.95" y="-7.95" width="2.7" height="2.7" rx="0.5" fill="#5274a8"/><rect x="1.95" y="-4.65" width="2.7" height="2.7" rx="0.5" fill="#5274a8"/><rect x="1.95" y="-1.35" width="2.7" height="2.7" rx="0.5" fill="#5274a8"/><rect x="1.95" y="1.95" width="2.7" height="2.7" rx="0.5" fill="#5274a8"/><rect x="5.25" y="-4.65" width="2.7" height="2.7" rx="0.5" fill="#5274a8"/></g>
<g transform="translate(1051.0 602.3) rotate(63.8) scale(0.493 1) rotate(-50.5)" opacity="0.60"><rect x="-8.55" y="-5.25" width="3.9" height="3.9" fill="#22354f"/><rect x="-8.55" y="-1.95" width="3.9" height="3.9" fill="#22354f"/><rect x="-5.25" y="-5.25" width="3.9" height="3.9" fill="#22354f"/><rect x="-5.25" y="-1.95" width="3.9" height="3.9" fill="#22354f"/><rect x="-5.25" y="1.35" width="3.9" height="3.9" fill="#22354f"/><rect x="-1.95" y="-8.55" width="3.9" height="3.9" fill="#22354f"/><rect x="-1.95" y="-5.25" width="3.9" height="3.9" fill="#22354f"/><rect x="-1.95" y="-1.95" width="3.9" height="3.9" fill="#22354f"/><rect x="-1.95" y="1.35" width="3.9" height="3.9" fill="#22354f"/><rect x="1.35" y="-5.25" width="3.9" height="3.9" fill="#22354f"/><rect x="1.35" y="-1.95" width="3.9" height="3.9" fill="#22354f"/><rect x="1.35" y="1.35" width="3.9" height="3.9" fill="#22354f"/><rect x="1.35" y="4.65" width="3.9" height="3.9" fill="#22354f"/><rect x="4.65" y="-1.95" width="3.9" height="3.9" fill="#22354f"/><rect x="4.65" y="1.35" width="3.9" height="3.9" fill="#22354f"/><rect x="-7.95" y="-4.65" width="2.7" height="2.7" rx="0.5" fill="#5274a8"/><rect x="-7.95" y="-1.35" width="2.7" height="2.7" rx="0.5" fill="#5274a8"/><rect x="-4.65" y="-4.65" width="2.7" height="2.7" rx="0.5" fill="#5274a8"/><rect x="-4.65" y="-1.35" width="2.7" height="2.7" rx="0.5" fill="#5274a8"/><rect x="-4.65" y="1.95" width="2.7" height="2.7" rx="0.5" fill="#5274a8"/><rect x="-1.35" y="-7.95" width="2.7" height="2.7" rx="0.5" fill="#5274a8"/><rect x="-1.35" y="-4.65" width="2.7" height="2.7" rx="0.5" fill="#5274a8"/><rect x="-1.35" y="-1.35" width="2.7" height="2.7" rx="0.5" fill="#5274a8"/><rect x="-1.35" y="1.95" width="2.7" height="2.7" rx="0.5" fill="#5274a8"/><rect x="1.95" y="-4.65" width="2.7" height="2.7" rx="0.5" fill="#5274a8"/><rect x="1.95" y="-1.35" width="2.7" height="2.7" rx="0.5" fill="#5274a8"/><rect x="1.95" y="1.95" width="2.7" height="2.7" rx="0.5" fill="#5274a8"/><rect x="1.95" y="5.25" width="2.7" height="2.7" rx="0.5" fill="#5274a8"/><rect x="5.25" y="-1.35" width="2.7" height="2.7" rx="0.5" fill="#5274a8"/><rect x="5.25" y="1.95" width="2.7" height="2.7" rx="0.5" fill="#5274a8"/></g>
<g transform="translate(998.5 610.0) rotate(79.9) scale(0.560 1) rotate(-69.0)" opacity="0.66"><rect x="-5.25" y="-8.55" width="3.9" height="3.9" fill="#22354f"/><rect x="-5.25" y="-5.25" width="3.9" height="3.9" fill="#22354f"/><rect x="-5.25" y="-1.95" width="3.9" height="3.9" fill="#22354f"/><rect x="-5.25" y="1.35" width="3.9" height="3.9" fill="#22354f"/><rect x="-1.95" y="-8.55" width="3.9" height="3.9" fill="#22354f"/><rect x="-1.95" y="-5.25" width="3.9" height="3.9" fill="#22354f"/><rect x="-1.95" y="-1.95" width="3.9" height="3.9" fill="#22354f"/><rect x="-1.95" y="1.35" width="3.9" height="3.9" fill="#22354f"/><rect x="-1.95" y="4.65" width="3.9" height="3.9" fill="#22354f"/><rect x="1.35" y="-5.25" width="3.9" height="3.9" fill="#22354f"/><rect x="1.35" y="-1.95" width="3.9" height="3.9" fill="#22354f"/><rect x="1.35" y="1.35" width="3.9" height="3.9" fill="#22354f"/><rect x="4.65" y="-5.25" width="3.9" height="3.9" fill="#22354f"/><rect x="4.65" y="-1.95" width="3.9" height="3.9" fill="#22354f"/><rect x="-4.65" y="-7.95" width="2.7" height="2.7" rx="0.5" fill="#5274a8"/><rect x="-4.65" y="-4.65" width="2.7" height="2.7" rx="0.5" fill="#5274a8"/><rect x="-4.65" y="-1.35" width="2.7" height="2.7" rx="0.5" fill="#5274a8"/><rect x="-4.65" y="1.95" width="2.7" height="2.7" rx="0.5" fill="#5274a8"/><rect x="-1.35" y="-7.95" width="2.7" height="2.7" rx="0.5" fill="#5274a8"/><rect x="-1.35" y="-4.65" width="2.7" height="2.7" rx="0.5" fill="#5274a8"/><rect x="-1.35" y="-1.35" width="2.7" height="2.7" rx="0.5" fill="#5274a8"/><rect x="-1.35" y="1.95" width="2.7" height="2.7" rx="0.5" fill="#5274a8"/><rect x="-1.35" y="5.25" width="2.7" height="2.7" rx="0.5" fill="#5274a8"/><rect x="1.95" y="-4.65" width="2.7" height="2.7" rx="0.5" fill="#5274a8"/><rect x="1.95" y="-1.35" width="2.7" height="2.7" rx="0.5" fill="#5274a8"/><rect x="1.95" y="1.95" width="2.7" height="2.7" rx="0.5" fill="#5274a8"/><rect x="5.25" y="-4.65" width="2.7" height="2.7" rx="0.5" fill="#5274a8"/><rect x="5.25" y="-1.35" width="2.7" height="2.7" rx="0.5" fill="#5274a8"/></g>
<g transform="translate(1089.5 602.3) rotate(54.4) scale(0.350 1) rotate(-60.1)" opacity="0.46"><rect x="-8.55" y="-1.95" width="3.9" height="3.9" fill="#22354f"/><rect x="-5.25" y="-8.55" width="3.9" height="3.9" fill="#22354f"/><rect x="-5.25" y="-5.25" width="3.9" height="3.9" fill="#22354f"/><rect x="-5.25" y="-1.95" width="3.9" height="3.9" fill="#22354f"/><rect x="-5.25" y="1.35" width="3.9" height="3.9" fill="#22354f"/><rect x="-5.25" y="4.65" width="3.9" height="3.9" fill="#22354f"/><rect x="-1.95" y="-8.55" width="3.9" height="3.9" fill="#22354f"/><rect x="-1.95" y="-5.25" width="3.9" height="3.9" fill="#22354f"/><rect x="-1.95" y="-1.95" width="3.9" height="3.9" fill="#22354f"/><rect x="-1.95" y="1.35" width="3.9" height="3.9" fill="#22354f"/><rect x="-1.95" y="4.65" width="3.9" height="3.9" fill="#22354f"/><rect x="1.35" y="-5.25" width="3.9" height="3.9" fill="#22354f"/><rect x="1.35" y="-1.95" width="3.9" height="3.9" fill="#22354f"/><rect x="1.35" y="1.35" width="3.9" height="3.9" fill="#22354f"/><rect x="4.65" y="-1.95" width="3.9" height="3.9" fill="#22354f"/><rect x="4.65" y="1.35" width="3.9" height="3.9" fill="#22354f"/><rect x="-7.95" y="-1.35" width="2.7" height="2.7" rx="0.5" fill="#5274a8"/><rect x="-4.65" y="-7.95" width="2.7" height="2.7" rx="0.5" fill="#5274a8"/><rect x="-4.65" y="-4.65" width="2.7" height="2.7" rx="0.5" fill="#5274a8"/><rect x="-4.65" y="-1.35" width="2.7" height="2.7" rx="0.5" fill="#5274a8"/><rect x="-4.65" y="1.95" width="2.7" height="2.7" rx="0.5" fill="#5274a8"/><rect x="-4.65" y="5.25" width="2.7" height="2.7" rx="0.5" fill="#5274a8"/><rect x="-1.35" y="-7.95" width="2.7" height="2.7" rx="0.5" fill="#5274a8"/><rect x="-1.35" y="-4.65" width="2.7" height="2.7" rx="0.5" fill="#5274a8"/><rect x="-1.35" y="-1.35" width="2.7" height="2.7" rx="0.5" fill="#5274a8"/><rect x="-1.35" y="1.95" width="2.7" height="2.7" rx="0.5" fill="#5274a8"/><rect x="-1.35" y="5.25" width="2.7" height="2.7" rx="0.5" fill="#5274a8"/><rect x="1.95" y="-4.65" width="2.7" height="2.7" rx="0.5" fill="#5274a8"/><rect x="1.95" y="-1.35" width="2.7" height="2.7" rx="0.5" fill="#5274a8"/><rect x="1.95" y="1.95" width="2.7" height="2.7" rx="0.5" fill="#5274a8"/><rect x="5.25" y="-1.35" width="2.7" height="2.7" rx="0.5" fill="#5274a8"/><rect x="5.25" y="1.95" width="2.7" height="2.7" rx="0.5" fill="#5274a8"/></g>
<g transform="translate(983.1 636.2) rotate(85.3) scale(0.350 1) rotate(-92.2)" opacity="0.49"><rect x="-8.55" y="-1.95" width="3.9" height="3.9" fill="#22354f"/><rect x="-5.25" y="-8.55" width="3.9" height="3.9" fill="#22354f"/><rect x="-5.25" y="-5.25" width="3.9" height="3.9" fill="#22354f"/><rect x="-5.25" y="-1.95" width="3.9" height="3.9" fill="#22354f"/><rect x="-5.25" y="1.35" width="3.9" height="3.9" fill="#22354f"/><rect x="-1.95" y="-8.55" width="3.9" height="3.9" fill="#22354f"/><rect x="-1.95" y="-5.25" width="3.9" height="3.9" fill="#22354f"/><rect x="-1.95" y="-1.95" width="3.9" height="3.9" fill="#22354f"/><rect x="-1.95" y="1.35" width="3.9" height="3.9" fill="#22354f"/><rect x="-1.95" y="4.65" width="3.9" height="3.9" fill="#22354f"/><rect x="1.35" y="-8.55" width="3.9" height="3.9" fill="#22354f"/><rect x="1.35" y="-5.25" width="3.9" height="3.9" fill="#22354f"/><rect x="1.35" y="-1.95" width="3.9" height="3.9" fill="#22354f"/><rect x="1.35" y="1.35" width="3.9" height="3.9" fill="#22354f"/><rect x="1.35" y="4.65" width="3.9" height="3.9" fill="#22354f"/><rect x="4.65" y="-5.25" width="3.9" height="3.9" fill="#22354f"/><rect x="4.65" y="-1.95" width="3.9" height="3.9" fill="#22354f"/><rect x="-7.95" y="-1.35" width="2.7" height="2.7" rx="0.5" fill="#5274a8"/><rect x="-4.65" y="-7.95" width="2.7" height="2.7" rx="0.5" fill="#5274a8"/><rect x="-4.65" y="-4.65" width="2.7" height="2.7" rx="0.5" fill="#5274a8"/><rect x="-4.65" y="-1.35" width="2.7" height="2.7" rx="0.5" fill="#5274a8"/><rect x="-4.65" y="1.95" width="2.7" height="2.7" rx="0.5" fill="#5274a8"/><rect x="-1.35" y="-7.95" width="2.7" height="2.7" rx="0.5" fill="#5274a8"/><rect x="-1.35" y="-4.65" width="2.7" height="2.7" rx="0.5" fill="#5274a8"/><rect x="-1.35" y="-1.35" width="2.7" height="2.7" rx="0.5" fill="#5274a8"/><rect x="-1.35" y="1.95" width="2.7" height="2.7" rx="0.5" fill="#5274a8"/><rect x="-1.35" y="5.25" width="2.7" height="2.7" rx="0.5" fill="#5274a8"/><rect x="1.95" y="-7.95" width="2.7" height="2.7" rx="0.5" fill="#5274a8"/><rect x="1.95" y="-4.65" width="2.7" height="2.7" rx="0.5" fill="#5274a8"/><rect x="1.95" y="-1.35" width="2.7" height="2.7" rx="0.5" fill="#5274a8"/><rect x="1.95" y="1.95" width="2.7" height="2.7" rx="0.5" fill="#5274a8"/><rect x="1.95" y="5.25" width="2.7" height="2.7" rx="0.5" fill="#5274a8"/><rect x="5.25" y="-4.65" width="2.7" height="2.7" rx="0.5" fill="#5274a8"/><rect x="5.25" y="-1.35" width="2.7" height="2.7" rx="0.5" fill="#5274a8"/></g>
<g transform="translate(1172.8 465.0) rotate(9.6) scale(0.350 1) rotate(-21.3)" opacity="0.48"><rect x="-8.55" y="-5.25" width="3.9" height="3.9" fill="#22354f"/><rect x="-5.25" y="-8.55" width="3.9" height="3.9" fill="#22354f"/><rect x="-5.25" y="-5.25" width="3.9" height="3.9" fill="#22354f"/><rect x="-5.25" y="-1.95" width="3.9" height="3.9" fill="#22354f"/><rect x="-5.25" y="1.35" width="3.9" height="3.9" fill="#22354f"/><rect x="-1.95" y="-5.25" width="3.9" height="3.9" fill="#22354f"/><rect x="-1.95" y="-1.95" width="3.9" height="3.9" fill="#22354f"/><rect x="-1.95" y="1.35" width="3.9" height="3.9" fill="#22354f"/><rect x="1.35" y="-8.55" width="3.9" height="3.9" fill="#22354f"/><rect x="1.35" y="-5.25" width="3.9" height="3.9" fill="#22354f"/><rect x="1.35" y="-1.95" width="3.9" height="3.9" fill="#22354f"/><rect x="1.35" y="1.35" width="3.9" height="3.9" fill="#22354f"/><rect x="4.65" y="-5.25" width="3.9" height="3.9" fill="#22354f"/><rect x="4.65" y="-1.95" width="3.9" height="3.9" fill="#22354f"/><rect x="4.65" y="1.35" width="3.9" height="3.9" fill="#22354f"/><rect x="-7.95" y="-4.65" width="2.7" height="2.7" rx="0.5" fill="#5274a8"/><rect x="-4.65" y="-7.95" width="2.7" height="2.7" rx="0.5" fill="#5274a8"/><rect x="-4.65" y="-4.65" width="2.7" height="2.7" rx="0.5" fill="#5274a8"/><rect x="-4.65" y="-1.35" width="2.7" height="2.7" rx="0.5" fill="#5274a8"/><rect x="-4.65" y="1.95" width="2.7" height="2.7" rx="0.5" fill="#5274a8"/><rect x="-1.35" y="-4.65" width="2.7" height="2.7" rx="0.5" fill="#5274a8"/><rect x="-1.35" y="-1.35" width="2.7" height="2.7" rx="0.5" fill="#5274a8"/><rect x="-1.35" y="1.95" width="2.7" height="2.7" rx="0.5" fill="#5274a8"/><rect x="1.95" y="-7.95" width="2.7" height="2.7" rx="0.5" fill="#5274a8"/><rect x="1.95" y="-4.65" width="2.7" height="2.7" rx="0.5" fill="#5274a8"/><rect x="1.95" y="-1.35" width="2.7" height="2.7" rx="0.5" fill="#5274a8"/><rect x="1.95" y="1.95" width="2.7" height="2.7" rx="0.5" fill="#5274a8"/><rect x="5.25" y="-4.65" width="2.7" height="2.7" rx="0.5" fill="#5274a8"/><rect x="5.25" y="-1.35" width="2.7" height="2.7" rx="0.5" fill="#5274a8"/><rect x="5.25" y="1.95" width="2.7" height="2.7" rx="0.5" fill="#5274a8"/></g>
<g transform="translate(1105.0 487.0) rotate(0.0) scale(0.80 1)" fill="none" stroke="#05090f" stroke-opacity="0.42"><circle r="16.0" stroke-width="2.4" stroke-dasharray="16 4"/><circle r="27.0" stroke-width="2.2" stroke-dasharray="17 6"/><circle r="38.0" stroke-width="2.0" stroke-dasharray="29 8"/><circle r="49.0" stroke-width="1.9" stroke-dasharray="28 4"/><circle r="60.0" stroke-width="1.7" stroke-dasharray="21 4"/><circle r="71.0" stroke-width="1.5" stroke-dasharray="27 6"/><circle r="82.0" stroke-width="1.3" stroke-dasharray="21 8"/></g>
<g transform="translate(806.0 497.0) rotate(0.0) scale(0.78 1)" fill="none" stroke="#05090f" stroke-opacity="0.40"><circle r="18.0" stroke-width="2.2" stroke-dasharray="17 9"/><circle r="29.0" stroke-width="2.1" stroke-dasharray="23 5"/><circle r="40.0" stroke-width="2.0" stroke-dasharray="22 7"/><circle r="51.0" stroke-width="1.8" stroke-dasharray="22 5"/><circle r="62.0" stroke-width="1.6" stroke-dasharray="22 8"/><circle r="73.0" stroke-width="1.4" stroke-dasharray="22 4"/></g>
<g transform="translate(945.0 238.0) rotate(0.0) scale(1.00 1)" fill="none" stroke="#05090f" stroke-opacity="0.30"><circle r="18.0" stroke-width="2.0" stroke-dasharray="28 4"/><circle r="29.0" stroke-width="1.8" stroke-dasharray="19 4"/><circle r="40.0" stroke-width="1.6" stroke-dasharray="21 4"/><circle r="51.0" stroke-width="1.4" stroke-dasharray="23 7"/><circle r="62.0" stroke-width="1.2" stroke-dasharray="20 5"/></g>
<rect x="984.8" y="386.6" width="2.1" height="1.3" fill="#05090f" fill-opacity="0.55"/>
<rect x="979.2" y="353.1" width="1.9" height="0.8" fill="#05090f" fill-opacity="0.55"/>
<rect x="1004.0" y="383.2" width="1.9" height="1.1" fill="#05090f" fill-opacity="0.55"/>
<rect x="975.8" y="531.7" width="1.5" height="0.8" fill="#05090f" fill-opacity="0.55"/>
<rect x="953.8" y="374.7" width="1.2" height="1.2" fill="#05090f" fill-opacity="0.55"/>
<rect x="959.5" y="370.9" width="2.2" height="1.4" fill="#05090f" fill-opacity="0.55"/>
<rect x="974.2" y="476.6" width="2.4" height="1.1" fill="#05090f" fill-opacity="0.55"/>
<rect x="973.6" y="338.6" width="1.7" height="0.8" fill="#05090f" fill-opacity="0.55"/>
<rect x="978.9" y="498.4" width="2.8" height="1.5" fill="#05090f" fill-opacity="0.55"/>
<rect x="975.0" y="518.3" width="1.8" height="1.1" fill="#05090f" fill-opacity="0.55"/>
<rect x="970.9" y="337.2" width="2.0" height="1.2" fill="#05090f" fill-opacity="0.55"/>
<rect x="971.1" y="423.9" width="2.6" height="1.3" fill="#05090f" fill-opacity="0.55"/>
<rect x="984.8" y="480.2" width="1.8" height="1.0" fill="#05090f" fill-opacity="0.55"/>
<rect x="989.3" y="557.3" width="2.3" height="1.1" fill="#05090f" fill-opacity="0.55"/>
<rect x="997.0" y="533.2" width="1.8" height="0.8" fill="#05090f" fill-opacity="0.55"/>
<rect x="982.3" y="506.3" width="2.6" height="1.3" fill="#05090f" fill-opacity="0.55"/>
<rect x="964.0" y="546.7" width="1.9" height="0.9" fill="#05090f" fill-opacity="0.55"/>
<rect x="984.0" y="356.1" width="1.2" height="1.3" fill="#05090f" fill-opacity="0.55"/>
<rect x="959.1" y="359.9" width="1.1" height="0.9" fill="#05090f" fill-opacity="0.55"/>
<rect x="993.1" y="515.5" width="1.8" height="1.3" fill="#05090f" fill-opacity="0.55"/>
<rect x="995.5" y="369.5" width="1.7" height="0.9" fill="#05090f" fill-opacity="0.55"/>
<rect x="964.9" y="369.5" width="1.1" height="1.1" fill="#05090f" fill-opacity="0.55"/>
<rect x="975.6" y="515.1" width="1.6" height="1.5" fill="#05090f" fill-opacity="0.55"/>
<rect x="950.2" y="340.0" width="2.8" height="1.1" fill="#05090f" fill-opacity="0.55"/>
<rect x="959.5" y="349.8" width="2.4" height="1.4" fill="#05090f" fill-opacity="0.55"/>
<rect x="962.5" y="535.0" width="2.3" height="1.5" fill="#05090f" fill-opacity="0.55"/>
<rect x="961.0" y="375.1" width="1.9" height="1.3" fill="#05090f" fill-opacity="0.55"/>
<rect x="961.7" y="339.6" width="2.9" height="0.9" fill="#05090f" fill-opacity="0.55"/>
<rect x="970.0" y="553.3" width="2.6" height="1.0" fill="#05090f" fill-opacity="0.55"/>
<rect x="981.2" y="533.3" width="2.7" height="1.3" fill="#05090f" fill-opacity="0.55"/>
<rect x="968.9" y="419.7" width="1.9" height="1.5" fill="#05090f" fill-opacity="0.55"/>
<rect x="964.2" y="509.0" width="2.3" height="1.0" fill="#05090f" fill-opacity="0.55"/>
<rect x="975.1" y="414.5" width="2.0" height="0.9" fill="#05090f" fill-opacity="0.55"/>
<rect x="988.9" y="330.8" width="3.0" height="1.2" fill="#05090f" fill-opacity="0.55"/>
<rect x="956.6" y="518.4" width="2.7" height="1.4" fill="#05090f" fill-opacity="0.55"/>
<rect x="981.4" y="422.1" width="1.1" height="1.1" fill="#05090f" fill-opacity="0.55"/>
<rect x="958.3" y="446.0" width="2.3" height="0.8" fill="#05090f" fill-opacity="0.55"/>
<rect x="993.9" y="360.0" width="2.8" height="1.1" fill="#05090f" fill-opacity="0.55"/>
<rect x="973.9" y="503.0" width="2.8" height="1.3" fill="#05090f" fill-opacity="0.55"/>
<rect x="969.4" y="510.4" width="1.1" height="0.9" fill="#05090f" fill-opacity="0.55"/>
<rect x="958.8" y="355.2" width="1.3" height="1.5" fill="#05090f" fill-opacity="0.55"/>
<rect x="960.9" y="396.2" width="2.6" height="1.4" fill="#05090f" fill-opacity="0.55"/>
<rect x="966.3" y="380.9" width="2.7" height="1.3" fill="#05090f" fill-opacity="0.55"/>
<rect x="954.4" y="388.0" width="1.6" height="1.3" fill="#05090f" fill-opacity="0.55"/>
<rect x="987.8" y="388.5" width="2.9" height="1.2" fill="#05090f" fill-opacity="0.55"/>
<rect x="966.3" y="466.1" width="2.2" height="1.0" fill="#05090f" fill-opacity="0.55"/>
<rect x="968.5" y="422.8" width="2.3" height="1.0" fill="#05090f" fill-opacity="0.55"/>
<rect x="981.7" y="405.4" width="1.8" height="1.4" fill="#05090f" fill-opacity="0.55"/>
<rect x="972.8" y="341.2" width="2.7" height="1.6" fill="#05090f" fill-opacity="0.55"/>
<rect x="998.8" y="434.2" width="2.0" height="1.4" fill="#05090f" fill-opacity="0.55"/>
<rect x="983.5" y="453.2" width="2.7" height="1.4" fill="#05090f" fill-opacity="0.55"/>
<rect x="968.5" y="415.4" width="1.8" height="1.1" fill="#05090f" fill-opacity="0.55"/>
<rect x="982.6" y="348.7" width="1.5" height="1.3" fill="#05090f" fill-opacity="0.55"/>
<rect x="985.0" y="550.3" width="1.6" height="1.2" fill="#05090f" fill-opacity="0.55"/>
<rect x="961.6" y="530.2" width="2.9" height="1.5" fill="#05090f" fill-opacity="0.55"/>
<rect x="1008.8" y="498.6" width="2.5" height="1.0" fill="#05090f" fill-opacity="0.55"/>
<rect x="970.0" y="426.1" width="1.7" height="0.8" fill="#05090f" fill-opacity="0.55"/>
<rect x="994.0" y="442.3" width="2.2" height="0.8" fill="#05090f" fill-opacity="0.55"/>
<rect x="992.1" y="399.9" width="2.0" height="1.2" fill="#05090f" fill-opacity="0.55"/>
<rect x="981.1" y="425.0" width="1.6" height="0.9" fill="#05090f" fill-opacity="0.55"/>
<rect x="957.5" y="366.5" width="1.0" height="1.4" fill="#05090f" fill-opacity="0.55"/>
<rect x="994.6" y="492.7" width="1.9" height="0.9" fill="#05090f" fill-opacity="0.55"/>
<rect x="987.7" y="392.0" width="2.6" height="1.6" fill="#05090f" fill-opacity="0.55"/>
<rect x="991.3" y="342.9" width="2.6" height="1.5" fill="#05090f" fill-opacity="0.55"/>
<rect x="959.8" y="468.4" width="2.0" height="1.2" fill="#05090f" fill-opacity="0.55"/>
<rect x="964.7" y="368.0" width="1.0" height="0.8" fill="#05090f" fill-opacity="0.55"/>
<rect x="983.9" y="366.6" width="2.8" height="0.9" fill="#05090f" fill-opacity="0.55"/>
<rect x="976.4" y="470.9" width="2.3" height="1.0" fill="#05090f" fill-opacity="0.55"/>
<rect x="960.5" y="477.8" width="2.3" height="1.1" fill="#05090f" fill-opacity="0.55"/>
<rect x="983.8" y="471.0" width="2.0" height="0.9" fill="#05090f" fill-opacity="0.55"/>
<rect x="943.5" y="496.6" width="2.0" height="1.2" fill="#05090f" fill-opacity="0.55"/>
<rect x="943.1" y="416.3" width="1.9" height="1.5" fill="#05090f" fill-opacity="0.55"/>
<rect x="992.9" y="370.3" width="3.0" height="1.0" fill="#05090f" fill-opacity="0.55"/>
<rect x="984.9" y="478.1" width="1.2" height="1.5" fill="#05090f" fill-opacity="0.55"/>
<rect x="1004.9" y="390.6" width="1.1" height="1.3" fill="#05090f" fill-opacity="0.55"/>
<rect x="959.8" y="486.2" width="2.4" height="1.5" fill="#05090f" fill-opacity="0.55"/>
<rect x="986.5" y="543.6" width="2.8" height="0.9" fill="#05090f" fill-opacity="0.55"/>
<rect x="972.9" y="446.7" width="1.3" height="1.5" fill="#05090f" fill-opacity="0.55"/>
<rect x="980.1" y="366.6" width="2.8" height="1.0" fill="#05090f" fill-opacity="0.55"/>
<rect x="967.1" y="419.4" width="2.2" height="1.1" fill="#05090f" fill-opacity="0.55"/>
<rect x="993.9" y="555.8" width="2.7" height="1.2" fill="#05090f" fill-opacity="0.55"/>
<rect x="949.7" y="438.6" width="2.1" height="0.8" fill="#05090f" fill-opacity="0.55"/>
<rect x="1009.5" y="383.8" width="2.8" height="1.4" fill="#05090f" fill-opacity="0.55"/>
<rect x="980.8" y="420.1" width="2.2" height="1.3" fill="#05090f" fill-opacity="0.55"/>
<rect x="976.7" y="355.7" width="2.2" height="0.9" fill="#05090f" fill-opacity="0.55"/>
<rect x="978.2" y="554.8" width="2.4" height="0.8" fill="#05090f" fill-opacity="0.55"/>
<rect x="988.0" y="339.8" width="1.1" height="0.8" fill="#05090f" fill-opacity="0.55"/>
<rect x="990.4" y="527.0" width="2.5" height="1.0" fill="#05090f" fill-opacity="0.55"/>
<rect x="991.6" y="482.8" width="2.8" height="1.4" fill="#05090f" fill-opacity="0.55"/>
<rect x="970.1" y="493.6" width="1.8" height="1.0" fill="#05090f" fill-opacity="0.55"/>
<rect x="968.8" y="419.5" width="4.8" height="1" fill="#05090f" fill-opacity="0.7"/>
<rect x="982.2" y="412.7" width="1.8" height="1" fill="#05090f" fill-opacity="0.7"/>
<rect x="968.1" y="409.5" width="3.2" height="1" fill="#05090f" fill-opacity="0.7"/>
<rect x="979.9" y="425.9" width="3.8" height="1" fill="#05090f" fill-opacity="0.7"/>
<rect x="965.5" y="423.2" width="2.4" height="1" fill="#05090f" fill-opacity="0.7"/>
<rect x="954.3" y="429.2" width="1.7" height="1" fill="#05090f" fill-opacity="0.7"/>
<rect x="969.4" y="404.8" width="4.2" height="1" fill="#05090f" fill-opacity="0.7"/>
<rect x="958.9" y="413.9" width="2.5" height="1" fill="#05090f" fill-opacity="0.7"/>
<rect x="967.5" y="407.4" width="1.6" height="1" fill="#05090f" fill-opacity="0.7"/>
<rect x="963.5" y="417.7" width="3.1" height="1" fill="#05090f" fill-opacity="0.7"/>
<rect x="980.3" y="420.3" width="4.0" height="1" fill="#05090f" fill-opacity="0.7"/>
<rect x="974.1" y="411.1" width="2.5" height="1" fill="#05090f" fill-opacity="0.7"/>
<rect x="956.8" y="420.9" width="2.5" height="1" fill="#05090f" fill-opacity="0.7"/>
<rect x="968.0" y="416.0" width="2.7" height="1" fill="#05090f" fill-opacity="0.7"/>
<rect x="980.7" y="423.2" width="4.4" height="1" fill="#05090f" fill-opacity="0.7"/>
<rect x="981.1" y="416.4" width="4.9" height="1" fill="#05090f" fill-opacity="0.7"/>
<rect x="954.9" y="417.3" width="2.1" height="1" fill="#05090f" fill-opacity="0.7"/>
<rect x="977.4" y="405.0" width="2.3" height="1" fill="#05090f" fill-opacity="0.7"/>
<rect x="979.9" y="430.2" width="4.2" height="1" fill="#05090f" fill-opacity="0.7"/>
<rect x="937.3" y="419.1" width="3.5" height="1" fill="#05090f" fill-opacity="0.7"/>
<rect x="975.0" y="421.3" width="1.8" height="1" fill="#05090f" fill-opacity="0.7"/>
<rect x="987.0" y="412.5" width="4.1" height="1" fill="#05090f" fill-opacity="0.7"/>
<rect x="955.3" y="422.1" width="2.8" height="1" fill="#05090f" fill-opacity="0.7"/>
<rect x="964.5" y="424.0" width="3.4" height="1" fill="#05090f" fill-opacity="0.7"/>
<rect x="981.5" y="433.0" width="3.7" height="1" fill="#05090f" fill-opacity="0.7"/>
<rect x="972.9" y="416.9" width="3.6" height="1" fill="#05090f" fill-opacity="0.7"/>
<rect x="962.9" y="410.4" width="1.6" height="1" fill="#05090f" fill-opacity="0.7"/>
<rect x="957.4" y="414.4" width="4.5" height="1" fill="#05090f" fill-opacity="0.7"/>
<rect x="955.9" y="420.3" width="2.6" height="1" fill="#05090f" fill-opacity="0.7"/>
<rect x="953.1" y="420.1" width="2.4" height="1" fill="#05090f" fill-opacity="0.7"/>
<rect x="969.1" y="423.4" width="3.7" height="1" fill="#05090f" fill-opacity="0.7"/>
<rect x="964.1" y="411.3" width="2.4" height="1" fill="#05090f" fill-opacity="0.7"/>
<rect x="968.6" y="406.8" width="3.7" height="1" fill="#05090f" fill-opacity="0.7"/>
<rect x="963.5" y="402.0" width="4.0" height="1" fill="#05090f" fill-opacity="0.7"/>
<rect x="960.6" y="414.7" width="2.3" height="1" fill="#05090f" fill-opacity="0.7"/>
<rect x="975.4" y="416.7" width="4.8" height="1" fill="#05090f" fill-opacity="0.7"/>
<rect x="974.0" y="417.9" width="3.8" height="1" fill="#05090f" fill-opacity="0.7"/>
<rect x="969.9" y="421.2" width="2.0" height="1" fill="#05090f" fill-opacity="0.7"/>
<rect x="965.3" y="422.8" width="2.5" height="1" fill="#05090f" fill-opacity="0.7"/>
<rect x="985.0" y="426.4" width="2.5" height="1" fill="#05090f" fill-opacity="0.7"/>
<path d="M1079.2 330.9h1.0M1055.1 314.6h1.4M1085.5 415.7h1.0M957.7 619.4h1.0M976.2 633.6h2.4M814.9 337.4h2.7M878.4 275.1h2.8M860.3 299.1h1.5M998.7 500.8h1.9M954.9 614.4h2.8M973.0 569.5h2.4M1079.0 599.3h2.0M1169.1 455.3h2.0M857.1 255.3h2.8M955.6 450.2h2.7M1026.6 390.9h1.5M1003.7 613.0h2.9M1006.7 553.9h2.7M870.1 456.9h2.0M1161.7 449.9h1.7M861.6 588.7h1.9M1060.7 424.3h2.0M1138.1 352.8h2.2M894.4 345.8h1.8M1022.3 452.9h2.8M841.1 299.1h2.2M1060.3 507.1h1.8M1174.6 367.6h3.0M1111.7 393.6h1.3M1018.6 405.3h2.6M1028.1 595.7h2.4M999.6 352.6h2.3M1061.8 258.1h1.8M1158.5 425.4h2.3M994.5 281.6h2.6M989.0 613.8h2.4M1147.0 410.6h2.0M1033.6 244.8h1.7M895.7 327.1h2.0M920.2 385.0h2.8M1036.0 529.6h1.8M1108.8 514.7h1.6M1116.7 373.4h1.7M810.9 341.5h1.4M1073.7 482.3h2.2M786.7 333.6h1.4M779.7 488.2h1.4M834.4 522.9h2.2M883.5 228.4h1.2M1099.5 335.4h2.3M921.1 578.5h1.4M1144.2 525.9h2.3M1022.6 481.0h1.8M1036.9 295.8h2.1M757.4 450.7h2.4M968.2 519.6h2.2M957.8 342.2h1.6M914.4 283.4h1.6M825.7 460.8h3.0M924.2 346.3h1.7M947.2 404.9h1.1M947.7 210.4h2.6M1093.8 515.6h2.5M1029.0 510.4h1.8M1013.7 478.6h2.3M860.7 593.6h2.1M1066.5 368.6h1.7M965.8 480.7h1.6M871.2 552.5h1.7M1171.4 409.8h1.7M1010.8 578.3h1.2M1032.4 604.3h1.3M1030.6 419.0h3.0M834.1 527.6h1.8M841.8 367.6h1.2M1157.9 487.6h2.0M971.7 376.3h2.0M836.1 393.5h1.3M881.8 267.6h2.8M1004.3 451.9h2.3M901.4 364.9h2.3M1063.8 325.2h1.2M989.5 419.3h2.7M1045.3 524.0h2.4M1027.9 358.0h1.1M1131.0 451.3h2.2M1099.7 349.9h2.0M1054.1 257.1h1.8M919.4 297.9h1.1M893.9 276.3h3.0M919.4 356.9h2.5M905.7 410.9h1.9M1104.8 323.7h1.9M1146.5 440.7h3.0M1031.2 350.1h1.2M852.3 450.1h2.1M785.0 488.0h2.8M839.4 572.4h2.4M1084.3 581.8h1.6M820.7 375.1h2.3M1128.8 295.7h1.1M1019.5 440.9h2.8M899.1 270.2h1.8M900.9 588.0h2.9M1053.9 281.9h1.6M1144.8 370.6h1.9M1075.0 617.8h1.2M1051.9 404.6h2.6M773.7 458.2h1.9M939.9 619.9h1.7M933.8 601.0h2.3M1021.1 268.3h2.7M962.1 403.0h1.3M1050.0 283.6h3.0M969.7 567.4h1.8M980.6 324.3h1.9M919.2 314.2h1.5M1082.8 606.8h2.5M990.8 314.2h1.3M1136.2 290.6h1.3M1160.9 399.7h2.1M992.7 276.4h2.1M817.5 391.9h1.8M1010.3 247.9h3.0M947.0 479.4h1.8M911.4 225.1h2.2M1102.9 438.2h2.1M838.2 400.5h1.1M838.6 525.2h1.5M1028.8 321.9h2.0M996.6 527.2h1.2M1007.1 318.6h2.2M843.2 581.0h2.7M971.2 641.9h2.0M1056.1 330.0h1.9M1074.3 491.0h1.1M933.5 598.8h1.2M1024.2 627.7h2.1M879.1 377.3h2.9M953.5 497.6h1.9M822.8 335.0h1.3M1037.6 323.3h3.0M939.9 455.5h1.1M839.8 565.5h2.0M1084.2 258.0h2.7M831.1 267.0h2.4M1071.5 496.8h1.5M1145.2 543.3h2.0M1049.8 615.5h1.7M983.8 616.6h1.3M1166.1 353.5h1.1M931.5 418.1h2.8M958.5 588.0h2.5M977.5 277.1h1.2M959.4 445.4h1.4M964.4 260.7h1.9M879.3 306.3h1.7M862.2 516.2h1.8M781.4 501.5h2.8M1083.9 335.5h2.8M992.7 346.8h2.7M1119.5 511.6h1.7M965.2 235.5h2.9M1088.6 368.7h1.0M1160.0 529.0h1.6M973.9 504.7h1.7M873.1 594.8h1.4M767.9 492.7h1.9M1050.6 545.2h1.5M1130.9 456.6h1.6M1003.9 323.9h1.2M818.8 471.8h1.3M791.7 415.3h2.6M1113.5 355.4h2.7M1106.7 560.6h2.9M863.6 476.8h1.5M976.6 567.5h1.8M1071.8 601.5h3.0M1075.0 569.1h1.9M808.8 422.4h1.9M1019.0 222.4h1.6M938.0 464.3h1.8M950.6 522.5h2.7M861.4 415.7h1.4M804.3 311.4h2.8M943.2 239.0h1.4M1084.0 567.1h2.3M1009.8 544.5h1.0M909.9 281.4h2.7M1103.7 350.3h1.7M931.3 603.0h2.9M1085.3 506.0h2.5M1086.8 563.8h1.5M764.3 345.5h1.1M916.9 270.3h2.7M834.5 597.4h2.9M1085.0 487.2h1.5M1067.9 245.5h2.6M1079.5 306.7h2.8M947.6 500.0h2.5M933.0 441.8h2.6M1038.6 511.5h1.2M900.1 368.6h1.6M763.6 356.6h1.0M1135.9 345.4h1.5M1058.1 279.9h1.9M977.0 576.7h1.7M1043.8 482.0h1.5M801.5 467.1h2.5M1025.5 479.1h2.8M864.7 402.9h1.5M893.1 299.3h1.8M994.7 420.5h2.3M907.4 270.1h2.2M1178.0 479.1h1.1M875.1 535.9h2.7M922.8 232.3h2.1M1090.7 419.0h1.8M849.7 383.0h1.3M910.6 311.4h2.7M954.0 409.8h1.2M1014.4 546.2h1.4M915.3 338.6h1.8M790.5 562.9h1.9M1175.3 493.4h2.9M1165.0 481.5h2.2M1117.8 344.2h2.3M980.8 391.0h1.2M984.9 448.0h1.5M1038.2 448.3h1.7M993.3 477.1h2.9M1150.5 330.4h1.2M786.7 315.7h1.9M759.3 414.9h2.8M864.2 376.2h2.5M959.2 312.1h1.9M931.0 332.4h1.8M838.9 390.0h2.8M915.8 574.0h2.6M1091.3 454.7h1.4M758.1 368.3h1.8M1045.3 389.4h2.9M909.9 542.6h1.5M1040.3 359.1h1.1M1128.5 452.4h2.2M863.0 576.2h2.0M1032.6 316.8h2.5M748.8 401.3h2.4M1096.6 372.7h2.3M1029.4 506.7h2.2M932.5 629.3h1.2M1097.5 263.8h3.0M945.8 604.1h2.3M925.5 294.3h1.2M827.9 517.4h1.2M790.5 562.1h1.3M1034.8 335.8h2.2M1122.3 560.9h2.4M935.3 557.4h1.7M798.4 402.3h2.3M1156.6 438.2h3.0M877.9 512.4h2.1M1013.9 292.5h1.8M988.9 628.8h1.7M1135.1 396.8h1.5M866.6 623.4h2.8M1000.2 420.5h1.5M1062.2 356.6h2.1M899.9 590.6h1.9M1052.4 262.9h1.9M922.9 440.0h2.4M944.8 436.6h1.1M984.6 570.1h2.0M839.8 259.3h1.3M1020.5 562.6h1.8M989.0 222.2h2.2M897.9 252.2h1.2M879.4 531.6h1.2M931.9 515.9h2.3M930.3 554.2h2.9M749.2 418.0h2.3M769.3 400.1h1.4M1077.2 342.0h1.1M900.2 401.5h2.1M839.0 292.3h2.4M977.9 430.9h2.4M766.6 361.1h1.8M988.6 446.0h1.1M1053.9 602.6h2.1M1110.3 278.9h2.0M1027.2 507.3h2.2M1063.4 555.8h2.0M1026.2 441.1h2.9M815.7 439.2h1.9M1021.6 261.0h2.4M892.7 390.3h1.5M959.9 469.6h2.3M1102.5 264.1h1.1M1028.8 592.8h1.0M992.3 566.5h2.5M1015.9 444.1h1.5M981.2 516.9h2.2M974.3 445.5h2.7M829.2 469.5h1.5M1131.7 287.6h1.1M886.3 267.5h2.2M847.1 502.1h2.4M1169.8 459.0h1.2M1031.8 549.1h1.0M1068.9 336.5h1.7M861.5 607.3h1.7M840.6 254.1h1.8M1106.5 344.8h1.8M839.6 456.7h1.9M959.9 464.6h2.6M970.4 509.5h1.4M778.3 375.6h2.1M773.8 470.5h1.5M897.0 505.8h1.8M850.7 308.0h1.6M867.7 445.1h2.7M869.5 239.1h3.0M845.7 347.1h3.0M829.4 399.8h2.0M1101.0 565.7h2.4M1137.2 540.8h2.5M969.8 392.9h2.4M982.9 451.5h2.4M900.1 247.4h1.5M1045.0 622.9h1.1M1136.0 328.1h2.5M1032.0 605.2h1.2M918.5 623.6h1.8M841.2 589.6h1.9M845.0 304.1h2.7M1051.7 394.2h1.7M1022.3 255.5h2.8M1149.0 459.4h1.9M1105.9 430.0h2.8M1063.7 498.7h1.5M886.3 364.8h2.4M824.2 527.1h1.9M970.1 343.0h2.5M800.7 373.6h2.9M869.6 388.6h2.0M755.9 402.5h2.3M776.3 332.9h1.2M981.7 252.2h2.8M1085.7 310.9h2.4M1146.0 400.6h1.1M885.1 606.8h1.7M1088.3 356.5h2.5M1139.3 428.0h1.4M837.9 407.8h2.9M845.9 475.5h2.0M890.1 243.0h2.3M785.1 420.2h1.4M872.0 250.4h2.6M870.5 436.4h2.9M1041.3 283.2h1.3M1066.9 597.1h1.5M952.3 646.2h1.3M927.8 485.1h2.3M1085.3 568.8h2.0M782.1 450.1h1.0M937.4 355.0h2.3M940.5 353.8h2.4M874.0 373.5h2.3M1072.3 527.2h2.9M927.9 352.3h3.0M1041.2 311.2h1.4M957.3 407.3h2.0M1167.4 486.3h1.6M1060.5 508.6h2.9M1044.1 555.0h2.1M925.8 589.8h1.1M752.2 473.0h2.0M964.1 303.1h2.5M950.3 606.6h2.9M771.5 444.4h1.6M924.1 481.6h1.6M823.6 306.9h2.4M931.0 379.5h2.5M1103.2 452.0h1.3M820.3 589.8h2.1M1110.7 319.0h1.2M942.4 309.6h2.2M837.4 552.1h1.7M976.4 510.9h2.8M1024.5 335.5h1.1M1120.8 553.4h2.8M1106.4 430.0h1.1M996.3 570.4h2.5M1137.5 425.4h2.3M1032.4 512.0h1.3M875.0 324.3h3.0M1056.6 306.9h1.4M938.8 458.5h2.2M1045.3 293.6h1.3M1013.0 452.8h2.4M1009.0 395.1h1.0M1055.4 404.8h2.4M956.0 440.0h2.6M891.1 281.9h1.9M813.4 388.0h1.9M795.9 392.4h1.3M826.2 530.1h1.2M1035.0 255.6h1.7M876.1 291.0h1.8M845.1 561.4h1.3M1072.7 309.8h2.3M1026.5 345.2h2.5M935.8 351.2h2.2M764.7 357.7h1.7M975.3 576.4h1.5M997.2 645.0h1.4M966.2 326.3h2.7M910.0 352.9h2.3M939.6 328.5h1.9M788.3 382.9h2.5M1106.1 340.4h2.7M881.7 251.8h1.3M809.2 427.0h2.7M1131.7 374.1h2.9M817.4 415.9h2.4M757.6 370.5h1.4M899.8 440.6h1.7M863.3 334.9h1.1M1144.8 478.0h2.9M892.2 449.3h1.3M1021.1 394.6h3.0M988.7 501.4h2.5M884.6 535.9h2.7M1029.4 251.7h1.0M962.5 537.9h2.0M836.1 409.7h2.0M1019.6 310.2h1.7M886.3 581.6h1.1M1058.1 372.0h1.7M955.2 399.9h3.0M783.9 502.5h2.0M1066.6 480.2h1.3M1153.5 343.6h2.3M1053.5 285.1h1.5M1158.8 426.8h1.5M933.7 442.0h3.0M813.3 442.5h1.1M997.7 378.7h2.2M861.3 295.3h2.7M1146.1 392.9h1.9M994.4 644.2h2.0M863.4 553.0h1.6M1084.9 557.9h1.4M1045.5 259.5h1.7M756.9 472.2h1.6M887.8 561.9h1.5M967.9 636.6h2.2M838.3 292.3h1.3M924.7 467.0h3.0M862.4 560.9h2.2M1084.6 571.5h2.8M1022.0 391.0h1.4M817.1 504.7h1.2M1017.4 240.4h1.5M990.3 350.8h1.1M1091.7 400.4h1.7M1032.3 343.0h2.7M939.0 305.5h2.4M868.4 247.3h2.6M757.8 425.2h2.6M1051.9 428.3h1.4M1104.7 313.8h1.8M812.3 547.9h2.9M894.8 386.7h2.4M964.1 596.9h2.3M1024.7 417.4h1.4M1116.5 353.3h1.6M875.0 550.2h2.9M897.6 255.8h2.8M1032.2 324.3h1.4M1096.9 332.4h2.5M891.1 353.5h1.0M1107.4 473.7h2.8M934.5 583.1h1.2M969.0 482.6h1.3M1023.3 448.1h2.6M799.9 344.7h1.0M943.4 605.4h1.0M950.1 463.0h1.6M990.8 403.3h2.0M814.1 304.5h1.3M1094.9 281.1h1.2M818.8 303.6h3.0M793.6 556.3h2.7M1088.9 450.1h2.3M911.1 561.1h2.4M1010.7 354.9h1.0M1005.7 585.7h2.7M883.1 533.5h1.7M879.1 244.3h1.3M1132.4 410.6h1.5M820.1 295.1h2.0M1140.3 465.1h2.3M789.8 373.4h2.1M862.9 552.9h1.5M963.3 594.9h1.2M1045.5 227.0h1.3M870.0 328.9h3.0M1127.1 362.8h1.2M870.1 403.3h2.6M956.5 601.6h2.5M1135.0 312.1h2.7M995.5 272.4h1.7M929.5 288.2h2.7M1014.7 635.2h2.8M888.4 495.3h2.6M1143.0 459.8h1.0M1039.9 232.5h2.3M904.0 515.1h1.8M1079.1 355.5h2.3M991.0 400.4h1.0M938.8 325.2h1.7M900.1 557.9h1.6M1079.5 323.1h3.0M1005.0 282.7h2.9M992.2 216.2h1.3M946.0 492.5h1.0M1042.8 350.7h1.6M800.3 292.3h1.4M1151.0 492.9h2.7M962.0 382.9h2.5M831.4 484.4h1.3M1134.4 358.8h2.6M1088.1 602.1h1.3M915.4 578.0h1.7M967.5 279.8h1.8M814.6 520.8h2.3M864.5 507.4h2.8M881.2 379.6h2.3M1046.9 437.9h2.2M802.0 346.6h2.5M1165.3 492.5h1.1M1132.3 568.0h2.9M955.3 428.3h1.4M796.4 386.0h2.1M1126.8 423.4h2.7M1025.4 413.8h2.9M1097.6 256.7h1.4M1132.5 511.4h1.0M940.5 645.4h1.4M1153.5 488.2h2.9M952.7 555.3h1.1M854.0 463.7h1.7M780.4 547.5h2.5M949.6 572.4h2.1M902.7 487.6h2.5M1111.9 296.2h2.8M895.0 349.2h2.0M1149.6 417.0h2.5M1166.4 418.8h2.3M1114.9 520.3h1.1M936.9 292.7h2.1M907.9 295.5h2.3M805.1 476.4h1.9M875.3 309.2h1.7M836.0 391.2h2.6M1019.2 231.3h1.7M1166.8 515.5h1.5M858.4 261.1h1.1M1019.0 258.2h2.8M977.2 317.7h2.7M1047.8 328.7h2.2M767.2 335.3h1.1M972.4 297.1h1.4M1031.2 546.7h2.3M1069.5 576.9h1.4M1159.3 363.8h2.3M1072.2 363.4h1.7M1060.8 321.0h1.8M926.7 300.9h1.7M883.4 293.9h1.6M905.7 331.6h1.6M896.7 454.6h2.3M955.1 338.6h2.0M1045.9 433.1h2.0M873.3 283.0h2.0M1001.6 324.9h2.1M1078.7 430.7h2.2M909.7 582.7h2.8M962.3 543.7h1.9M813.3 405.7h1.2M1115.8 585.9h1.6M1007.3 222.5h2.4M934.3 461.8h2.5M1108.5 402.8h2.2M961.7 537.8h2.7M1085.5 556.2h3.0M1066.5 295.2h1.1M1025.7 625.9h1.2M836.0 476.5h1.8M1129.0 360.6h2.6M1095.3 533.9h2.9M922.1 291.3h3.0M991.5 480.4h1.8M1092.6 573.9h1.0M977.2 528.2h2.1M1073.1 376.3h1.7M852.5 527.3h1.2M1062.5 293.9h1.0M763.2 434.0h1.4M774.3 486.8h1.4M861.3 606.1h2.1M963.7 227.5h1.3M925.1 457.4h2.3M925.1 517.0h3.0M1029.5 579.2h2.0M1083.2 500.9h2.3M924.5 562.2h2.8M915.0 319.2h1.5M860.0 529.7h2.1M939.2 505.4h1.4M843.5 256.0h2.3M945.6 349.8h2.9M885.1 555.0h2.4M869.3 268.6h1.0M1162.3 518.8h2.6M1067.2 452.9h1.9M997.2 526.2h2.9M858.4 340.0h2.5M994.7 525.4h1.4M1015.2 369.6h1.3M1111.4 293.8h2.0M1152.9 446.8h2.5M1019.6 519.0h2.4M964.6 232.6h2.1M1071.6 593.7h2.4M816.5 414.8h1.4M1007.8 457.0h1.4M1059.2 269.7h1.9M783.4 523.9h2.8M1025.3 495.7h1.9M976.9 224.1h2.6M916.3 249.8h1.6M958.0 593.3h1.4M1135.8 369.7h1.5M1090.9 409.7h1.3M920.8 602.7h2.4M993.5 510.8h1.4M896.5 551.2h1.1M859.5 573.6h1.4M877.5 297.4h1.1M937.0 432.0h2.6M1128.2 295.1h1.4M943.5 549.4h2.2M970.2 331.2h1.9M987.8 238.3h2.8M860.0 372.7h2.2M972.7 434.8h1.4M1036.0 528.8h1.3M876.2 553.8h1.7M918.3 485.2h2.7M1034.3 255.2h1.9M964.9 356.0h1.3M933.6 456.1h1.1M841.7 362.4h2.4M792.4 532.5h1.2M939.8 242.9h1.7M931.8 373.6h1.0M842.4 270.8h1.6M961.2 501.9h1.5M1031.9 524.2h2.1M917.1 527.8h2.1M1074.1 459.3h2.9M932.0 590.9h3.0M1124.0 327.8h2.1M970.7 497.9h1.2M1151.5 495.0h2.4M1012.5 614.6h1.2M1062.3 608.2h3.0M811.5 510.2h1.2M896.9 397.5h2.3M988.3 536.7h2.5M767.3 413.9h2.6M1081.2 486.9h1.2M1008.7 619.3h1.3M945.2 490.4h2.5M887.3 378.6h1.6M1144.1 348.3h1.1M986.7 347.7h2.0M1064.3 601.0h2.5M1027.1 633.4h2.4M951.6 375.0h1.0M997.7 400.9h2.1M938.4 480.9h2.2M1156.0 508.9h1.1M872.3 535.9h2.3M1132.0 400.0h2.6M772.7 439.2h2.0M955.6 613.5h1.6M1108.7 479.1h2.6M928.2 349.1h1.8M829.9 265.7h2.0M964.2 260.2h2.3M927.6 387.5h2.6M1028.0 249.2h2.7M976.8 598.9h2.1M1086.5 313.7h2.9M1004.3 398.5h2.3M828.4 537.3h2.5M891.6 543.5h2.9M990.8 609.3h2.6M857.6 250.7h1.9M925.5 543.9h2.2M1163.3 367.4h2.0M864.0 494.3h1.3M905.3 412.2h1.8M927.4 438.6h1.7M1061.7 425.6h2.8M831.1 519.0h1.5M1003.0 600.9h1.8M1075.9 346.7h1.7M1018.9 503.4h1.7M1049.6 240.4h2.9M921.5 546.3h2.8M1009.8 263.9h2.7M1101.5 402.8h1.0M1009.3 373.5h1.5M802.3 358.8h2.5M868.5 234.3h2.5M969.9 250.1h1.3M968.6 319.1h1.8M839.9 418.7h1.5M931.7 547.0h2.4M883.1 233.3h2.6M1132.4 495.5h2.0M955.7 402.5h2.8M1024.4 380.9h1.8M907.1 576.5h1.3M849.4 337.0h2.9M947.9 432.1h2.9M953.5 524.8h2.8M746.2 419.0h1.3M781.4 313.5h2.3M976.4 623.8h1.1M831.9 388.1h1.2M1134.1 375.6h2.0M1097.0 409.0h2.8M875.8 610.0h2.0M1119.9 478.2h2.8M1026.6 618.9h1.1M909.6 578.8h2.4M1107.6 337.4h2.9M988.7 299.6h2.4M937.2 636.3h1.9M812.0 283.9h1.8M911.0 309.5h1.6M1007.0 284.0h1.2M1121.8 351.8h2.0M892.4 478.2h2.8M1078.4 461.9h2.1M858.9 257.6h1.8M1088.7 493.9h2.4M808.9 551.3h2.7M1073.4 532.1h1.0M785.7 393.1h1.6M860.3 350.9h3.0M1121.9 294.5h1.2M805.9 309.3h2.7M915.7 223.5h1.3M1050.0 598.0h2.5M1069.8 524.7h2.7M1016.2 234.3h1.8M838.3 430.3h2.7M946.6 348.9h2.5M784.4 539.8h1.6M1008.2 607.4h2.8M977.5 435.1h2.1M979.5 574.6h1.4M940.3 236.4h2.4M1014.7 366.0h1.4M1029.5 342.8h1.2M958.1 469.6h2.9M1089.6 372.3h1.6M842.3 265.1h1.8M1114.3 317.2h2.5M841.8 333.7h2.2M1067.3 360.4h1.7M777.6 342.8h1.2M1123.3 453.3h1.2M1065.1 400.7h1.9M979.2 283.2h2.0M1134.1 406.0h2.2M1124.8 462.7h1.9M847.3 442.3h2.9M1123.1 394.8h1.5M779.0 360.5h1.6M1131.7 402.7h2.4M981.8 520.5h2.6M951.0 564.2h2.9M956.5 495.4h1.2M800.0 567.2h1.8M862.8 250.7h1.1M855.2 546.4h2.3M964.4 606.8h2.2M769.0 520.9h2.8M895.1 365.2h2.2M1034.8 488.1h2.5M1151.6 526.7h1.0M999.9 236.9h2.5M980.7 332.2h2.5M1029.3 327.9h2.6M1154.0 457.3h2.2M1096.9 443.1h1.8M1056.7 278.3h2.5M806.2 391.4h2.3M852.7 380.6h1.7M1116.0 546.6h2.4M933.0 448.1h2.4M984.7 302.2h2.7M830.2 586.7h2.0M1077.5 493.8h1.6M1140.4 299.0h2.7M857.5 410.5h1.8M857.8 572.1h2.9M1007.0 539.1h2.6M773.6 407.0h2.5M1077.2 607.1h1.9M1013.8 486.3h2.5M930.4 422.9h2.6M1030.1 419.2h2.6M1013.9 590.1h2.8M1047.2 330.5h2.1M778.4 476.1h2.8M1065.9 434.7h1.7M1016.8 383.0h2.8M1103.9 380.4h2.1M1126.6 342.6h2.8M978.5 264.0h2.4M1024.8 360.9h2.3M1108.2 262.7h2.4M763.1 469.4h2.2M1080.9 535.5h1.8M905.0 242.6h2.8M1132.2 435.2h2.5M996.9 617.2h2.3M976.0 640.1h1.4M1117.0 431.0h1.8M1167.8 352.0h2.6M1124.5 475.2h2.2M927.9 453.2h1.9M752.5 458.7h2.5M1017.0 383.9h1.3M796.1 398.6h1.6M750.9 416.8h1.8M1009.2 389.2h1.1M927.8 378.3h2.1M817.3 302.3h2.1M917.3 257.5h2.2M792.2 478.2h2.1M990.9 522.4h2.0M1018.9 344.1h2.4M949.9 250.0h3.0M917.1 387.9h2.0M937.6 371.4h1.5M1127.1 281.7h1.2M947.9 551.4h1.6M799.0 436.3h1.7M988.4 488.0h1.1M887.2 253.8h1.4M801.8 574.4h2.8M875.9 384.4h2.5M967.1 367.8h1.0M1141.9 498.2h2.3M1105.5 588.1h2.6M1129.6 488.7h1.6M963.5 510.8h2.6M987.4 399.5h1.8M1013.0 505.9h2.9M881.7 304.1h2.2M970.3 239.0h1.7M974.7 406.2h2.1M878.5 567.1h1.7M970.0 421.7h2.5M975.4 558.9h1.2M988.2 465.3h2.7M852.2 488.2h1.1M1073.9 533.6h1.4M1136.0 489.3h1.5M1151.1 324.4h2.0M995.2 257.2h2.3M1004.5 617.9h2.8M934.1 288.8h1.2M1129.4 374.4h2.2M1074.0 616.0h1.6M866.5 511.7h2.9M1138.4 542.0h2.3M834.7 309.2h2.5M1002.8 475.3h1.1M918.6 469.0h2.5M908.0 416.8h1.1M790.8 364.0h2.3M760.0 416.8h2.8M767.3 494.7h1.5M821.0 543.2h1.3M1172.5 416.2h2.7M844.8 460.8h1.4M817.3 556.5h1.2M999.7 556.4h1.7M822.8 286.8h1.1M1131.4 534.1h2.3M923.3 534.8h1.1M765.9 453.6h1.1M964.7 495.9h2.2M1077.3 475.7h1.5M1159.8 340.1h1.7M876.9 405.8h1.7M955.5 296.3h1.3M859.4 254.0h2.8M1063.4 596.2h2.9M1140.8 463.5h2.8M982.5 227.0h1.5M1054.7 359.6h1.0M1076.1 509.5h1.7M936.2 578.7h2.0M1093.0 534.8h2.0M839.4 516.7h2.8M1087.8 352.8h1.1M1007.7 536.1h1.9M975.1 558.2h1.1M813.1 421.1h1.4M797.3 288.3h2.9M927.8 468.0h1.9M1115.9 485.0h2.0M937.9 494.4h2.0M755.9 472.3h2.6M1100.4 576.0h2.3M1061.7 497.6h2.6M1134.6 506.9h1.9M959.1 587.4h2.3M1045.3 236.0h2.3M951.0 393.6h2.3M991.7 252.1h1.3M875.8 533.4h2.8M946.6 470.6h2.7M867.6 282.0h2.4M1114.9 444.8h2.4M773.1 493.7h1.6M1166.0 399.1h1.6M927.7 520.7h1.1M1054.9 444.1h1.7M910.0 435.7h1.7M1081.2 278.7h2.3M1015.6 634.2h1.4M845.6 452.8h2.6M937.7 646.0h2.5M1057.4 448.5h1.8M923.9 269.3h2.5M981.0 631.4h1.3M1031.3 271.0h2.0M835.3 389.5h1.5M859.5 386.2h1.8M1152.7 312.4h1.3M883.5 602.7h1.3M911.0 459.2h2.6M993.9 322.6h2.1M980.8 514.5h2.5M1148.6 392.6h1.2M782.7 508.7h2.9M1014.5 396.9h2.5M1003.5 503.3h1.1M879.8 514.6h2.3M920.0 268.1h1.9M805.6 430.5h2.4M857.5 546.6h2.1M810.1 496.5h1.5M815.5 568.2h2.9M878.4 319.0h2.9M957.0 629.9h2.4M1136.9 494.1h1.4M866.6 616.7h1.9M863.2 592.5h2.9M1082.1 334.0h1.6M1180.9 390.9h1.2M1126.1 400.6h1.8M1093.4 572.3h1.7M931.0 298.8h2.0M820.7 595.5h2.3M1020.0 378.9h2.0M1095.9 315.2h2.3M820.3 458.3h1.7M841.4 395.6h2.5M888.0 612.7h2.4M879.4 255.6h1.8M1096.0 547.6h1.6M871.6 399.2h1.5M804.4 324.2h1.7M1071.0 286.5h1.3M1103.0 489.0h2.3M971.3 383.2h2.8M849.4 350.1h2.1M1160.1 465.9h2.7M1060.8 486.6h1.3M1061.9 616.4h2.6M969.2 464.1h1.2M1049.7 482.0h1.9M1083.0 488.1h1.6M963.1 223.8h1.7M1068.0 380.1h1.5M1012.8 449.7h2.9M1105.3 581.5h1.7M883.5 429.2h2.2M1163.8 417.1h2.5M1042.3 308.5h1.6M1088.7 442.9h1.1M910.6 439.8h1.3M1006.7 287.4h1.9M1035.1 270.2h2.6M823.0 455.7h1.0M1060.0 388.6h2.7M782.0 480.8h2.0M840.4 412.7h1.1M970.8 463.6h2.0M1011.1 611.6h1.9M999.8 518.6h3.0M1175.3 424.0h1.3M1105.1 487.1h1.7M914.5 255.5h2.4M1013.4 299.4h2.0M898.9 612.2h1.6M932.4 551.2h1.5M1045.5 586.2h1.5M1089.0 453.7h2.6M925.7 228.4h2.4M844.7 448.2h1.1M872.0 283.6h1.9M1146.9 510.6h2.0M772.8 493.5h2.9M804.9 521.0h2.1M1001.2 245.6h1.6M1149.9 491.1h1.2M1037.4 392.4h2.7M1120.7 372.8h1.1M949.7 392.3h2.3M1073.9 286.7h1.7M883.0 419.7h2.4M926.0 245.2h1.1M1118.7 333.1h2.1M928.1 312.1h2.6M854.5 344.8h1.5M816.1 559.4h2.4M831.1 588.5h1.9M903.0 408.7h2.9M1140.3 360.9h1.8M980.3 523.9h2.6M973.9 292.0h1.4M1010.7 244.4h2.8M761.2 441.7h2.0M978.1 395.4h2.0M1038.4 260.9h3.0M873.8 348.2h2.5M1072.2 281.8h2.3M968.6 430.9h1.5M857.5 592.8h1.5M1007.7 440.6h3.0M983.5 553.3h2.8M1081.4 392.4h2.2M873.7 502.5h2.9M1147.1 444.4h2.5M986.8 265.3h2.8M1038.6 268.5h1.1M1036.5 371.7h1.3M911.6 576.9h1.7M853.5 477.2h1.5M925.0 254.2h1.1M1039.0 374.3h1.6M997.5 228.3h2.9M1079.9 313.9h2.8M1021.1 235.1h3.0M1109.0 379.9h1.9M964.9 228.2h2.5M930.5 472.9h1.2M1124.9 293.1h1.1M847.8 556.2h2.0M1159.8 496.4h2.3M909.2 571.3h1.8M832.5 271.2h2.2M912.2 547.8h2.7M957.3 299.5h2.8M787.9 300.7h2.8M1100.2 491.5h1.0M1067.4 401.3h1.4M761.5 373.7h2.3M1082.8 294.9h2.1M804.7 469.9h1.0M1116.2 591.7h1.4M926.0 583.2h2.5M1124.2 547.2h2.2M1091.2 477.5h2.9M959.5 342.8h2.3M1092.4 496.3h1.7M1124.5 421.8h2.9M775.3 440.6h1.0M1084.7 306.0h1.8M1069.0 247.8h1.3M1143.0 449.7h2.8M1092.6 538.4h1.1M1113.6 483.6h2.8M1077.0 280.1h2.4M998.9 576.5h1.3M986.0 514.2h1.9M1046.2 445.6h2.4M881.7 365.2h1.4M930.8 393.0h2.5M1034.4 231.8h1.3M999.4 271.6h1.5M1012.7 334.5h1.3M1117.8 273.5h2.4M1082.0 525.6h2.2M1009.3 627.2h1.8M812.5 419.6h1.0M1106.3 279.6h2.8M833.9 378.3h1.6M1014.8 520.5h2.1M809.2 532.2h3.0M995.1 633.8h1.7M853.3 478.2h2.3M887.8 458.0h2.2M1051.5 514.7h1.8M1069.9 266.8h2.2M851.8 449.7h2.0M811.4 457.8h2.0M980.3 560.2h1.8M1029.6 459.7h2.5M871.4 589.2h2.7M874.4 310.9h2.7M923.3 416.8h2.6M810.6 453.0h2.4M872.7 236.3h2.2M1065.1 578.4h2.5M1149.0 434.6h2.3M905.3 304.9h1.7M873.1 385.2h2.6M1057.2 566.5h2.3M948.2 509.4h2.8M1137.4 403.5h2.6M858.6 472.1h2.0M1128.5 450.4h2.6M869.2 620.4h1.2M961.4 602.3h2.1M984.1 407.8h2.6M1147.5 511.5h2.3M1174.0 445.8h1.6M752.6 436.8h1.8M1056.1 476.4h2.5M1044.4 525.2h1.4M895.3 460.0h2.9M1026.5 390.3h1.3M759.6 361.8h2.5M1086.4 592.4h1.1M777.8 433.8h1.8M838.8 295.1h1.4M1051.3 516.5h1.2M989.5 467.0h1.7M935.3 345.0h1.9M1043.0 491.2h1.7M1057.8 394.6h1.2M1044.7 331.7h1.8M821.7 481.0h1.0M869.3 244.6h1.3M1119.9 307.5h2.3M883.7 308.2h2.2M1128.1 320.8h2.1M985.7 412.9h1.9M1140.0 455.4h2.3M881.8 424.1h1.1M1002.3 275.7h2.0M933.3 349.3h2.3M754.4 429.7h2.4M1154.2 353.9h1.7M939.9 337.9h1.8M899.8 321.4h2.0M775.1 324.9h1.3M1042.5 371.0h3.0M1010.0 604.5h2.2M1134.2 434.6h1.7M863.1 301.3h2.6M879.6 572.9h2.1M1161.5 369.5h3.0M765.7 440.1h1.1M909.3 457.8h1.8M923.3 581.3h2.4M1135.5 434.7h1.3M818.9 574.8h2.2M775.9 512.0h2.6M1095.2 502.4h1.7M1162.8 474.9h1.6M1069.2 474.6h2.6M1009.5 581.3h2.0M775.6 397.4h2.4M896.5 337.2h2.3M891.0 596.2h2.4M1012.2 417.8h2.7M1011.3 319.0h2.2M1091.5 288.0h2.9M845.0 593.5h2.7M956.7 586.8h1.9M1028.6 440.2h2.6M1042.4 361.7h2.2M1010.9 386.1h1.6M1058.4 284.7h2.9M848.8 278.2h2.3M1025.6 334.5h1.3M1053.0 372.3h2.7M984.7 541.0h1.1M1083.0 616.8h1.6M1021.7 427.9h1.8M812.5 277.0h1.4M835.5 506.0h1.6M1093.2 480.8h2.3M806.9 449.4h1.4M957.5 589.0h1.2M879.8 619.3h2.8M1088.0 340.4h2.9M902.3 403.3h2.0M1091.1 409.6h1.7M1078.6 506.8h1.2M1119.3 400.7h1.6M885.3 576.9h1.4M982.2 306.8h1.9M1109.7 390.2h1.7M1003.7 219.7h2.4M755.2 455.8h1.4M1140.0 383.3h1.3M1002.7 519.2h1.6M919.8 250.2h2.2M877.6 478.5h1.1M787.5 413.3h2.5M972.2 503.2h1.6M1044.5 487.4h2.2M909.9 331.1h2.9M1065.9 491.2h2.8M910.9 281.8h1.7M926.4 274.1h1.4M769.7 332.9h2.8M982.7 530.0h1.2M803.3 333.0h2.9M904.1 308.3h3.0M1134.3 458.7h2.4M787.6 521.9h2.8M822.6 417.1h2.7M1002.4 435.1h1.1M821.9 500.8h1.8M873.9 526.3h1.3M1083.5 364.8h2.1M1011.2 503.4h1.2M988.9 355.5h1.6M903.9 402.1h2.0M780.3 473.7h2.5M973.5 512.5h2.9M1174.9 437.6h1.7M996.1 230.8h2.2M828.8 495.5h1.1M1183.5 396.4h1.1M1073.8 421.8h1.1M1053.8 385.6h1.5M995.1 240.7h1.7M1134.9 521.2h1.1M993.0 285.1h2.4M1034.5 558.1h2.9M1090.5 527.9h2.9M833.4 349.2h3.0M948.3 240.9h2.6M995.7 316.1h1.1M1118.4 477.2h2.5M1016.9 560.9h1.5M994.6 538.7h1.9M975.6 580.6h2.4M929.4 370.5h1.8M851.0 403.4h1.7M968.4 609.5h1.7M1104.7 463.7h2.7M1024.6 457.1h1.1M1006.7 535.8h2.3M831.8 552.6h1.5M1138.6 553.9h2.1M913.7 448.0h2.2M1027.4 380.7h1.1M800.8 498.9h1.1M1053.5 630.9h2.4M1014.4 240.0h1.1M1000.8 327.7h1.4M1074.6 393.7h1.3M1034.0 306.8h2.7M1043.1 554.2h1.4M1076.2 550.1h1.9M985.8 639.3h2.3M961.2 505.4h2.6M1053.2 486.7h1.3M1011.3 384.6h1.6M795.0 321.2h2.5M767.6 352.8h1.9M1153.7 374.5h2.7M845.9 404.6h1.4M955.2 352.5h1.7M761.8 350.5h2.2M923.7 363.4h1.0M812.1 503.0h1.1M945.9 503.4h2.3M838.9 475.2h2.0M908.1 232.5h2.1M851.4 397.5h2.7M1075.9 452.3h1.6M887.9 258.8h2.7M928.6 286.1h1.2M852.2 567.3h2.7M1110.5 414.9h2.5M961.4 563.6h1.0M843.3 391.5h1.8M807.4 496.0h2.8M1048.8 340.3h2.6M884.8 557.9h2.4M958.6 335.3h1.2M1034.5 627.5h1.1M1053.5 524.3h1.8M1080.7 399.1h1.3M1066.6 575.5h2.4M933.8 473.6h2.3M967.5 472.3h1.3M1101.8 477.8h1.3M999.9 276.3h1.2M945.0 586.3h3.0M1184.9 414.1h1.8M1042.8 609.6h2.5M1060.5 512.2h1.3M1148.5 470.9h1.4M819.7 350.2h1.5M1117.6 537.6h2.7M975.1 581.3h2.5M1023.0 378.2h2.1M763.9 409.6h1.2M862.2 456.7h1.9M1177.1 421.1h1.0M983.6 556.0h1.8M884.9 312.1h1.7M976.7 605.4h2.0M850.7 392.4h1.9M932.5 283.1h1.0M888.7 301.8h2.2M1043.6 582.3h1.9M1051.2 406.2h2.9M1156.8 404.7h2.5M1157.9 352.6h1.6M1093.0 297.2h1.1M1044.5 376.9h1.0M840.4 509.6h2.8M889.1 539.5h2.4M1095.8 524.5h1.2M925.7 587.2h1.4M811.8 562.0h2.2M858.7 388.1h2.5M828.7 303.9h2.7M820.5 593.3h2.3M1083.9 567.9h1.2M983.8 458.3h2.8M968.6 443.3h3.0M1018.2 582.3h1.7M961.5 521.5h2.4M1074.3 611.6h2.6M1092.7 478.6h2.8M906.2 556.3h1.1M777.0 374.1h2.1M1050.3 468.0h1.4M1025.0 285.3h2.4M989.2 252.5h2.7M925.8 586.2h2.4M958.3 356.9h1.5M935.1 524.0h2.9M1016.2 222.1h2.7M876.7 262.4h1.6M1109.2 575.3h2.0M881.3 402.6h1.1M1023.9 405.4h2.2M812.9 330.1h2.0M1085.1 588.6h1.1M1144.6 310.1h1.0M888.6 358.4h1.2M1034.7 298.1h1.5M1017.2 542.8h2.3M902.5 381.7h1.7M994.2 412.3h2.4M1141.8 487.8h2.3M907.1 609.6h1.2M1026.8 637.8h2.2M1127.6 400.1h1.0M1076.3 472.8h1.6M1136.5 373.6h2.0M799.1 307.5h1.8M835.8 394.1h2.6M1068.7 242.4h1.4M938.3 643.7h2.0M1048.0 520.7h1.1M1087.3 512.3h2.6M840.0 461.3h2.0M829.1 294.3h2.6M929.8 295.2h1.3M755.7 435.1h2.9M1073.4 590.5h1.9M1053.2 629.3h1.4M1134.9 372.0h1.5M777.5 339.7h1.5M921.7 492.6h1.6M797.7 318.2h1.6M1039.1 237.4h1.6M988.2 351.2h2.1M773.6 349.1h2.4M1053.5 588.6h1.2M1109.4 403.6h1.9M1060.6 269.4h1.9M1016.5 358.9h1.3M1065.4 355.0h2.3M859.9 476.9h1.2M930.8 231.0h1.3M883.3 380.0h2.3M897.1 436.1h3.0M1067.9 323.8h2.8M923.5 374.2h1.9M1095.1 252.9h2.3M789.1 310.5h1.3M925.6 488.6h2.6M1053.3 419.6h1.6M963.2 628.9h2.6M1121.5 491.5h2.8M998.8 524.8h1.5M1023.0 332.2h1.4M1177.7 430.3h1.4M975.8 636.6h1.8M971.9 225.2h1.2M966.0 281.7h2.0M1070.0 445.2h1.7M913.0 556.8h2.3M864.2 408.3h1.8M820.7 295.5h2.5M891.4 278.9h2.1M971.8 314.7h2.7M1132.1 318.5h1.4M1063.9 461.2h2.9M1146.3 303.5h2.0M1100.6 553.7h2.8M947.4 438.9h1.5M878.9 436.6h1.4M1051.6 242.2h1.9M825.9 269.7h1.3M957.6 437.1h1.6M828.3 556.6h2.0M973.0 487.2h1.1M1006.6 451.9h1.6M1017.9 254.5h1.3M1114.6 526.4h3.0M907.3 615.7h2.8M917.8 263.9h2.3M953.2 221.8h1.2M816.3 464.7h1.9M1132.6 562.0h1.8M1013.7 575.5h2.4M851.3 539.8h2.1M1051.4 284.2h2.3M949.6 641.5h1.3M833.8 540.1h1.7M893.6 374.9h1.3M937.5 630.0h1.2M1029.0 436.7h2.2M864.9 262.3h2.8M787.2 501.2h1.2M1009.9 296.6h2.0M1048.4 249.3h1.7M986.0 367.4h1.1M790.1 425.9h2.6M804.1 374.3h1.1M912.8 640.5h1.9M860.5 366.7h2.9M765.3 345.7h2.1M898.6 328.7h1.1M1076.4 523.4h2.1M1010.5 627.2h2.7M914.2 323.5h2.1M1114.0 450.1h1.7M798.8 375.2h2.0M1097.9 518.5h1.7M882.0 521.3h2.7M934.9 548.4h1.5M1101.7 348.6h2.2M878.0 367.4h1.9M756.9 476.7h2.7M992.1 353.3h2.1M1104.0 573.1h1.0M957.8 614.9h1.7M887.8 232.4h1.8M1048.1 588.1h1.6M996.2 340.2h2.3M825.7 404.5h2.8" stroke="#03060c" stroke-opacity="0.6" stroke-width="1.2" fill="none"/>
<circle cx="966.3" cy="432.1" r="223.6" fill="url(#rim)"/>
</g>
<g fill="none" stroke-linecap="round">
<path d="M605 723.2L603.3 701" stroke="#3c9b3c" stroke-width="1.5"/>
<path d="M603.2 698.8l1.9 3.2l-3.6 0.3z" fill="#3c9b3c" stroke="#3c9b3c" stroke-width="0.6"/>
<path d="M605 723.2L621.5 728.8" stroke="#b52a2a" stroke-width="1.5"/>
<ellipse cx="623" cy="729.3" rx="1.9" ry="2.3" fill="#e01212" stroke="none"/>
<path d="M605 723.2L588.5 731.4" stroke="#5c5cc8" stroke-width="1.5"/>
<path d="M586 732.3l3-2.6l1 3z" fill="#6a6ae0" stroke="#6a6ae0" stroke-width="0.6"/>
<path d="M604.7 681.4L607.6 687.2L612.2 681.2M607.6 687.2L606.4 691.4" stroke="#2fae3a" stroke-width="2.4" stroke-linejoin="round"/>
<path d="M634.2 719.4L640 731.5M642.4 719.4L631.8 731.5" stroke="#e01010" stroke-width="2.5"/>
<path d="M581.8 724.2H586.4L580.2 734.6H584.8" stroke="#5858dc" stroke-width="1.9" stroke-linejoin="miter" stroke-linecap="butt"/>
</g>
</svg>

<!-- ================= TEXT ================= -->
<span class="t" style="left:66.20px;top:12.00px;font-size:9.80px;letter-spacing:0.088px;font-weight:700;color:#2b2b2b;">GolfBall-MRF</span>
<span class="t" style="left:1090.80px;top:13.00px;font-size:8.20px;letter-spacing:0.037px;">Dashboard</span>
<span class="t" style="left:1144.60px;top:13.00px;font-size:8.20px;letter-spacing:0.023px;">Public Projects</span>
<span class="t" style="left:1211.90px;top:13.00px;font-size:8.20px;letter-spacing:0.129px;">Forum</span>
<span class="t" style="left:1249.40px;top:13.00px;font-size:8.20px;letter-spacing:0.139px;">Help</span>
<span class="t" style="left:1289.60px;top:13.00px;font-size:8.20px;letter-spacing:0.218px;">kcontractor</span>
<span class="t" style="left:10.40px;top:38.00px;font-size:7.90px;letter-spacing:0.066px;color:#444;">Mesh Creator</span>
<span class="t" style="left:80.00px;top:38.00px;font-size:7.90px;letter-spacing:0.009px;color:#3a87ad;">Simulation Designer</span>
<span class="t" style="left:171.20px;top:38.00px;font-size:7.90px;letter-spacing:-0.024px;color:#444;">Post-Processor</span>
<span class="t" style="left:7.50px;top:61.00px;font-size:13.60px;letter-spacing:0.035px;color:#222;">Navigator</span>
<span class="t" style="left:210.00px;top:60.00px;font-size:13.60px;letter-spacing:-0.131px;color:#222;">Rotating Zone</span>
<span class="t" style="left:12.80px;top:95.00px;font-size:8.20px;letter-spacing:-0.012px;">Simulations</span>
<span class="t" style="left:22.90px;top:107.00px;font-size:8.20px;letter-spacing:-0.064px;">Sim-noMRF</span>
<span class="t" style="left:22.90px;top:118.00px;font-size:8.20px;letter-spacing:-0.066px;">Sim-MRF</span>
<span class="t" style="left:33.30px;top:132.00px;font-size:8.20px;letter-spacing:-0.106px;">Analysis Type</span>
<span class="t" style="left:33.60px;top:145.00px;font-size:8.20px;letter-spacing:0.030px;">Domain</span>
<span class="t" style="left:43.70px;top:158.00px;font-size:8.20px;letter-spacing:0.121px;">Geometry Primitives</span>
<span class="t" style="left:43.70px;top:174.00px;font-size:8.20px;letter-spacing:-0.008px;">Topological Entity Sets</span>
<span class="t" style="left:43.70px;top:189.00px;font-size:8.20px;letter-spacing:0.067px;">Mesh</span>
<span class="t" style="left:40.80px;top:203.00px;font-size:8.20px;letter-spacing:0.217px;">Model</span>
<span class="t" style="left:43.70px;top:215.00px;font-size:8.20px;letter-spacing:0.153px;">Materials</span>
<span class="t" style="left:54.00px;top:228.00px;font-size:8.20px;letter-spacing:0.261px;">Air</span>
<span class="t" style="left:43.70px;top:241.00px;font-size:8.20px;letter-spacing:0.135px;">Initial Conditions</span>
<span class="t" style="left:54.00px;top:255.00px;font-size:8.20px;letter-spacing:-0.108px;">Pressure</span>
<span class="t" style="left:54.00px;top:270.00px;font-size:8.20px;letter-spacing:0.185px;">Velocity</span>
<span class="t" style="left:54.00px;top:285.00px;font-size:8.20px;">k</span>
<span class="t" style="left:54.00px;top:300.00px;font-size:8.20px;letter-spacing:-0.112px;">Omega</span>
<span class="t" style="left:43.70px;top:314.00px;font-size:8.20px;letter-spacing:0.073px;">Boundary Conditions</span>
<span class="t" style="left:54.00px;top:328.00px;font-size:8.20px;letter-spacing:0.174px;">inlet</span>
<span class="t" style="left:54.00px;top:343.00px;font-size:8.20px;letter-spacing:0.245px;">outlet</span>
<span class="t" style="left:54.00px;top:358.00px;font-size:8.20px;letter-spacing:0.096px;">freestream</span>
<span class="t" style="left:54.00px;top:374.00px;font-size:8.20px;letter-spacing:0.068px;">golfBall</span>
<span class="t" style="left:43.70px;top:387.00px;font-size:8.20px;letter-spacing:-0.022px;">Advanced Concepts</span>
<span class="t" style="left:54.10px;top:399.00px;font-size:8.20px;">Rotating Zones</span>
<span class="t" style="left:64.20px;top:412.00px;font-size:8.20px;color:#2a5db0;text-decoration:underline;">MRFzone</span>
<span class="t" style="left:54.00px;top:427.00px;font-size:8.20px;">Porous Media</span>
<span class="t" style="left:33.20px;top:443.00px;font-size:8.20px;letter-spacing:0.053px;">Numerics</span>
<span class="t" style="left:33.20px;top:458.00px;font-size:8.20px;letter-spacing:0.105px;">Simulation Control</span>
<span class="t" style="left:33.20px;top:472.00px;font-size:8.20px;letter-spacing:0.058px;">Result Control</span>
<span class="t" style="left:33.20px;top:485.00px;font-size:8.20px;letter-spacing:-0.068px;">Simulation Runs</span>
<span class="t" style="left:11.70px;top:656.00px;font-size:8.20px;letter-spacing:-0.139px;color:#3a87ad;">Job Status</span>
<span class="t" style="left:8.50px;top:680.00px;font-size:8.20px;letter-spacing:-0.011px;">Name</span>
<span class="t" style="left:83.60px;top:680.00px;font-size:8.20px;">Status</span>
<span class="t" style="left:12.00px;top:703.00px;font-size:8.20px;letter-spacing:0.109px;">Operation 1</span>
<span class="t" style="left:99.50px;top:703.00px;font-size:8.00px;letter-spacing:-0.524px;font-weight:700;color:#fff;">Finished</span>
<span class="t" style="left:512.80px;top:64.00px;font-size:7.80px;letter-spacing:-0.630px;font-weight:700;color:#fff;">Save</span>
<span class="t" style="left:210.00px;top:97.00px;font-size:8.00px;letter-spacing:-0.011px;">Name</span>
<span class="t" style="left:210.00px;top:122.00px;font-size:8.00px;letter-spacing:-0.211px;">Type</span>
<span class="t" style="left:385.50px;top:102.00px;font-size:9.00px;letter-spacing:-0.288px;color:#4a4a4a;">MRFzone</span>
<span class="t" style="left:387.50px;top:127.00px;font-size:8.60px;letter-spacing:0.014px;color:#444;">Multi reference frame (MRF)</span>
<span class="t" style="left:514.00px;top:128.00px;font-size:7.00px;color:#222;">▼</span>
<span class="t" style="left:220.00px;top:147.00px;font-size:8.00px;letter-spacing:-0.108px;font-style:italic;color:#222;">Details</span>
<span class="t" style="left:220.80px;top:162.00px;font-size:8.00px;letter-spacing:0.123px;">MRF coefficients</span>
<span class="t" style="left:230.80px;top:178.00px;font-size:8.00px;letter-spacing:-0.197px;font-style:italic;color:#222;">Properties</span>
<span class="t" style="left:231.70px;top:192.00px;font-size:8.00px;letter-spacing:0.156px;">Rotation center</span>
<span class="t" style="left:241.70px;top:209.00px;font-size:8.00px;letter-spacing:-0.147px;font-style:italic;color:#222;">Properties</span>
<span class="t" style="left:242.80px;top:223.00px;font-size:8.00px;letter-spacing:0.019px;">x value [m]</span>
<span class="t" style="left:242.80px;top:248.00px;font-size:8.00px;letter-spacing:0.019px;">y value [m]</span>
<span class="t" style="left:242.80px;top:273.00px;font-size:8.00px;letter-spacing:0.019px;">z value [m]</span>
<span class="t" style="left:400.00px;top:227.00px;font-size:9.20px;color:#444;">0</span>
<span class="t" style="left:400.00px;top:252.00px;font-size:9.20px;color:#444;">0</span>
<span class="t" style="left:400.00px;top:277.00px;font-size:9.20px;color:#444;">0</span>
<span class="t" style="left:231.70px;top:311.00px;font-size:8.00px;letter-spacing:0.104px;">Rotation axis</span>
<span class="t" style="left:241.70px;top:327.00px;font-size:8.00px;letter-spacing:-0.147px;font-style:italic;color:#222;">Properties</span>
<span class="t" style="left:242.80px;top:342.00px;font-size:8.00px;letter-spacing:0.019px;">x value [m]</span>
<span class="t" style="left:242.80px;top:367.00px;font-size:8.00px;letter-spacing:0.019px;">y value [m]</span>
<span class="t" style="left:242.80px;top:392.00px;font-size:8.00px;letter-spacing:0.019px;">z value [m]</span>
<span class="t" style="left:400.00px;top:346.00px;font-size:9.20px;color:#444;">1</span>
<span class="t" style="left:400.00px;top:371.00px;font-size:9.20px;color:#444;">1</span>
<span class="t" style="left:400.00px;top:396.00px;font-size:9.20px;color:#444;">1</span>
<span class="t" style="left:232.00px;top:430.00px;font-size:8.00px;letter-spacing:0.136px;">Angular velocity [rad/s]</span>
<span class="t" style="left:395.10px;top:434.00px;font-size:9.20px;letter-spacing:-0.160px;color:#444;">-12.56</span>
<span class="t" style="left:210.00px;top:511.00px;font-size:11.40px;letter-spacing:-0.425px;font-weight:700;color:#222;">MRF zones</span>
<span class="t" style="left:209.70px;top:533.00px;font-size:8.00px;letter-spacing:0.229px;">Filter for entity types</span>
<span class="t" style="left:387.50px;top:538.00px;font-size:8.60px;letter-spacing:0.071px;color:#444;">volumes</span>
<span class="t" style="left:514.00px;top:539.00px;font-size:7.00px;color:#222;">▼</span>
<span class="t" style="left:228.00px;top:578.00px;font-size:8.00px;letter-spacing:-0.053px;">Assigned</span>
<span class="t" style="left:295.00px;top:578.00px;font-size:8.00px;letter-spacing:0.204px;">Entity/Assignment</span>
<span class="t" style="left:282.80px;top:602.00px;font-size:8.00px;letter-spacing:-0.067px;">MRF_solid_0</span>
<span class="t" style="left:282.80px;top:624.00px;font-size:8.00px;letter-spacing:0.188px;">region0</span>
<span class="t" style="left:671.20px;top:65.00px;font-size:8.20px;letter-spacing:0.358px;">Orthogonal</span>
<span class="t" style="left:761.70px;top:65.00px;font-size:8.20px;letter-spacing:0.283px;">surfaces with wireframe</span>
<span class="t" style="left:1050.00px;top:65.00px;font-size:8.20px;letter-spacing:0.172px;">Create set</span>
<span class="t" style="left:1112.80px;top:65.00px;font-size:8.20px;letter-spacing:0.383px;">Filter</span>
<span class="t" style="left:1208.70px;top:104.00px;font-size:7.00px;letter-spacing:-0.372px;color:#4a8db5;">Scene</span>
<span class="t" style="left:1218.80px;top:116.00px;font-size:7.00px;letter-spacing:-0.066px;color:#4a8db5;">MRF-mesh</span>
<span class="t" style="left:1241.60px;top:129.00px;font-size:7.00px;letter-spacing:0.077px;color:#4a8db5;">region0</span>
<span class="t" style="left:1241.60px;top:142.00px;font-size:7.00px;letter-spacing:-0.168px;color:#4a8db5;">MRF_solid_0</span>

</div>
</body>
</html>
